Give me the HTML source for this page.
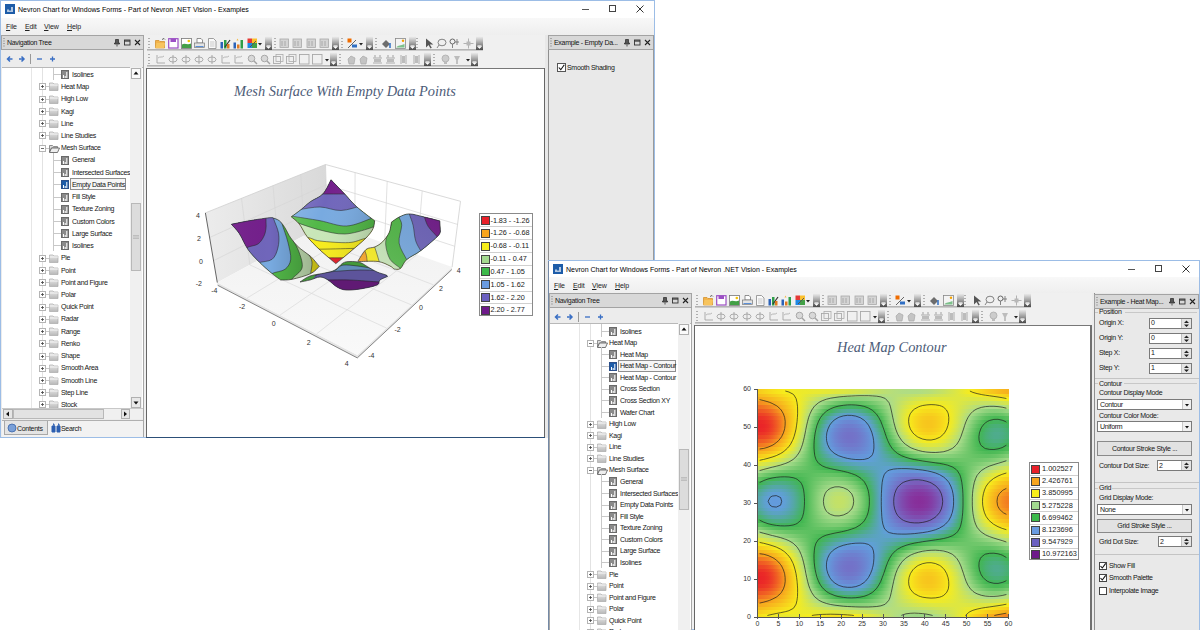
<!DOCTYPE html><html><head><meta charset="utf-8"><style>
html,body{margin:0;padding:0;background:#fff}
#r{position:relative;width:1200px;height:630px;overflow:hidden;background:#ffffff;font-family:"Liberation Sans",sans-serif}
#r div,#r span,#r svg{position:absolute}
#r span{white-space:nowrap;line-height:0;}
</style></head><body><div id="r">
<div style="left:0px;top:0px;width:655px;height:438px;background:#f0f0f0;border:1px solid #9cbde6;box-sizing:border-box"></div>
<div style="left:1px;top:1px;width:653px;height:17px;background:#fff"></div>
<div style="left:5px;top:4px;width:10px;height:10px;background:#1d5ca8"></div>
<svg style="left:5px;top:4px" width="10" height="10"><path d="M3 5.5v2.5M5 6.5v1.5M7 3v5" stroke="#fff" stroke-width="1.3"/></svg>
<span style="left:18px;top:9.8px;font-size:7px;color:#000">Nevron Chart for Windows Forms - Part of Nevron .NET Vision - Examples</span>
<div style="left:582px;top:9px;width:7px;height:1px;background:#555"></div>
<div style="left:609px;top:5px;width:7px;height:7px;border:1px solid #444;box-sizing:border-box"></div>
<svg style="left:636px;top:5px" width="8" height="8"><path d="M0.5 0.5L7.5 7.5M7.5 0.5L0.5 7.5" stroke="#333" stroke-width="1"/></svg>
<div style="left:1px;top:18px;width:653px;height:17px;background:linear-gradient(#f8f8f8,#eeeeee)"></div>
<span style="left:6px;top:27px;font-size:7px;color:#222;letter-spacing:-0.1px"><u>F</u>ile</span>
<span style="left:25px;top:27px;font-size:7px;color:#222;letter-spacing:-0.1px"><u>E</u>dit</span>
<span style="left:44px;top:27px;font-size:7px;color:#222;letter-spacing:-0.1px"><u>V</u>iew</span>
<span style="left:67px;top:27px;font-size:7px;color:#222;letter-spacing:-0.1px"><u>H</u>elp</span>
<div style="left:1px;top:35px;width:143px;height:402px;background:#ececec;border-right:1px solid #a8a8a8;box-sizing:border-box"></div>
<div style="left:1px;top:35px;width:143px;height:15px;background:#d8d8d8;border:1px solid #a3a3a3;box-sizing:border-box"></div>
<svg style="left:3px;top:38px" width="2" height="10"><path d="M1 0v10" stroke="#777" stroke-dasharray="1 1.5"/></svg>
<span style="left:7px;top:42.5px;font-size:7px;color:#151515;letter-spacing:-0.3px">Navigation Tree</span>
<svg style="left:113px;top:38px" width="30" height="9"><path d="M2.5 1.5h3v3.5h1v1h-5v-1h1zM4 6.5v2" stroke="#333" fill="#555" stroke-width="0.8"/><rect x="11.5" y="2" width="5.5" height="5" stroke="#333" fill="none" stroke-width="0.9"/><path d="M11.5 3h5.5" stroke="#333" stroke-width="1.2"/><path d="M22 2l5 5M27 2l-5 5" stroke="#222" stroke-width="1.1"/></svg>
<div style="left:2px;top:50px;width:141px;height:18px;background:#ececec"></div>
<svg style="left:6px;top:54px" width="60" height="10"><path d="M1.5 5h5M4 2.5L1.5 5 4 7.5" stroke="#3a6fc4" stroke-width="1.5" fill="none"/><path d="M13 5h5M15.5 2.5L18 5l-2.5 2.5" stroke="#3a6fc4" stroke-width="1.5" fill="none"/><path d="M24.5 0v10" stroke="#999"/><path d="M31 5h5" stroke="#3a6fc4" stroke-width="1.3"/><path d="M44 5h5M46.5 2.5v5" stroke="#3a6fc4" stroke-width="1.3"/></svg>
<div style="left:2px;top:67px;width:141px;height:342px;background:#fff;border-top:1px solid #b8b8b8;box-sizing:border-box"></div>
<div style="left:2px;top:68px;width:128px;height:340px;overflow:hidden;background:#fff">
<div style="left:29px;top:0px;width:1px;height:340px;background:#e6e6e6"></div>
<div style="left:40px;top:0px;width:1px;height:340px;background:#e2e2e2"></div>
<div style="left:51px;top:-0.7999999999999998px;width:1px;height:13px;background:#c8c8c8"></div>
<div style="left:52px;top:6.2px;width:7px;height:1px;background:#c8c8c8"></div>
<svg style="left:59px;top:2.2px" width="8" height="9"><rect width="8" height="9" fill="#8a8a8a"/><rect x="0.5" y="0.5" width="7" height="8" fill="none" stroke="#6a6a6a"/><path d="M2.5 5v3M4.2 6v2M5.8 2v6" stroke="#fff" stroke-width="1"/></svg>
<span style="left:70px;top:6.8px;font-size:7px;color:#151515;letter-spacing:-0.3px">Isolines</span>
<div style="left:44px;top:18.4px;width:3px;height:1px;background:#c8c8c8"></div>
<svg style="left:37px;top:15.399999999999999px" width="7" height="7"><rect x="0.5" y="0.5" width="6" height="6" fill="#fff" stroke="#b4b4b4"/><path d="M2 3.5h3M3.5 2v3" stroke="#444" stroke-width="0.8"/></svg>
<svg style="left:47px;top:14.399999999999999px" width="10" height="9"><defs><linearGradient id="fg" x1="0" y1="0" x2="0" y2="1"><stop offset="0" stop-color="#e8e8e8"/><stop offset="1" stop-color="#b8b8b8"/></linearGradient></defs><path d="M0.5 1h3.5l1 1h4v6.5h-8.5z" fill="url(#fg)" stroke="#aaa" stroke-width="0.7"/><path d="M0.7 3h8.6" stroke="#f4f4f4"/></svg>
<span style="left:59px;top:19.0px;font-size:7px;color:#151515;letter-spacing:-0.3px">Heat Map</span>
<div style="left:44px;top:30.7px;width:3px;height:1px;background:#c8c8c8"></div>
<svg style="left:37px;top:27.7px" width="7" height="7"><rect x="0.5" y="0.5" width="6" height="6" fill="#fff" stroke="#b4b4b4"/><path d="M2 3.5h3M3.5 2v3" stroke="#444" stroke-width="0.8"/></svg>
<svg style="left:47px;top:26.7px" width="10" height="9"><defs><linearGradient id="fg" x1="0" y1="0" x2="0" y2="1"><stop offset="0" stop-color="#e8e8e8"/><stop offset="1" stop-color="#b8b8b8"/></linearGradient></defs><path d="M0.5 1h3.5l1 1h4v6.5h-8.5z" fill="url(#fg)" stroke="#aaa" stroke-width="0.7"/><path d="M0.7 3h8.6" stroke="#f4f4f4"/></svg>
<span style="left:59px;top:31.3px;font-size:7px;color:#151515;letter-spacing:-0.3px">High Low</span>
<div style="left:44px;top:42.9px;width:3px;height:1px;background:#c8c8c8"></div>
<svg style="left:37px;top:39.9px" width="7" height="7"><rect x="0.5" y="0.5" width="6" height="6" fill="#fff" stroke="#b4b4b4"/><path d="M2 3.5h3M3.5 2v3" stroke="#444" stroke-width="0.8"/></svg>
<svg style="left:47px;top:38.9px" width="10" height="9"><defs><linearGradient id="fg" x1="0" y1="0" x2="0" y2="1"><stop offset="0" stop-color="#e8e8e8"/><stop offset="1" stop-color="#b8b8b8"/></linearGradient></defs><path d="M0.5 1h3.5l1 1h4v6.5h-8.5z" fill="url(#fg)" stroke="#aaa" stroke-width="0.7"/><path d="M0.7 3h8.6" stroke="#f4f4f4"/></svg>
<span style="left:59px;top:43.5px;font-size:7px;color:#151515;letter-spacing:-0.3px">Kagi</span>
<div style="left:44px;top:55.1px;width:3px;height:1px;background:#c8c8c8"></div>
<svg style="left:37px;top:52.1px" width="7" height="7"><rect x="0.5" y="0.5" width="6" height="6" fill="#fff" stroke="#b4b4b4"/><path d="M2 3.5h3M3.5 2v3" stroke="#444" stroke-width="0.8"/></svg>
<svg style="left:47px;top:51.1px" width="10" height="9"><defs><linearGradient id="fg" x1="0" y1="0" x2="0" y2="1"><stop offset="0" stop-color="#e8e8e8"/><stop offset="1" stop-color="#b8b8b8"/></linearGradient></defs><path d="M0.5 1h3.5l1 1h4v6.5h-8.5z" fill="url(#fg)" stroke="#aaa" stroke-width="0.7"/><path d="M0.7 3h8.6" stroke="#f4f4f4"/></svg>
<span style="left:59px;top:55.7px;font-size:7px;color:#151515;letter-spacing:-0.3px">Line</span>
<div style="left:44px;top:67.4px;width:3px;height:1px;background:#c8c8c8"></div>
<svg style="left:37px;top:64.4px" width="7" height="7"><rect x="0.5" y="0.5" width="6" height="6" fill="#fff" stroke="#b4b4b4"/><path d="M2 3.5h3M3.5 2v3" stroke="#444" stroke-width="0.8"/></svg>
<svg style="left:47px;top:63.400000000000006px" width="10" height="9"><defs><linearGradient id="fg" x1="0" y1="0" x2="0" y2="1"><stop offset="0" stop-color="#e8e8e8"/><stop offset="1" stop-color="#b8b8b8"/></linearGradient></defs><path d="M0.5 1h3.5l1 1h4v6.5h-8.5z" fill="url(#fg)" stroke="#aaa" stroke-width="0.7"/><path d="M0.7 3h8.6" stroke="#f4f4f4"/></svg>
<span style="left:59px;top:68.0px;font-size:7px;color:#151515;letter-spacing:-0.3px">Line Studies</span>
<div style="left:44px;top:79.6px;width:3px;height:1px;background:#c8c8c8"></div>
<svg style="left:37px;top:76.6px" width="7" height="7"><rect x="0.5" y="0.5" width="6" height="6" fill="#fff" stroke="#b4b4b4"/><path d="M2 3.5h3" stroke="#444" stroke-width="0.8"/></svg>
<svg style="left:47px;top:75.6px" width="11" height="9"><path d="M0.5 1.5h3l1 1h4v1.5H2.5L0.5 8z" fill="#ddd" stroke="#777" stroke-width="0.8"/><path d="M2.5 4h8l-2 4.5h-8z" fill="#eee" stroke="#555" stroke-width="0.8"/></svg>
<span style="left:59px;top:80.19999999999999px;font-size:7px;color:#151515;letter-spacing:-0.3px">Mesh Surface</span>
<div style="left:51px;top:84.8px;width:1px;height:13px;background:#c8c8c8"></div>
<div style="left:52px;top:91.8px;width:7px;height:1px;background:#c8c8c8"></div>
<svg style="left:59px;top:87.8px" width="8" height="9"><rect width="8" height="9" fill="#8a8a8a"/><rect x="0.5" y="0.5" width="7" height="8" fill="none" stroke="#6a6a6a"/><path d="M2.5 5v3M4.2 6v2M5.8 2v6" stroke="#fff" stroke-width="1"/></svg>
<span style="left:70px;top:92.39999999999999px;font-size:7px;color:#151515;letter-spacing:-0.3px">General</span>
<div style="left:51px;top:97.0px;width:1px;height:13px;background:#c8c8c8"></div>
<div style="left:52px;top:104.0px;width:7px;height:1px;background:#c8c8c8"></div>
<svg style="left:59px;top:100.0px" width="8" height="9"><rect width="8" height="9" fill="#8a8a8a"/><rect x="0.5" y="0.5" width="7" height="8" fill="none" stroke="#6a6a6a"/><path d="M2.5 5v3M4.2 6v2M5.8 2v6" stroke="#fff" stroke-width="1"/></svg>
<span style="left:70px;top:104.6px;font-size:7px;color:#151515;letter-spacing:-0.3px">Intersected Surfaces</span>
<div style="left:51px;top:109.3px;width:1px;height:13px;background:#c8c8c8"></div>
<div style="left:52px;top:116.3px;width:7px;height:1px;background:#c8c8c8"></div>
<svg style="left:59px;top:112.3px" width="8" height="9"><rect width="8" height="9" fill="#1d5ca8"/><rect x="0.5" y="0.5" width="7" height="8" fill="none" stroke="#2b4f8a"/><path d="M2.5 5v3M4.2 6v2M5.8 2v6" stroke="#fff" stroke-width="1"/></svg>
<div style="left:68px;top:110.3px;width:56px;height:12px;border:1px solid #8f8f8f;box-sizing:border-box;background:#f6f6f6"></div>
<span style="left:70px;top:116.89999999999999px;font-size:7px;color:#151515;letter-spacing:-0.3px">Empty Data Points</span>
<div style="left:51px;top:121.5px;width:1px;height:13px;background:#c8c8c8"></div>
<div style="left:52px;top:128.5px;width:7px;height:1px;background:#c8c8c8"></div>
<svg style="left:59px;top:124.5px" width="8" height="9"><rect width="8" height="9" fill="#8a8a8a"/><rect x="0.5" y="0.5" width="7" height="8" fill="none" stroke="#6a6a6a"/><path d="M2.5 5v3M4.2 6v2M5.8 2v6" stroke="#fff" stroke-width="1"/></svg>
<span style="left:70px;top:129.1px;font-size:7px;color:#151515;letter-spacing:-0.3px">Fill Style</span>
<div style="left:51px;top:133.7px;width:1px;height:13px;background:#c8c8c8"></div>
<div style="left:52px;top:140.7px;width:7px;height:1px;background:#c8c8c8"></div>
<svg style="left:59px;top:136.7px" width="8" height="9"><rect width="8" height="9" fill="#8a8a8a"/><rect x="0.5" y="0.5" width="7" height="8" fill="none" stroke="#6a6a6a"/><path d="M2.5 5v3M4.2 6v2M5.8 2v6" stroke="#fff" stroke-width="1"/></svg>
<span style="left:70px;top:141.29999999999998px;font-size:7px;color:#151515;letter-spacing:-0.3px">Texture Zoning</span>
<div style="left:51px;top:146.0px;width:1px;height:13px;background:#c8c8c8"></div>
<div style="left:52px;top:153.0px;width:7px;height:1px;background:#c8c8c8"></div>
<svg style="left:59px;top:149.0px" width="8" height="9"><rect width="8" height="9" fill="#8a8a8a"/><rect x="0.5" y="0.5" width="7" height="8" fill="none" stroke="#6a6a6a"/><path d="M2.5 5v3M4.2 6v2M5.8 2v6" stroke="#fff" stroke-width="1"/></svg>
<span style="left:70px;top:153.6px;font-size:7px;color:#151515;letter-spacing:-0.3px">Custom Colors</span>
<div style="left:51px;top:158.2px;width:1px;height:13px;background:#c8c8c8"></div>
<div style="left:52px;top:165.2px;width:7px;height:1px;background:#c8c8c8"></div>
<svg style="left:59px;top:161.2px" width="8" height="9"><rect width="8" height="9" fill="#8a8a8a"/><rect x="0.5" y="0.5" width="7" height="8" fill="none" stroke="#6a6a6a"/><path d="M2.5 5v3M4.2 6v2M5.8 2v6" stroke="#fff" stroke-width="1"/></svg>
<span style="left:70px;top:165.79999999999998px;font-size:7px;color:#151515;letter-spacing:-0.3px">Large Surface</span>
<div style="left:51px;top:170.4px;width:1px;height:13px;background:#c8c8c8"></div>
<div style="left:52px;top:177.4px;width:7px;height:1px;background:#c8c8c8"></div>
<svg style="left:59px;top:173.4px" width="8" height="9"><rect width="8" height="9" fill="#8a8a8a"/><rect x="0.5" y="0.5" width="7" height="8" fill="none" stroke="#6a6a6a"/><path d="M2.5 5v3M4.2 6v2M5.8 2v6" stroke="#fff" stroke-width="1"/></svg>
<span style="left:70px;top:178.0px;font-size:7px;color:#151515;letter-spacing:-0.3px">Isolines</span>
<div style="left:44px;top:189.7px;width:3px;height:1px;background:#c8c8c8"></div>
<svg style="left:37px;top:186.7px" width="7" height="7"><rect x="0.5" y="0.5" width="6" height="6" fill="#fff" stroke="#b4b4b4"/><path d="M2 3.5h3M3.5 2v3" stroke="#444" stroke-width="0.8"/></svg>
<svg style="left:47px;top:185.7px" width="10" height="9"><defs><linearGradient id="fg" x1="0" y1="0" x2="0" y2="1"><stop offset="0" stop-color="#e8e8e8"/><stop offset="1" stop-color="#b8b8b8"/></linearGradient></defs><path d="M0.5 1h3.5l1 1h4v6.5h-8.5z" fill="url(#fg)" stroke="#aaa" stroke-width="0.7"/><path d="M0.7 3h8.6" stroke="#f4f4f4"/></svg>
<span style="left:59px;top:190.29999999999998px;font-size:7px;color:#151515;letter-spacing:-0.3px">Pie</span>
<div style="left:44px;top:201.9px;width:3px;height:1px;background:#c8c8c8"></div>
<svg style="left:37px;top:198.9px" width="7" height="7"><rect x="0.5" y="0.5" width="6" height="6" fill="#fff" stroke="#b4b4b4"/><path d="M2 3.5h3M3.5 2v3" stroke="#444" stroke-width="0.8"/></svg>
<svg style="left:47px;top:197.9px" width="10" height="9"><defs><linearGradient id="fg" x1="0" y1="0" x2="0" y2="1"><stop offset="0" stop-color="#e8e8e8"/><stop offset="1" stop-color="#b8b8b8"/></linearGradient></defs><path d="M0.5 1h3.5l1 1h4v6.5h-8.5z" fill="url(#fg)" stroke="#aaa" stroke-width="0.7"/><path d="M0.7 3h8.6" stroke="#f4f4f4"/></svg>
<span style="left:59px;top:202.5px;font-size:7px;color:#151515;letter-spacing:-0.3px">Point</span>
<div style="left:44px;top:214.1px;width:3px;height:1px;background:#c8c8c8"></div>
<svg style="left:37px;top:211.1px" width="7" height="7"><rect x="0.5" y="0.5" width="6" height="6" fill="#fff" stroke="#b4b4b4"/><path d="M2 3.5h3M3.5 2v3" stroke="#444" stroke-width="0.8"/></svg>
<svg style="left:47px;top:210.1px" width="10" height="9"><defs><linearGradient id="fg" x1="0" y1="0" x2="0" y2="1"><stop offset="0" stop-color="#e8e8e8"/><stop offset="1" stop-color="#b8b8b8"/></linearGradient></defs><path d="M0.5 1h3.5l1 1h4v6.5h-8.5z" fill="url(#fg)" stroke="#aaa" stroke-width="0.7"/><path d="M0.7 3h8.6" stroke="#f4f4f4"/></svg>
<span style="left:59px;top:214.7px;font-size:7px;color:#151515;letter-spacing:-0.3px">Point and Figure</span>
<div style="left:44px;top:226.3px;width:3px;height:1px;background:#c8c8c8"></div>
<svg style="left:37px;top:223.3px" width="7" height="7"><rect x="0.5" y="0.5" width="6" height="6" fill="#fff" stroke="#b4b4b4"/><path d="M2 3.5h3M3.5 2v3" stroke="#444" stroke-width="0.8"/></svg>
<svg style="left:47px;top:222.3px" width="10" height="9"><defs><linearGradient id="fg" x1="0" y1="0" x2="0" y2="1"><stop offset="0" stop-color="#e8e8e8"/><stop offset="1" stop-color="#b8b8b8"/></linearGradient></defs><path d="M0.5 1h3.5l1 1h4v6.5h-8.5z" fill="url(#fg)" stroke="#aaa" stroke-width="0.7"/><path d="M0.7 3h8.6" stroke="#f4f4f4"/></svg>
<span style="left:59px;top:226.9px;font-size:7px;color:#151515;letter-spacing:-0.3px">Polar</span>
<div style="left:44px;top:238.6px;width:3px;height:1px;background:#c8c8c8"></div>
<svg style="left:37px;top:235.6px" width="7" height="7"><rect x="0.5" y="0.5" width="6" height="6" fill="#fff" stroke="#b4b4b4"/><path d="M2 3.5h3M3.5 2v3" stroke="#444" stroke-width="0.8"/></svg>
<svg style="left:47px;top:234.6px" width="10" height="9"><defs><linearGradient id="fg" x1="0" y1="0" x2="0" y2="1"><stop offset="0" stop-color="#e8e8e8"/><stop offset="1" stop-color="#b8b8b8"/></linearGradient></defs><path d="M0.5 1h3.5l1 1h4v6.5h-8.5z" fill="url(#fg)" stroke="#aaa" stroke-width="0.7"/><path d="M0.7 3h8.6" stroke="#f4f4f4"/></svg>
<span style="left:59px;top:239.2px;font-size:7px;color:#151515;letter-spacing:-0.3px">Quick Point</span>
<div style="left:44px;top:250.8px;width:3px;height:1px;background:#c8c8c8"></div>
<svg style="left:37px;top:247.8px" width="7" height="7"><rect x="0.5" y="0.5" width="6" height="6" fill="#fff" stroke="#b4b4b4"/><path d="M2 3.5h3M3.5 2v3" stroke="#444" stroke-width="0.8"/></svg>
<svg style="left:47px;top:246.8px" width="10" height="9"><defs><linearGradient id="fg" x1="0" y1="0" x2="0" y2="1"><stop offset="0" stop-color="#e8e8e8"/><stop offset="1" stop-color="#b8b8b8"/></linearGradient></defs><path d="M0.5 1h3.5l1 1h4v6.5h-8.5z" fill="url(#fg)" stroke="#aaa" stroke-width="0.7"/><path d="M0.7 3h8.6" stroke="#f4f4f4"/></svg>
<span style="left:59px;top:251.4px;font-size:7px;color:#151515;letter-spacing:-0.3px">Radar</span>
<div style="left:44px;top:263.0px;width:3px;height:1px;background:#c8c8c8"></div>
<svg style="left:37px;top:260.0px" width="7" height="7"><rect x="0.5" y="0.5" width="6" height="6" fill="#fff" stroke="#b4b4b4"/><path d="M2 3.5h3M3.5 2v3" stroke="#444" stroke-width="0.8"/></svg>
<svg style="left:47px;top:259.0px" width="10" height="9"><defs><linearGradient id="fg" x1="0" y1="0" x2="0" y2="1"><stop offset="0" stop-color="#e8e8e8"/><stop offset="1" stop-color="#b8b8b8"/></linearGradient></defs><path d="M0.5 1h3.5l1 1h4v6.5h-8.5z" fill="url(#fg)" stroke="#aaa" stroke-width="0.7"/><path d="M0.7 3h8.6" stroke="#f4f4f4"/></svg>
<span style="left:59px;top:263.6px;font-size:7px;color:#151515;letter-spacing:-0.3px">Range</span>
<div style="left:44px;top:275.3px;width:3px;height:1px;background:#c8c8c8"></div>
<svg style="left:37px;top:272.3px" width="7" height="7"><rect x="0.5" y="0.5" width="6" height="6" fill="#fff" stroke="#b4b4b4"/><path d="M2 3.5h3M3.5 2v3" stroke="#444" stroke-width="0.8"/></svg>
<svg style="left:47px;top:271.3px" width="10" height="9"><defs><linearGradient id="fg" x1="0" y1="0" x2="0" y2="1"><stop offset="0" stop-color="#e8e8e8"/><stop offset="1" stop-color="#b8b8b8"/></linearGradient></defs><path d="M0.5 1h3.5l1 1h4v6.5h-8.5z" fill="url(#fg)" stroke="#aaa" stroke-width="0.7"/><path d="M0.7 3h8.6" stroke="#f4f4f4"/></svg>
<span style="left:59px;top:275.90000000000003px;font-size:7px;color:#151515;letter-spacing:-0.3px">Renko</span>
<div style="left:44px;top:287.5px;width:3px;height:1px;background:#c8c8c8"></div>
<svg style="left:37px;top:284.5px" width="7" height="7"><rect x="0.5" y="0.5" width="6" height="6" fill="#fff" stroke="#b4b4b4"/><path d="M2 3.5h3M3.5 2v3" stroke="#444" stroke-width="0.8"/></svg>
<svg style="left:47px;top:283.5px" width="10" height="9"><defs><linearGradient id="fg" x1="0" y1="0" x2="0" y2="1"><stop offset="0" stop-color="#e8e8e8"/><stop offset="1" stop-color="#b8b8b8"/></linearGradient></defs><path d="M0.5 1h3.5l1 1h4v6.5h-8.5z" fill="url(#fg)" stroke="#aaa" stroke-width="0.7"/><path d="M0.7 3h8.6" stroke="#f4f4f4"/></svg>
<span style="left:59px;top:288.1px;font-size:7px;color:#151515;letter-spacing:-0.3px">Shape</span>
<div style="left:44px;top:299.7px;width:3px;height:1px;background:#c8c8c8"></div>
<svg style="left:37px;top:296.7px" width="7" height="7"><rect x="0.5" y="0.5" width="6" height="6" fill="#fff" stroke="#b4b4b4"/><path d="M2 3.5h3M3.5 2v3" stroke="#444" stroke-width="0.8"/></svg>
<svg style="left:47px;top:295.7px" width="10" height="9"><defs><linearGradient id="fg" x1="0" y1="0" x2="0" y2="1"><stop offset="0" stop-color="#e8e8e8"/><stop offset="1" stop-color="#b8b8b8"/></linearGradient></defs><path d="M0.5 1h3.5l1 1h4v6.5h-8.5z" fill="url(#fg)" stroke="#aaa" stroke-width="0.7"/><path d="M0.7 3h8.6" stroke="#f4f4f4"/></svg>
<span style="left:59px;top:300.3px;font-size:7px;color:#151515;letter-spacing:-0.3px">Smooth Area</span>
<div style="left:44px;top:311.9px;width:3px;height:1px;background:#c8c8c8"></div>
<svg style="left:37px;top:308.9px" width="7" height="7"><rect x="0.5" y="0.5" width="6" height="6" fill="#fff" stroke="#b4b4b4"/><path d="M2 3.5h3M3.5 2v3" stroke="#444" stroke-width="0.8"/></svg>
<svg style="left:47px;top:307.9px" width="10" height="9"><defs><linearGradient id="fg" x1="0" y1="0" x2="0" y2="1"><stop offset="0" stop-color="#e8e8e8"/><stop offset="1" stop-color="#b8b8b8"/></linearGradient></defs><path d="M0.5 1h3.5l1 1h4v6.5h-8.5z" fill="url(#fg)" stroke="#aaa" stroke-width="0.7"/><path d="M0.7 3h8.6" stroke="#f4f4f4"/></svg>
<span style="left:59px;top:312.5px;font-size:7px;color:#151515;letter-spacing:-0.3px">Smooth Line</span>
<div style="left:44px;top:324.2px;width:3px;height:1px;background:#c8c8c8"></div>
<svg style="left:37px;top:321.2px" width="7" height="7"><rect x="0.5" y="0.5" width="6" height="6" fill="#fff" stroke="#b4b4b4"/><path d="M2 3.5h3M3.5 2v3" stroke="#444" stroke-width="0.8"/></svg>
<svg style="left:47px;top:320.2px" width="10" height="9"><defs><linearGradient id="fg" x1="0" y1="0" x2="0" y2="1"><stop offset="0" stop-color="#e8e8e8"/><stop offset="1" stop-color="#b8b8b8"/></linearGradient></defs><path d="M0.5 1h3.5l1 1h4v6.5h-8.5z" fill="url(#fg)" stroke="#aaa" stroke-width="0.7"/><path d="M0.7 3h8.6" stroke="#f4f4f4"/></svg>
<span style="left:59px;top:324.8px;font-size:7px;color:#151515;letter-spacing:-0.3px">Step Line</span>
<div style="left:44px;top:336.4px;width:3px;height:1px;background:#c8c8c8"></div>
<svg style="left:37px;top:333.4px" width="7" height="7"><rect x="0.5" y="0.5" width="6" height="6" fill="#fff" stroke="#b4b4b4"/><path d="M2 3.5h3M3.5 2v3" stroke="#444" stroke-width="0.8"/></svg>
<svg style="left:47px;top:332.4px" width="10" height="9"><defs><linearGradient id="fg" x1="0" y1="0" x2="0" y2="1"><stop offset="0" stop-color="#e8e8e8"/><stop offset="1" stop-color="#b8b8b8"/></linearGradient></defs><path d="M0.5 1h3.5l1 1h4v6.5h-8.5z" fill="url(#fg)" stroke="#aaa" stroke-width="0.7"/><path d="M0.7 3h8.6" stroke="#f4f4f4"/></svg>
<span style="left:59px;top:337.0px;font-size:7px;color:#151515;letter-spacing:-0.3px">Stock</span>
</div>
<div style="left:130px;top:67px;width:12px;height:341px;background:#f0f0f0"></div>
<div style="left:131px;top:68px;width:10px;height:11px;background:#fafafa;border:1px solid #b0b0b0;box-sizing:border-box"></div>
<svg style="left:131px;top:68px" width="10" height="11"><path d="M2.5 6.5h5l-2.5-3z" fill="#111"/></svg>
<div style="left:131px;top:397px;width:10px;height:11px;background:#e8e8e8;border:1px solid #b0b0b0;box-sizing:border-box"></div>
<svg style="left:131px;top:397px" width="10" height="11"><path d="M2.5 4.5h5l-2.5 3z" fill="#111"/></svg>
<div style="left:131px;top:203px;width:10px;height:68px;background:#dcdcdc;border:1px solid #b8b8b8;box-sizing:border-box"></div>
<svg style="left:133px;top:235px" width="6" height="4"><path d="M0 0.5h6M0 2h6M0 3.5h6" stroke="#aaa" stroke-width="0.6"/></svg>
<div style="left:2px;top:408px;width:141px;height:11px;background:#f0f0f0;border-top:1px solid #c8c8c8;box-sizing:border-box"></div>
<div style="left:3px;top:409px;width:10px;height:10px;background:#e6e6e6;border:1px solid #b0b0b0;box-sizing:border-box"></div>
<svg style="left:3px;top:409px" width="10" height="10"><path d="M6 2.5v5l-3-2.5z" fill="#111"/></svg>
<div style="left:13px;top:409px;width:91px;height:10px;background:#e2e2e2;border:1px solid #b8b8b8;box-sizing:border-box"></div>
<div style="left:121px;top:409px;width:9px;height:10px;background:#e6e6e6;border:1px solid #b0b0b0;box-sizing:border-box"></div>
<svg style="left:121px;top:409px" width="9" height="10"><path d="M3 2.5v5l3-2.5z" fill="#111"/></svg>
<div style="left:2px;top:420px;width:141px;height:17px;background:#f2f2f2;border-top:1px solid #b0b0b0;box-sizing:border-box"></div>
<div style="left:4px;top:421px;width:44px;height:14px;background:#e4e4e4;border:1px solid #a8a8a8;border-top:none;box-sizing:border-box"></div>
<svg style="left:7px;top:423px" width="10" height="10"><circle cx="5" cy="5" r="4" fill="#7aa0d8" stroke="#3a64a8" stroke-width="0.8"/></svg>
<span style="left:17px;top:428.5px;font-size:7px;color:#151515;letter-spacing:-0.3px">Contents</span>
<svg style="left:51px;top:423px" width="10" height="10"><path d="M1 3h3v6H1zM6 3h3v6H6zM2 1h1v2M7 1h1v2" fill="#2d5fb0" stroke="#2d5fb0"/></svg>
<span style="left:61px;top:428.5px;font-size:7px;color:#151515;letter-spacing:-0.3px">Search</span>
<div style="left:145px;top:35px;width:402px;height:33px;background:#f0f0f0"></div>
<div style="left:147px;top:49px;width:126px;height:2px;background:linear-gradient(#a8a8a8,#d8d8d8)"></div>
<div style="left:273px;top:49px;width:67px;height:2px;background:linear-gradient(#a8a8a8,#d8d8d8)"></div>
<div style="left:340px;top:49px;width:34px;height:2px;background:linear-gradient(#a8a8a8,#d8d8d8)"></div>
<div style="left:374px;top:49px;width:42px;height:2px;background:linear-gradient(#a8a8a8,#d8d8d8)"></div>
<div style="left:415px;top:49px;width:68px;height:2px;background:linear-gradient(#a8a8a8,#d8d8d8)"></div>
<div style="left:147px;top:65px;width:190px;height:2px;background:linear-gradient(#a8a8a8,#d8d8d8)"></div>
<div style="left:337px;top:65px;width:94px;height:2px;background:linear-gradient(#a8a8a8,#d8d8d8)"></div>
<div style="left:431px;top:65px;width:47px;height:2px;background:linear-gradient(#a8a8a8,#d8d8d8)"></div>
<svg style="left:148px;top:38px" width="2" height="11"><path d="M1 0V11" stroke="#6f6f6f" stroke-width="1" stroke-dasharray="1 2"/></svg>
<svg style="left:274px;top:38px" width="2" height="11"><path d="M1 0V11" stroke="#6f6f6f" stroke-width="1" stroke-dasharray="1 2"/></svg>
<svg style="left:341px;top:38px" width="2" height="11"><path d="M1 0V11" stroke="#6f6f6f" stroke-width="1" stroke-dasharray="1 2"/></svg>
<svg style="left:375px;top:38px" width="2" height="11"><path d="M1 0V11" stroke="#6f6f6f" stroke-width="1" stroke-dasharray="1 2"/></svg>
<svg style="left:416px;top:38px" width="2" height="11"><path d="M1 0V11" stroke="#6f6f6f" stroke-width="1" stroke-dasharray="1 2"/></svg>
<svg style="left:148px;top:54px" width="2" height="11"><path d="M1 0V11" stroke="#6f6f6f" stroke-width="1" stroke-dasharray="1 2"/></svg>
<svg style="left:339px;top:54px" width="2" height="11"><path d="M1 0V11" stroke="#6f6f6f" stroke-width="1" stroke-dasharray="1 2"/></svg>
<svg style="left:433px;top:54px" width="2" height="11"><path d="M1 0V11" stroke="#6f6f6f" stroke-width="1" stroke-dasharray="1 2"/></svg>
<svg style="left:155px;top:38px" width="11" height="11"><path d="M0.5 2.5h3.5l1 1h4.5v6.5H0.5z" fill="#f2b34a" stroke="#d08a20" stroke-width="0.7"/><path d="M1.5 5h8.5l-1 5H0.5z" fill="#f7c45e"/><path d="M7 1.5l2-1 1 1" stroke="#444" stroke-width="0.8" fill="none"/></svg>
<svg style="left:168px;top:38px" width="11" height="11"><rect x="0.7" y="0.7" width="9.3" height="9.3" fill="#fff" stroke="#9b4fc4" stroke-width="1.2"/><rect x="2.5" y="0.7" width="5.5" height="3.3" fill="#9b4fc4"/></svg>
<svg style="left:181px;top:38px" width="11" height="11"><rect x="0.5" y="0.5" width="10" height="10" fill="#fff" stroke="#777" stroke-width="0.8"/><path d="M1 10V6.5c3-2 5 1 9-1V10z" fill="#43a047"/><circle cx="7.8" cy="3" r="1.3" fill="#f5c400"/></svg>
<svg style="left:194px;top:38px" width="11" height="11"><path d="M3 0.5h4l1.5 1.5v3H3z" fill="#fff" stroke="#666" stroke-width="0.7"/><rect x="0.5" y="5" width="10" height="4.5" fill="#e4e4e4" stroke="#777" stroke-width="0.7"/><rect x="1.5" y="8" width="8" height="1" fill="#5b8fd6"/></svg>
<svg style="left:207px;top:38px" width="11" height="11"><path d="M1.5 0.5h5l2.5 2.5v7.5H1.5z" fill="#fafafa" stroke="#888" stroke-width="0.8"/><path d="M3 4h4.5M3 6h4.5M3 8h4.5" stroke="#aaa" stroke-width="0.6"/></svg>
<svg style="left:220px;top:38px" width="11" height="11"><rect x="0.5" y="4" width="2.5" height="6.5" fill="#2b62b8"/><rect x="4" y="2" width="2.5" height="8.5" fill="#2e9e48"/><path d="M5 9l5-7" stroke="#333" stroke-width="1.2"/><rect x="7" y="6" width="2.5" height="4.5" fill="#e07a20"/></svg>
<svg style="left:233px;top:38px" width="11" height="11"><rect x="0.5" y="4.5" width="2.5" height="6" fill="#2b62b8"/><rect x="4" y="6.5" width="2.5" height="4" fill="#e07a20"/><rect x="7.5" y="2" width="2.5" height="8.5" fill="#2e9e48"/><path d="M4.5 0.5l1 2h-2z" fill="#f2b840"/></svg>
<svg style="left:247px;top:38px" width="11" height="11"><rect x="0.5" y="0.5" width="4.5" height="4.5" fill="#e53935"/><rect x="5" y="0.5" width="5" height="4.5" fill="#fbc02d"/><rect x="0.5" y="5" width="4.5" height="5" fill="#1e88e5"/><rect x="5" y="5" width="5" height="5" fill="#43a047"/><path d="M3 9l6-6" stroke="#555" stroke-width="1"/></svg>
<svg style="left:279px;top:38px" width="11" height="11"><rect x="1" y="1" width="8.5" height="8.5" fill="#d4d4d4" stroke="#a8a8a8" stroke-width="0.8"/><path d="M3 3v5M6 3v5" stroke="#a0a0a0" stroke-width="0.8"/></svg>
<svg style="left:292px;top:38px" width="11" height="11"><rect x="1" y="1" width="8.5" height="8.5" fill="#d4d4d4" stroke="#a8a8a8" stroke-width="0.8"/><path d="M3 3v5M6 3v5" stroke="#a0a0a0" stroke-width="0.8"/></svg>
<svg style="left:306px;top:38px" width="11" height="11"><rect x="1" y="1" width="8.5" height="8.5" fill="#d4d4d4" stroke="#a8a8a8" stroke-width="0.8"/><path d="M3 3v5M6 3v5" stroke="#a0a0a0" stroke-width="0.8"/></svg>
<svg style="left:319px;top:38px" width="11" height="11"><rect x="1" y="1" width="8.5" height="8.5" fill="#d4d4d4" stroke="#a8a8a8" stroke-width="0.8"/><path d="M3 3v5M6 3v5" stroke="#a0a0a0" stroke-width="0.8"/></svg>
<svg style="left:347px;top:38px" width="11" height="11"><rect x="0.5" y="0.5" width="4" height="4" fill="#ef6c00"/><path d="M1 10L9 2" stroke="#555" stroke-width="0.9"/><rect x="5" y="6.5" width="5" height="3" fill="#2f6fc4"/></svg>
<svg style="left:381px;top:38px" width="11" height="11"><path d="M1 6l4-4 4 4-4 4z" fill="#6d6d6d"/><path d="M9 5v5" stroke="#2f6fc4" stroke-width="1.5"/></svg>
<svg style="left:395px;top:38px" width="11" height="11"><rect x="0.5" y="0.5" width="10" height="10" fill="#f4f4f4" stroke="#888" stroke-width="0.8"/><path d="M1.5 9c2-2 4-1 8-3v3.5h-8z" fill="#7cc08a"/><circle cx="8" cy="2.8" r="1.2" fill="#f5a300"/></svg>
<svg style="left:424px;top:38px" width="11" height="11"><path d="M2 0.5v9l2.5-2.5 2 3.5 1.3-.7-2-3.3h3.5z" fill="#555"/></svg>
<svg style="left:436px;top:38px" width="11" height="11"><ellipse cx="6" cy="4.5" rx="4" ry="3.3" fill="none" stroke="#777" stroke-width="0.9"/><path d="M3 7l-2 3" stroke="#777" stroke-width="0.9"/></svg>
<svg style="left:449px;top:38px" width="11" height="11"><circle cx="3.5" cy="3.5" r="2.5" fill="none" stroke="#666" stroke-width="1"/><path d="M3.5 6v4M8 1v6M6 4h4" stroke="#777" stroke-width="0.9"/></svg>
<svg style="left:463px;top:38px" width="11" height="11"><path d="M5.5 0.5v10M0.5 5.5h10" stroke="#aaa" stroke-width="0.9"/><rect x="3.5" y="3.5" width="4" height="4" fill="#b8b8b8"/></svg>
<svg style="left:258px;top:43px" width="5" height="4"><path d="M0 0h4l-2 2.5z" fill="#222"/></svg>
<svg style="left:359px;top:43px" width="5" height="4"><path d="M0 0h4l-2 2.5z" fill="#222"/></svg>
<div style="left:265px;top:36px;width:7px;height:14px;background:linear-gradient(#f4f4f4,#9a9a9a 55%,#4a4a4a)"></div><svg style="left:266px;top:45px" width="5" height="4"><path d="M0.5 0.5h4M0.5 1.5h4l-2 2z" stroke="#fff" stroke-width="0.6" fill="#fff"/></svg>
<div style="left:332px;top:36px;width:7px;height:14px;background:linear-gradient(#f4f4f4,#9a9a9a 55%,#4a4a4a)"></div><svg style="left:333px;top:45px" width="5" height="4"><path d="M0.5 0.5h4M0.5 1.5h4l-2 2z" stroke="#fff" stroke-width="0.6" fill="#fff"/></svg>
<div style="left:366px;top:36px;width:7px;height:14px;background:linear-gradient(#f4f4f4,#9a9a9a 55%,#4a4a4a)"></div><svg style="left:367px;top:45px" width="5" height="4"><path d="M0.5 0.5h4M0.5 1.5h4l-2 2z" stroke="#fff" stroke-width="0.6" fill="#fff"/></svg>
<div style="left:409px;top:36px;width:7px;height:14px;background:linear-gradient(#f4f4f4,#9a9a9a 55%,#4a4a4a)"></div><svg style="left:410px;top:45px" width="5" height="4"><path d="M0.5 0.5h4M0.5 1.5h4l-2 2z" stroke="#fff" stroke-width="0.6" fill="#fff"/></svg>
<div style="left:476px;top:36px;width:7px;height:14px;background:linear-gradient(#f4f4f4,#9a9a9a 55%,#4a4a4a)"></div><svg style="left:477px;top:45px" width="5" height="4"><path d="M0.5 0.5h4M0.5 1.5h4l-2 2z" stroke="#fff" stroke-width="0.6" fill="#fff"/></svg>
<svg style="left:155px;top:54px" width="11" height="11"><path d="M2 1v8h8" stroke="#a4a4a4" stroke-width="0.9" fill="none"/><path d="M3 4c2-2 4 0 6-2" stroke="#a8a8a8" stroke-width="0.8" fill="none"/></svg>
<svg style="left:168px;top:54px" width="11" height="11"><ellipse cx="5" cy="5.5" rx="4" ry="2.5" fill="none" stroke="#a4a4a4" stroke-width="0.9"/><path d="M5 1v9" stroke="#a2a2a2" stroke-width="0.9"/></svg>
<svg style="left:181px;top:54px" width="11" height="11"><ellipse cx="5" cy="5.5" rx="4" ry="2.5" fill="none" stroke="#a4a4a4" stroke-width="0.9"/><path d="M5 1v9" stroke="#a2a2a2" stroke-width="0.9"/></svg>
<svg style="left:194px;top:54px" width="11" height="11"><ellipse cx="5" cy="5.5" rx="4" ry="2.5" fill="none" stroke="#a4a4a4" stroke-width="0.9"/><path d="M5 1v9" stroke="#a2a2a2" stroke-width="0.9"/></svg>
<svg style="left:207px;top:54px" width="11" height="11"><ellipse cx="5" cy="5.5" rx="4" ry="2.5" fill="none" stroke="#a4a4a4" stroke-width="0.9"/><path d="M5 1v9" stroke="#a2a2a2" stroke-width="0.9"/></svg>
<svg style="left:220px;top:54px" width="11" height="11"><path d="M2 1v8h8" stroke="#a4a4a4" stroke-width="0.9" fill="none"/><path d="M3 4c2-2 4 0 6-2" stroke="#a8a8a8" stroke-width="0.8" fill="none"/></svg>
<svg style="left:233px;top:54px" width="11" height="11"><path d="M2 1v8h8" stroke="#a4a4a4" stroke-width="0.9" fill="none"/><path d="M3 4c2-2 4 0 6-2" stroke="#a8a8a8" stroke-width="0.8" fill="none"/></svg>
<svg style="left:247px;top:54px" width="11" height="11"><circle cx="4.5" cy="4.5" r="3.3" fill="#d8d8d8" stroke="#a2a2a2" stroke-width="0.9"/><path d="M7 7l3 3" stroke="#a2a2a2" stroke-width="1.4"/></svg>
<svg style="left:260px;top:54px" width="11" height="11"><circle cx="4.5" cy="4.5" r="3.3" fill="#d8d8d8" stroke="#a2a2a2" stroke-width="0.9"/><path d="M7 7l3 3" stroke="#a2a2a2" stroke-width="1.4"/></svg>
<svg style="left:273px;top:54px" width="11" height="11"><rect x="0.5" y="2.5" width="7" height="7" fill="none" stroke="#a4a4a4" stroke-width="0.8"/><rect x="3" y="0.5" width="7" height="7" fill="none" stroke="#acacac" stroke-width="0.8"/></svg>
<svg style="left:286px;top:54px" width="11" height="11"><rect x="0.5" y="2.5" width="7" height="7" fill="none" stroke="#a4a4a4" stroke-width="0.8"/><rect x="3" y="0.5" width="7" height="7" fill="none" stroke="#acacac" stroke-width="0.8"/></svg>
<svg style="left:299px;top:54px" width="11" height="11"><rect x="0.5" y="0.5" width="9.5" height="9.5" fill="none" stroke="#a8a8a8" stroke-width="0.9"/></svg>
<svg style="left:312px;top:54px" width="11" height="11"><rect x="0.5" y="0.5" width="9.5" height="9.5" fill="none" stroke="#a8a8a8" stroke-width="0.9"/></svg>
<svg style="left:346px;top:54px" width="11" height="11"><path d="M2 5l3-3 4 2-1 6H3z" fill="#c4c4c4" stroke="#a8a8a8" stroke-width="0.7"/></svg>
<svg style="left:358px;top:54px" width="11" height="11"><path d="M2 5l3-3 4 2-1 6H3z" fill="#c4c4c4" stroke="#a8a8a8" stroke-width="0.7"/></svg>
<svg style="left:372px;top:54px" width="11" height="11"><path d="M1 4h9M1 9h9" stroke="#a4a4a4" stroke-width="0.9"/><rect x="2" y="5" width="7" height="3" fill="#bcbcbc"/><path d="M3 1v2.5M8 1v2.5" stroke="#a0a0a0"/></svg>
<svg style="left:385px;top:54px" width="11" height="11"><path d="M1 4h9M1 9h9" stroke="#a4a4a4" stroke-width="0.9"/><rect x="2" y="5" width="7" height="3" fill="#bcbcbc"/><path d="M3 1v2.5M8 1v2.5" stroke="#a0a0a0"/></svg>
<svg style="left:398px;top:54px" width="11" height="11"><path d="M3 1v9M8 1v9" stroke="#a4a4a4" stroke-width="0.9"/><rect x="4" y="2" width="3" height="7" fill="#bcbcbc"/></svg>
<svg style="left:411px;top:54px" width="11" height="11"><path d="M3 1v9M8 1v9" stroke="#a4a4a4" stroke-width="0.9"/><rect x="4" y="2" width="3" height="7" fill="#bcbcbc"/></svg>
<svg style="left:440px;top:54px" width="11" height="11"><circle cx="5.5" cy="4.5" r="3.5" fill="#cccccc" stroke="#acacac" stroke-width="0.8"/><rect x="4" y="8" width="3" height="2" fill="#bcbcbc"/></svg>
<svg style="left:453px;top:54px" width="11" height="11"><path d="M1 2h6l-2 4H3z" fill="#bcbcbc"/><path d="M4 6v4" stroke="#a2a2a2" stroke-width="1.2"/></svg>
<svg style="left:325px;top:59px" width="5" height="4"><path d="M0 0h4l-2 2.5z" fill="#222"/></svg>
<svg style="left:466px;top:59px" width="5" height="4"><path d="M0 0h4l-2 2.5z" fill="#222"/></svg>
<div style="left:330px;top:52px;width:7px;height:14px;background:linear-gradient(#f4f4f4,#9a9a9a 55%,#4a4a4a)"></div><svg style="left:331px;top:61px" width="5" height="4"><path d="M0.5 0.5h4M0.5 1.5h4l-2 2z" stroke="#fff" stroke-width="0.6" fill="#fff"/></svg>
<div style="left:424px;top:52px;width:7px;height:14px;background:linear-gradient(#f4f4f4,#9a9a9a 55%,#4a4a4a)"></div><svg style="left:425px;top:61px" width="5" height="4"><path d="M0.5 0.5h4M0.5 1.5h4l-2 2z" stroke="#fff" stroke-width="0.6" fill="#fff"/></svg>
<div style="left:471px;top:52px;width:7px;height:14px;background:linear-gradient(#f4f4f4,#9a9a9a 55%,#4a4a4a)"></div><svg style="left:472px;top:61px" width="5" height="4"><path d="M0.5 0.5h4M0.5 1.5h4l-2 2z" stroke="#fff" stroke-width="0.6" fill="#fff"/></svg>
<div style="left:146px;top:68px;width:399px;height:370px;background:#fff;border-left:1px solid #666;border-top:1px solid #777;box-sizing:border-box"></div>
<div style="left:544px;top:68px;width:1px;height:370px;background:#666"></div>
<div style="left:146px;top:437px;width:400px;height:1px;background:#2c4f78"></div>
<svg style="left:0;top:0" width="1200" height="630" viewBox="0 0 1200 630">
<defs><linearGradient id="wl" x1="0" y1="0" x2="1" y2="0"><stop offset="0" stop-color="#ececec"/><stop offset="1" stop-color="#d9d9d9"/></linearGradient><linearGradient id="fl" x1="0" y1="0" x2="0" y2="1"><stop offset="0" stop-color="#f1f1f1"/><stop offset="1" stop-color="#f9f9f9"/></linearGradient></defs>
<path d="M217.3 282.6L205.4 212.9L325.5 164.5L327.2 222.9z" fill="url(#wl)" stroke="none" stroke-width="0.8" />
<path d="M327.2 222.9L325.5 164.5L460.5 201.3L452.1 267.1z" fill="#ffffff" stroke="none" stroke-width="0.8" />
<path d="M217.3 282.6L217.7 285.3L357.3 357.9L451.8 269.6L452.1 267.1L357.4 354.9z" fill="#e4e4e4" stroke="none" stroke-width="0.8" />
<path d="M217.3 282.6L357.4 354.9L452.1 267.1L327.2 222.9z" fill="url(#fl)" stroke="none" stroke-width="0.8" />
<path d="M247.1 298.0L354.8 232.6" stroke="#dadada" stroke-width="0.7"/>
<path d="M249.9 264.9L386.4 328.0" stroke="#dadada" stroke-width="0.7"/>
<path d="M280.1 315.0L384.6 243.2" stroke="#dadada" stroke-width="0.7"/>
<path d="M278.6 249.3L411.4 304.9" stroke="#dadada" stroke-width="0.7"/>
<path d="M316.6 333.9L417.0 254.6" stroke="#dadada" stroke-width="0.7"/>
<path d="M304.2 235.3L433.1 284.7" stroke="#dadada" stroke-width="0.7"/>
<path d="M213.5 260.7L326.7 204.3" stroke="#d6d6d6" stroke-width="0.7"/>
<path d="M326.7 204.3L454.8 246.3" stroke="#d4d4d4" stroke-width="0.7"/>
<path d="M209.6 237.5L326.1 184.8" stroke="#d6d6d6" stroke-width="0.7"/>
<path d="M326.1 184.8L457.5 224.4" stroke="#d4d4d4" stroke-width="0.7"/>
<path d="M249.9 264.9L241.5 198.4" stroke="#d6d6d6" stroke-width="0.7"/>
<path d="M354.8 232.6L355.1 172.6" stroke="#d4d4d4" stroke-width="0.7"/>
<path d="M278.6 249.3L273.0 185.7" stroke="#d6d6d6" stroke-width="0.7"/>
<path d="M384.6 243.2L387.2 181.3" stroke="#d4d4d4" stroke-width="0.7"/>
<path d="M304.2 235.3L300.8 174.5" stroke="#d6d6d6" stroke-width="0.7"/>
<path d="M417.0 254.6L422.2 190.9" stroke="#d4d4d4" stroke-width="0.7"/>
<path d="M205.4 212.9L325.5 164.5" stroke="#cfcfcf" stroke-width="0.8"/>
<path d="M325.5 164.5L460.5 201.3" stroke="#cfcfcf" stroke-width="0.8"/>
<path d="M460.5 201.3L452.1 267.1" stroke="#cfcfcf" stroke-width="0.8"/>
<path d="M325.5 164.5L327.2 222.9" stroke="#cfcfcf" stroke-width="0.8"/>
<path d="M217.3 282.6L205.4 212.9" stroke="#555" stroke-width="0.9"/>
<path d="M217.7 285.3L357.3 357.9" stroke="#6a6a6a" stroke-width="0.8"/>
<path d="M357.3 357.9L451.8 269.6" stroke="#6a6a6a" stroke-width="0.8"/>
<g font-family="Liberation Sans" font-size="7" fill="#333"><text x="200.0" y="218.4" text-anchor="end">4</text><text x="201.0" y="241.4" text-anchor="end">2</text><text x="203.0" y="264.4" text-anchor="end">0</text><text x="202.0" y="285.8" text-anchor="end">-2</text><text x="214.3" y="293.1" text-anchor="middle">-4</text><text x="242.0" y="309.0" text-anchor="middle">-2</text><text x="273.8" y="325.7" text-anchor="middle">0</text><text x="308.7" y="344.7" text-anchor="middle">2</text><text x="346.8" y="366.2" text-anchor="middle">4</text><text x="371.3" y="357.7" text-anchor="middle">-4</text><text x="397.5" y="331.5" text-anchor="middle">-2</text><text x="421.0" y="309.5" text-anchor="middle">0</text><text x="441.0" y="290.5" text-anchor="middle">2</text><text x="458.7" y="273.0" text-anchor="middle">4</text></g>
</svg>
<svg style="left:0;top:0" width="1200" height="630" viewBox="0 0 1200 630"><defs><linearGradient id="sh0" x1="0" y1="0" x2="1" y2="0.3"><stop offset="0" stop-color="#fff" stop-opacity="0.22"/><stop offset="0.5" stop-color="#fff" stop-opacity="0"/><stop offset="1" stop-color="#000" stop-opacity="0.12"/></linearGradient><linearGradient id="sh1" x1="0" y1="0" x2="1" y2="0"><stop offset="0" stop-color="#fff" stop-opacity="0.05"/><stop offset="0.45" stop-color="#000" stop-opacity="0"/><stop offset="1" stop-color="#000" stop-opacity="0.28"/></linearGradient><linearGradient id="sh2" x1="0" y1="1" x2="1" y2="0"><stop offset="0" stop-color="#fff" stop-opacity="0.15"/><stop offset="1" stop-color="#000" stop-opacity="0.05"/></linearGradient>
<clipPath id="pc0"><path d="M331.0 179.8C333.2 182.1 340.3 189.4 344.5 193.8C348.7 198.2 351.4 202.0 356.4 206.5C361.4 211.0 371.6 218.4 374.7 220.8C374.4 222.1 374.4 225.8 373.0 228.7C371.6 231.6 369.8 234.1 366.0 238.0C362.2 241.9 355.0 247.7 350.0 252.0C345.0 256.3 338.2 261.8 335.8 263.7C333.2 261.4 324.8 254.5 320.0 250.0C315.2 245.5 310.6 241.0 307.2 236.7C303.8 232.4 301.9 227.3 299.3 224.0C296.7 220.7 292.6 218.0 291.3 216.8C292.9 215.6 297.7 212.2 300.9 209.7C304.1 207.2 306.7 204.3 310.4 201.7C314.1 199.0 319.6 197.5 323.0 193.8C326.4 190.2 329.7 182.1 331.0 179.8z"/></clipPath>
<clipPath id="pc1"><path d="M231.4 224.3C233.2 223.9 238.4 222.8 242.1 222.1C245.8 221.4 249.3 220.7 253.6 220.0C257.9 219.3 264.8 218.3 267.9 217.9C271.0 217.5 271.3 217.7 272.0 217.6C273.2 218.1 277.1 219.0 279.3 220.7C281.5 222.4 283.1 225.0 285.0 227.9C286.9 230.8 288.3 234.6 290.7 237.9C293.1 241.2 296.0 244.8 299.3 247.9C302.6 251.0 307.4 253.3 310.7 256.4C314.0 259.5 317.9 264.7 319.3 266.4C317.9 267.6 315.2 271.5 310.7 273.6C306.2 275.8 297.1 278.2 292.1 279.3C287.1 280.4 282.6 279.9 280.7 280.0C279.3 278.9 275.7 276.6 272.1 273.6C268.5 270.6 263.3 266.2 259.3 262.1C255.3 258.1 251.2 254.1 247.9 249.3C244.6 244.6 242.1 237.8 239.3 233.6C236.6 229.4 232.7 225.9 231.4 224.3z"/></clipPath>
<clipPath id="pc2"><path d="M358.0 261.0C359.3 259.1 363.2 251.8 366.0 249.5C368.8 247.2 372.2 248.2 375.0 246.9C377.8 245.6 380.3 244.1 382.6 241.8C384.9 239.5 387.6 235.8 389.0 233.0C390.4 230.2 390.5 227.1 390.9 225.3C391.3 223.5 391.4 222.6 391.5 222.1C392.8 221.3 396.1 218.5 399.1 217.1C402.1 215.7 405.1 213.9 409.3 213.9C413.5 213.9 419.4 215.9 424.5 217.1C429.6 218.3 437.2 220.3 439.8 220.9C439.9 222.7 440.3 229.9 440.4 231.7C439.9 232.5 440.5 233.5 437.2 236.7C433.9 239.9 425.8 246.9 420.7 250.7C415.6 254.5 410.1 256.6 406.7 259.6C403.3 262.6 402.5 266.9 400.4 268.5C398.3 270.1 395.1 269.0 394.0 269.1C393.3 268.6 392.7 267.3 390.0 266.0C387.3 264.7 383.0 262.2 378.0 261.5C373.0 260.8 363.3 261.6 360.0 261.5C356.7 261.4 358.3 261.1 358.0 261.0z"/></clipPath>
<clipPath id="pc3"><path d="M300.0 282.0C301.7 281.0 305.8 277.5 310.0 276.0C314.2 274.5 320.8 274.0 325.0 273.0C329.2 272.0 332.0 271.7 335.0 270.0C338.0 268.3 340.5 264.4 343.0 263.0C345.5 261.6 347.2 261.6 350.0 261.5C352.8 261.4 357.0 261.6 360.0 262.5C363.0 263.4 365.2 265.4 368.0 267.0C370.8 268.6 374.0 270.7 377.0 272.0C380.0 273.3 384.2 274.2 386.0 275.0C387.8 275.8 387.2 276.2 387.5 276.5C386.2 277.1 381.8 278.6 380.0 280.0C378.2 281.4 380.3 283.5 377.0 285.0C373.7 286.5 365.2 288.2 360.0 289.0C354.8 289.8 349.8 290.3 346.0 290.0C342.2 289.7 340.0 288.7 337.0 287.0C334.0 285.3 330.8 281.7 328.0 280.0C325.2 278.3 323.0 277.0 320.0 277.0C317.0 277.0 313.3 279.2 310.0 280.0C306.7 280.8 301.7 281.7 300.0 282.0z"/></clipPath>
</defs>
<g clip-path="url(#pc0)">
<path d="M331.0 179.8C333.2 182.1 340.3 189.4 344.5 193.8C348.7 198.2 351.4 202.0 356.4 206.5C361.4 211.0 371.6 218.4 374.7 220.8C374.4 222.1 374.4 225.8 373.0 228.7C371.6 231.6 369.8 234.1 366.0 238.0C362.2 241.9 355.0 247.7 350.0 252.0C345.0 256.3 338.2 261.8 335.8 263.7C333.2 261.4 324.8 254.5 320.0 250.0C315.2 245.5 310.6 241.0 307.2 236.7C303.8 232.4 301.9 227.3 299.3 224.0C296.7 220.7 292.6 218.0 291.3 216.8C292.9 215.6 297.7 212.2 300.9 209.7C304.1 207.2 306.7 204.3 310.4 201.7C314.1 199.0 319.6 197.5 323.0 193.8C326.4 190.2 329.7 182.1 331.0 179.8z" fill="#e3202a"/>
<path d="M280.0 257.8C287.9 257.8 317.4 257.8 327.6 257.8C337.8 257.8 333.9 257.8 341.0 257.8C348.1 257.8 365.2 257.8 370.0 257.8L380.0 150.0L280.0 150.0z" fill="#f7ec1c"/>
<path d="M280.0 249.5C286.7 249.4 307.0 249.4 320.0 249.2C333.0 249.0 349.3 248.5 358.0 248.3C366.7 248.1 369.7 248.1 372.0 248.0L380.0 150.0L280.0 150.0z" fill="#f7ec1c"/>
<path d="M288.0 238.0C291.2 237.9 301.9 237.0 307.2 237.5C312.5 238.0 313.1 240.2 320.0 241.0C326.9 241.8 341.2 243.0 348.5 242.6C355.8 242.2 358.6 240.1 363.8 238.8C369.1 237.5 377.3 235.6 380.0 235.0L380.0 150.0L280.0 150.0z" fill="#c8e6b8"/>
<path d="M286.0 220.0C287.7 220.4 290.3 220.7 296.0 222.4C301.7 224.1 311.9 228.1 320.0 230.0C328.1 231.9 336.6 234.3 344.8 234.0C353.1 233.7 363.6 230.1 369.5 228.3C375.4 226.5 378.2 223.9 380.0 223.0L380.0 150.0L280.0 150.0z" fill="#52b848"/>
<path d="M283.0 214.0C284.4 214.3 285.1 214.9 291.3 216.0C297.5 217.1 310.8 219.0 320.0 220.7C329.2 222.4 337.9 226.4 346.6 226.0C355.3 225.6 366.5 220.0 372.4 218.0C378.3 216.0 380.4 214.7 382.0 214.0L380.0 150.0L280.0 150.0z" fill="#78aae0"/>
<path d="M286.0 211.0C288.1 210.8 292.8 210.4 298.5 209.7C304.2 209.0 312.9 206.9 320.0 207.0C327.1 207.1 333.9 210.8 341.0 210.5C348.1 210.2 356.3 206.9 362.8 205.5C369.3 204.1 377.1 202.6 380.0 202.0L380.0 150.0L280.0 150.0z" fill="#7066bb"/>
<path d="M300.0 194.0C303.9 194.0 316.2 194.0 323.5 194.0C330.8 194.0 336.2 194.0 344.0 194.0C351.8 194.0 365.7 194.0 370.0 194.0L380.0 150.0L280.0 150.0z" fill="#74208c"/>
<path d="M280.0 257.8C287.9 257.8 317.4 257.8 327.6 257.8C337.8 257.8 333.9 257.8 341.0 257.8C348.1 257.8 365.2 257.8 370.0 257.8" fill="none" stroke="#2a2a2a" stroke-width="0.7" stroke-opacity="0.8"/>
<path d="M280.0 249.5C286.7 249.4 307.0 249.4 320.0 249.2C333.0 249.0 349.3 248.5 358.0 248.3C366.7 248.1 369.7 248.1 372.0 248.0" fill="none" stroke="#2a2a2a" stroke-width="0.7" stroke-opacity="0.8"/>
<path d="M288.0 238.0C291.2 237.9 301.9 237.0 307.2 237.5C312.5 238.0 313.1 240.2 320.0 241.0C326.9 241.8 341.2 243.0 348.5 242.6C355.8 242.2 358.6 240.1 363.8 238.8C369.1 237.5 377.3 235.6 380.0 235.0" fill="none" stroke="#2a2a2a" stroke-width="0.7" stroke-opacity="0.8"/>
<path d="M286.0 220.0C287.7 220.4 290.3 220.7 296.0 222.4C301.7 224.1 311.9 228.1 320.0 230.0C328.1 231.9 336.6 234.3 344.8 234.0C353.1 233.7 363.6 230.1 369.5 228.3C375.4 226.5 378.2 223.9 380.0 223.0" fill="none" stroke="#2a2a2a" stroke-width="0.7" stroke-opacity="0.8"/>
<path d="M283.0 214.0C284.4 214.3 285.1 214.9 291.3 216.0C297.5 217.1 310.8 219.0 320.0 220.7C329.2 222.4 337.9 226.4 346.6 226.0C355.3 225.6 366.5 220.0 372.4 218.0C378.3 216.0 380.4 214.7 382.0 214.0" fill="none" stroke="#2a2a2a" stroke-width="0.7" stroke-opacity="0.8"/>
<path d="M286.0 211.0C288.1 210.8 292.8 210.4 298.5 209.7C304.2 209.0 312.9 206.9 320.0 207.0C327.1 207.1 333.9 210.8 341.0 210.5C348.1 210.2 356.3 206.9 362.8 205.5C369.3 204.1 377.1 202.6 380.0 202.0" fill="none" stroke="#2a2a2a" stroke-width="0.7" stroke-opacity="0.8"/>
<path d="M300.0 194.0C303.9 194.0 316.2 194.0 323.5 194.0C330.8 194.0 336.2 194.0 344.0 194.0C351.8 194.0 365.7 194.0 370.0 194.0" fill="none" stroke="#2a2a2a" stroke-width="0.7" stroke-opacity="0.8"/>
<rect x="280" y="170" width="100" height="100" fill="url(#sh0)"/>
</g>
<path d="M331.0 179.8C333.2 182.1 340.3 189.4 344.5 193.8C348.7 198.2 351.4 202.0 356.4 206.5C361.4 211.0 371.6 218.4 374.7 220.8C374.4 222.1 374.4 225.8 373.0 228.7C371.6 231.6 369.8 234.1 366.0 238.0C362.2 241.9 355.0 247.7 350.0 252.0C345.0 256.3 338.2 261.8 335.8 263.7C333.2 261.4 324.8 254.5 320.0 250.0C315.2 245.5 310.6 241.0 307.2 236.7C303.8 232.4 301.9 227.3 299.3 224.0C296.7 220.7 292.6 218.0 291.3 216.8C292.9 215.6 297.7 212.2 300.9 209.7C304.1 207.2 306.7 204.3 310.4 201.7C314.1 199.0 319.6 197.5 323.0 193.8C326.4 190.2 329.7 182.1 331.0 179.8z" fill="none" stroke="#2a2a2a" stroke-width="0.8" stroke-opacity="0.85"/>
<g clip-path="url(#pc1)">
<path d="M231.4 224.3C233.2 223.9 238.4 222.8 242.1 222.1C245.8 221.4 249.3 220.7 253.6 220.0C257.9 219.3 264.8 218.3 267.9 217.9C271.0 217.5 271.3 217.7 272.0 217.6C273.2 218.1 277.1 219.0 279.3 220.7C281.5 222.4 283.1 225.0 285.0 227.9C286.9 230.8 288.3 234.6 290.7 237.9C293.1 241.2 296.0 244.8 299.3 247.9C302.6 251.0 307.4 253.3 310.7 256.4C314.0 259.5 317.9 264.7 319.3 266.4C317.9 267.6 315.2 271.5 310.7 273.6C306.2 275.8 297.1 278.2 292.1 279.3C287.1 280.4 282.6 279.9 280.7 280.0C279.3 278.9 275.7 276.6 272.1 273.6C268.5 270.6 263.3 266.2 259.3 262.1C255.3 258.1 251.2 254.1 247.9 249.3C244.6 244.6 242.1 237.8 239.3 233.6C236.6 229.4 232.7 225.9 231.4 224.3z" fill="#f7ec1c"/>
<path d="M310.7 280.0C310.7 278.9 310.5 276.6 310.7 273.6C310.9 270.6 312.4 265.4 312.0 262.0C311.6 258.6 310.0 256.7 308.0 253.0C306.0 249.3 301.3 242.2 300.0 240.0L200.0 200.0L200.0 290.0z" fill="#c8e6b8"/>
<path d="M292.0 285.0C292.0 284.0 290.3 281.8 292.0 279.0C293.7 276.2 300.8 272.5 302.0 268.0C303.2 263.5 300.7 257.0 299.0 252.0C297.3 247.0 294.3 242.5 292.0 238.0C289.7 233.5 286.2 227.2 285.0 225.0L200.0 200.0L200.0 290.0z" fill="#52b848"/>
<path d="M270.0 280.0C270.4 278.9 269.6 275.4 272.1 273.6C274.6 271.8 281.9 271.7 285.0 269.3C288.1 266.9 290.2 263.8 290.7 259.3C291.2 254.8 289.3 248.1 287.9 242.1C286.4 236.1 283.5 228.6 282.0 223.6C280.5 218.6 279.5 213.9 279.0 212.0L200.0 200.0L200.0 290.0z" fill="#78aae0"/>
<path d="M255.0 268.0C255.6 267.1 255.8 264.3 258.6 262.9C261.5 261.4 268.9 261.8 272.1 259.3C275.3 256.8 276.8 252.2 277.9 247.9C279.0 243.6 279.3 238.5 278.6 233.6C277.9 228.7 274.7 222.5 273.6 218.6C272.5 214.7 272.3 211.4 272.0 210.0L200.0 200.0L200.0 290.0z" fill="#7066bb"/>
<path d="M240.0 256.0C241.1 254.7 243.4 249.9 246.4 247.9C249.4 245.9 255.1 246.0 258.0 244.0C260.9 242.0 262.7 238.7 264.0 236.0C265.3 233.3 265.7 230.5 266.0 228.0C266.3 225.5 266.0 224.0 266.0 221.0C266.0 218.0 266.0 211.8 266.0 210.0L200.0 200.0L200.0 290.0z" fill="#74208c"/>
<path d="M310.7 280.0C310.7 278.9 310.5 276.6 310.7 273.6C310.9 270.6 312.4 265.4 312.0 262.0C311.6 258.6 310.0 256.7 308.0 253.0C306.0 249.3 301.3 242.2 300.0 240.0" fill="none" stroke="#2a2a2a" stroke-width="0.7" stroke-opacity="0.8"/>
<path d="M292.0 285.0C292.0 284.0 290.3 281.8 292.0 279.0C293.7 276.2 300.8 272.5 302.0 268.0C303.2 263.5 300.7 257.0 299.0 252.0C297.3 247.0 294.3 242.5 292.0 238.0C289.7 233.5 286.2 227.2 285.0 225.0" fill="none" stroke="#2a2a2a" stroke-width="0.7" stroke-opacity="0.8"/>
<path d="M270.0 280.0C270.4 278.9 269.6 275.4 272.1 273.6C274.6 271.8 281.9 271.7 285.0 269.3C288.1 266.9 290.2 263.8 290.7 259.3C291.2 254.8 289.3 248.1 287.9 242.1C286.4 236.1 283.5 228.6 282.0 223.6C280.5 218.6 279.5 213.9 279.0 212.0" fill="none" stroke="#2a2a2a" stroke-width="0.7" stroke-opacity="0.8"/>
<path d="M255.0 268.0C255.6 267.1 255.8 264.3 258.6 262.9C261.5 261.4 268.9 261.8 272.1 259.3C275.3 256.8 276.8 252.2 277.9 247.9C279.0 243.6 279.3 238.5 278.6 233.6C277.9 228.7 274.7 222.5 273.6 218.6C272.5 214.7 272.3 211.4 272.0 210.0" fill="none" stroke="#2a2a2a" stroke-width="0.7" stroke-opacity="0.8"/>
<path d="M240.0 256.0C241.1 254.7 243.4 249.9 246.4 247.9C249.4 245.9 255.1 246.0 258.0 244.0C260.9 242.0 262.7 238.7 264.0 236.0C265.3 233.3 265.7 230.5 266.0 228.0C266.3 225.5 266.0 224.0 266.0 221.0C266.0 218.0 266.0 211.8 266.0 210.0" fill="none" stroke="#2a2a2a" stroke-width="0.7" stroke-opacity="0.8"/>
<rect x="225" y="210" width="100" height="80" fill="url(#sh1)"/>
</g>
<path d="M231.4 224.3C233.2 223.9 238.4 222.8 242.1 222.1C245.8 221.4 249.3 220.7 253.6 220.0C257.9 219.3 264.8 218.3 267.9 217.9C271.0 217.5 271.3 217.7 272.0 217.6C273.2 218.1 277.1 219.0 279.3 220.7C281.5 222.4 283.1 225.0 285.0 227.9C286.9 230.8 288.3 234.6 290.7 237.9C293.1 241.2 296.0 244.8 299.3 247.9C302.6 251.0 307.4 253.3 310.7 256.4C314.0 259.5 317.9 264.7 319.3 266.4C317.9 267.6 315.2 271.5 310.7 273.6C306.2 275.8 297.1 278.2 292.1 279.3C287.1 280.4 282.6 279.9 280.7 280.0C279.3 278.9 275.7 276.6 272.1 273.6C268.5 270.6 263.3 266.2 259.3 262.1C255.3 258.1 251.2 254.1 247.9 249.3C244.6 244.6 242.1 237.8 239.3 233.6C236.6 229.4 232.7 225.9 231.4 224.3z" fill="none" stroke="#2a2a2a" stroke-width="0.8" stroke-opacity="0.85"/>
<g clip-path="url(#pc2)">
<path d="M358.0 261.0C359.3 259.1 363.2 251.8 366.0 249.5C368.8 247.2 372.2 248.2 375.0 246.9C377.8 245.6 380.3 244.1 382.6 241.8C384.9 239.5 387.6 235.8 389.0 233.0C390.4 230.2 390.5 227.1 390.9 225.3C391.3 223.5 391.4 222.6 391.5 222.1C392.8 221.3 396.1 218.5 399.1 217.1C402.1 215.7 405.1 213.9 409.3 213.9C413.5 213.9 419.4 215.9 424.5 217.1C429.6 218.3 437.2 220.3 439.8 220.9C439.9 222.7 440.3 229.9 440.4 231.7C439.9 232.5 440.5 233.5 437.2 236.7C433.9 239.9 425.8 246.9 420.7 250.7C415.6 254.5 410.1 256.6 406.7 259.6C403.3 262.6 402.5 266.9 400.4 268.5C398.3 270.1 395.1 269.0 394.0 269.1C393.3 268.6 392.7 267.3 390.0 266.0C387.3 264.7 383.0 262.2 378.0 261.5C373.0 260.8 363.3 261.6 360.0 261.5C356.7 261.4 358.3 261.1 358.0 261.0z" fill="#f5a01e"/>
<path d="M362.0 244.0C362.7 245.7 365.2 251.3 366.0 254.0C366.8 256.7 366.7 257.3 367.0 260.0C367.3 262.7 367.8 268.3 368.0 270.0L480.0 280.0L480.0 190.0z" fill="#f7ec1c"/>
<path d="M372.0 240.0C372.5 241.3 373.8 244.5 375.0 248.0C376.2 251.5 378.0 257.3 379.0 261.0C380.0 264.7 380.7 268.5 381.0 270.0L480.0 280.0L480.0 190.0z" fill="#c8e6b8"/>
<path d="M392.0 215.0C391.8 216.7 391.7 221.9 390.9 225.3C390.1 228.7 387.9 232.1 387.0 235.5C386.1 238.9 385.3 241.6 385.8 245.6C386.3 249.6 387.8 255.8 390.2 259.6C392.6 263.4 398.1 265.9 400.4 268.5C402.7 271.1 403.4 273.9 404.0 275.0L480.0 280.0L480.0 190.0z" fill="#52b848"/>
<path d="M398.0 208.0C398.2 209.5 398.5 214.2 399.1 217.1C399.7 220.0 401.7 221.0 401.7 225.3C401.7 229.6 398.3 237.4 399.1 243.1C399.9 248.8 404.9 255.8 406.7 259.6C408.5 263.4 409.4 264.9 410.0 266.0L480.0 280.0L480.0 190.0z" fill="#78aae0"/>
<path d="M408.0 206.0C408.2 207.3 408.4 210.7 409.3 213.9C410.2 217.1 412.1 220.9 413.1 225.3C414.2 229.8 414.3 236.4 415.6 240.6C416.9 244.8 419.3 248.1 420.7 250.7C422.1 253.3 423.4 255.1 424.0 256.0L480.0 280.0L480.0 190.0z" fill="#7066bb"/>
<path d="M423.0 210.0C423.2 211.2 423.6 214.3 424.5 217.1C425.4 219.9 426.2 223.3 428.3 226.6C430.4 229.9 434.9 234.1 437.2 236.7C439.5 239.3 441.2 241.1 442.0 242.0L480.0 280.0L480.0 190.0z" fill="#74208c"/>
<path d="M362.0 244.0C362.7 245.7 365.2 251.3 366.0 254.0C366.8 256.7 366.7 257.3 367.0 260.0C367.3 262.7 367.8 268.3 368.0 270.0" fill="none" stroke="#2a2a2a" stroke-width="0.7" stroke-opacity="0.8"/>
<path d="M372.0 240.0C372.5 241.3 373.8 244.5 375.0 248.0C376.2 251.5 378.0 257.3 379.0 261.0C380.0 264.7 380.7 268.5 381.0 270.0" fill="none" stroke="#2a2a2a" stroke-width="0.7" stroke-opacity="0.8"/>
<path d="M392.0 215.0C391.8 216.7 391.7 221.9 390.9 225.3C390.1 228.7 387.9 232.1 387.0 235.5C386.1 238.9 385.3 241.6 385.8 245.6C386.3 249.6 387.8 255.8 390.2 259.6C392.6 263.4 398.1 265.9 400.4 268.5C402.7 271.1 403.4 273.9 404.0 275.0" fill="none" stroke="#2a2a2a" stroke-width="0.7" stroke-opacity="0.8"/>
<path d="M398.0 208.0C398.2 209.5 398.5 214.2 399.1 217.1C399.7 220.0 401.7 221.0 401.7 225.3C401.7 229.6 398.3 237.4 399.1 243.1C399.9 248.8 404.9 255.8 406.7 259.6C408.5 263.4 409.4 264.9 410.0 266.0" fill="none" stroke="#2a2a2a" stroke-width="0.7" stroke-opacity="0.8"/>
<path d="M408.0 206.0C408.2 207.3 408.4 210.7 409.3 213.9C410.2 217.1 412.1 220.9 413.1 225.3C414.2 229.8 414.3 236.4 415.6 240.6C416.9 244.8 419.3 248.1 420.7 250.7C422.1 253.3 423.4 255.1 424.0 256.0" fill="none" stroke="#2a2a2a" stroke-width="0.7" stroke-opacity="0.8"/>
<path d="M423.0 210.0C423.2 211.2 423.6 214.3 424.5 217.1C425.4 219.9 426.2 223.3 428.3 226.6C430.4 229.9 434.9 234.1 437.2 236.7C439.5 239.3 441.2 241.1 442.0 242.0" fill="none" stroke="#2a2a2a" stroke-width="0.7" stroke-opacity="0.8"/>
<rect x="350" y="205" width="95" height="70" fill="url(#sh2)"/>
</g>
<path d="M358.0 261.0C359.3 259.1 363.2 251.8 366.0 249.5C368.8 247.2 372.2 248.2 375.0 246.9C377.8 245.6 380.3 244.1 382.6 241.8C384.9 239.5 387.6 235.8 389.0 233.0C390.4 230.2 390.5 227.1 390.9 225.3C391.3 223.5 391.4 222.6 391.5 222.1C392.8 221.3 396.1 218.5 399.1 217.1C402.1 215.7 405.1 213.9 409.3 213.9C413.5 213.9 419.4 215.9 424.5 217.1C429.6 218.3 437.2 220.3 439.8 220.9C439.9 222.7 440.3 229.9 440.4 231.7C439.9 232.5 440.5 233.5 437.2 236.7C433.9 239.9 425.8 246.9 420.7 250.7C415.6 254.5 410.1 256.6 406.7 259.6C403.3 262.6 402.5 266.9 400.4 268.5C398.3 270.1 395.1 269.0 394.0 269.1C393.3 268.6 392.7 267.3 390.0 266.0C387.3 264.7 383.0 262.2 378.0 261.5C373.0 260.8 363.3 261.6 360.0 261.5C356.7 261.4 358.3 261.1 358.0 261.0z" fill="none" stroke="#2a2a2a" stroke-width="0.8" stroke-opacity="0.85"/>
<g clip-path="url(#pc3)">
<path d="M300.0 282.0C301.7 281.0 305.8 277.5 310.0 276.0C314.2 274.5 320.8 274.0 325.0 273.0C329.2 272.0 332.0 271.7 335.0 270.0C338.0 268.3 340.5 264.4 343.0 263.0C345.5 261.6 347.2 261.6 350.0 261.5C352.8 261.4 357.0 261.6 360.0 262.5C363.0 263.4 365.2 265.4 368.0 267.0C370.8 268.6 374.0 270.7 377.0 272.0C380.0 273.3 384.2 274.2 386.0 275.0C387.8 275.8 387.2 276.2 387.5 276.5C386.2 277.1 381.8 278.6 380.0 280.0C378.2 281.4 380.3 283.5 377.0 285.0C373.7 286.5 365.2 288.2 360.0 289.0C354.8 289.8 349.8 290.3 346.0 290.0C342.2 289.7 340.0 288.7 337.0 287.0C334.0 285.3 330.8 281.7 328.0 280.0C325.2 278.3 323.0 277.0 320.0 277.0C317.0 277.0 313.3 279.2 310.0 280.0C306.7 280.8 301.7 281.7 300.0 282.0z" fill="#52b848"/>
<path d="M330.0 262.0C330.8 263.3 332.7 269.5 335.0 270.0C337.3 270.5 338.2 265.3 344.0 265.0C349.8 264.7 363.3 266.7 370.0 268.0C376.7 269.3 380.3 271.7 384.0 273.0C387.7 274.3 390.7 275.5 392.0 276.0L400.0 300.0L300.0 300.0z" fill="#78aae0"/>
<path d="M315.0 276.0C316.2 275.5 317.8 273.8 322.0 273.0C326.2 272.2 333.7 271.5 340.0 271.0C346.3 270.5 353.7 270.0 360.0 270.0C366.3 270.0 373.7 270.2 378.0 271.0C382.3 271.8 383.7 273.8 386.0 275.0C388.3 276.2 391.0 277.5 392.0 278.0L400.0 300.0L300.0 300.0z" fill="#7066bb"/>
<path d="M320.0 280.0C321.3 280.0 323.0 280.0 328.0 280.0C333.0 280.0 341.3 279.7 350.0 280.0C358.7 280.3 373.0 281.7 380.0 282.0C387.0 282.3 390.0 282.0 392.0 282.0L400.0 300.0L300.0 300.0z" fill="#74208c"/>
<path d="M330.0 262.0C330.8 263.3 332.7 269.5 335.0 270.0C337.3 270.5 338.2 265.3 344.0 265.0C349.8 264.7 363.3 266.7 370.0 268.0C376.7 269.3 380.3 271.7 384.0 273.0C387.7 274.3 390.7 275.5 392.0 276.0" fill="none" stroke="#2a2a2a" stroke-width="0.7" stroke-opacity="0.8"/>
<path d="M315.0 276.0C316.2 275.5 317.8 273.8 322.0 273.0C326.2 272.2 333.7 271.5 340.0 271.0C346.3 270.5 353.7 270.0 360.0 270.0C366.3 270.0 373.7 270.2 378.0 271.0C382.3 271.8 383.7 273.8 386.0 275.0C388.3 276.2 391.0 277.5 392.0 278.0" fill="none" stroke="#2a2a2a" stroke-width="0.7" stroke-opacity="0.8"/>
<path d="M320.0 280.0C321.3 280.0 323.0 280.0 328.0 280.0C333.0 280.0 341.3 279.7 350.0 280.0C358.7 280.3 373.0 281.7 380.0 282.0C387.0 282.3 390.0 282.0 392.0 282.0" fill="none" stroke="#2a2a2a" stroke-width="0.7" stroke-opacity="0.8"/>
<rect x="295" y="255" width="100" height="40" fill="#000" fill-opacity="0.17"/>
</g>
<path d="M300.0 282.0C301.7 281.0 305.8 277.5 310.0 276.0C314.2 274.5 320.8 274.0 325.0 273.0C329.2 272.0 332.0 271.7 335.0 270.0C338.0 268.3 340.5 264.4 343.0 263.0C345.5 261.6 347.2 261.6 350.0 261.5C352.8 261.4 357.0 261.6 360.0 262.5C363.0 263.4 365.2 265.4 368.0 267.0C370.8 268.6 374.0 270.7 377.0 272.0C380.0 273.3 384.2 274.2 386.0 275.0C387.8 275.8 387.2 276.2 387.5 276.5C386.2 277.1 381.8 278.6 380.0 280.0C378.2 281.4 380.3 283.5 377.0 285.0C373.7 286.5 365.2 288.2 360.0 289.0C354.8 289.8 349.8 290.3 346.0 290.0C342.2 289.7 340.0 288.7 337.0 287.0C334.0 285.3 330.8 281.7 328.0 280.0C325.2 278.3 323.0 277.0 320.0 277.0C317.0 277.0 313.3 279.2 310.0 280.0C306.7 280.8 301.7 281.7 300.0 282.0z" fill="none" stroke="#2a2a2a" stroke-width="0.8" stroke-opacity="0.85"/>
</svg>
<div style="left:478.5px;top:212.5px;width:54px;height:103px;background:#fff;border:1px solid #8a8a8a;box-sizing:border-box"></div>
<div style="left:480.5px;top:216.0px;width:9px;height:9px;background:#e8202a;border:1px solid #444;box-sizing:border-box"></div>
<span style="left:490.5px;top:220.5px;font-size:7.3px;color:#222;letter-spacing:-0.05px">-1.83 - -1.26</span>
<div style="left:479.5px;top:226.3px;width:52px;height:1px;background:#d0d0d0"></div>
<div style="left:480.5px;top:228.8px;width:9px;height:9px;background:#f7a51e;border:1px solid #444;box-sizing:border-box"></div>
<span style="left:490.5px;top:233.3px;font-size:7.3px;color:#222;letter-spacing:-0.05px">-1.26 - -0.68</span>
<div style="left:479.5px;top:239.2px;width:52px;height:1px;background:#d0d0d0"></div>
<div style="left:480.5px;top:241.7px;width:9px;height:9px;background:#f7ee1a;border:1px solid #444;box-sizing:border-box"></div>
<span style="left:490.5px;top:246.2px;font-size:7.3px;color:#222;letter-spacing:-0.05px">-0.68 - -0.11</span>
<div style="left:479.5px;top:252.1px;width:52px;height:1px;background:#d0d0d0"></div>
<div style="left:480.5px;top:254.6px;width:9px;height:9px;background:#a3d98f;border:1px solid #444;box-sizing:border-box"></div>
<span style="left:490.5px;top:259.1px;font-size:7.3px;color:#222;letter-spacing:-0.05px">-0.11 - 0.47</span>
<div style="left:479.5px;top:264.9px;width:52px;height:1px;background:#d0d0d0"></div>
<div style="left:480.5px;top:267.4px;width:9px;height:9px;background:#3cb94a;border:1px solid #444;box-sizing:border-box"></div>
<span style="left:490.5px;top:271.9px;font-size:7.3px;color:#222;letter-spacing:-0.05px">0.47 - 1.05</span>
<div style="left:479.5px;top:277.8px;width:52px;height:1px;background:#d0d0d0"></div>
<div style="left:480.5px;top:280.2px;width:9px;height:9px;background:#6a9be0;border:1px solid #444;box-sizing:border-box"></div>
<span style="left:490.5px;top:284.8px;font-size:7.3px;color:#222;letter-spacing:-0.05px">1.05 - 1.62</span>
<div style="left:479.5px;top:290.6px;width:52px;height:1px;background:#d0d0d0"></div>
<div style="left:480.5px;top:293.1px;width:9px;height:9px;background:#6a5fc0;border:1px solid #444;box-sizing:border-box"></div>
<span style="left:490.5px;top:297.6px;font-size:7.3px;color:#222;letter-spacing:-0.05px">1.62 - 2.20</span>
<div style="left:479.5px;top:303.4px;width:52px;height:1px;background:#d0d0d0"></div>
<div style="left:480.5px;top:305.9px;width:9px;height:9px;background:#6e1a8a;border:1px solid #444;box-sizing:border-box"></div>
<span style="left:490.5px;top:310.4px;font-size:7.3px;color:#222;letter-spacing:-0.05px">2.20 - 2.77</span>
<span style="left:234px;top:91px;font-family:'Liberation Serif',serif;font-style:italic;font-size:14.4px;color:#4d5c78">Mesh Surface With Empty Data Points</span>
<div style="left:545px;top:35px;width:3px;height:403px;background:#e8e8e8"></div>
<div style="left:548px;top:35px;width:106px;height:402px;background:#e9e9e9;border-left:1px solid #8f8f8f;box-sizing:border-box"></div>
<div style="left:548px;top:35px;width:106px;height:15px;background:#d8d8d8;border:1px solid #a3a3a3;box-sizing:border-box"></div>
<svg style="left:550px;top:38px" width="2" height="10"><path d="M1 0v10" stroke="#777" stroke-dasharray="1 1.5"/></svg>
<span style="left:554px;top:42.5px;font-size:7px;color:#151515;letter-spacing:-0.3px">Example - Empty Da...</span>
<svg style="left:623px;top:38px" width="30" height="9"><path d="M2.5 1.5h3v3.5h1v1h-5v-1h1zM4 6.5v2" stroke="#333" fill="#555" stroke-width="0.8"/><rect x="11.5" y="2" width="5.5" height="5" stroke="#333" fill="none" stroke-width="0.9"/><path d="M11.5 3h5.5" stroke="#333" stroke-width="1.2"/><path d="M22 2l5 5M27 2l-5 5" stroke="#222" stroke-width="1.1"/></svg>
<div style="left:653px;top:35px;width:1px;height:402px;background:#9a9a9a"></div>
<div style="left:557px;top:63px;width:9px;height:9px;background:#fff;border:1px solid #555;box-sizing:border-box"></div>
<svg style="left:557px;top:63px" width="9" height="9"><path d="M1.8 4.5l2 2.2 3.5-5" stroke="#111" stroke-width="1.1" fill="none"/></svg>
<span style="left:567px;top:67.5px;font-size:7px;color:#151515;letter-spacing:-0.3px">Smooth Shading</span>
<div style="left:548px;top:260px;width:652px;height:370px;background:#f0f0f0;border:1px solid #9cbde6;box-sizing:border-box"></div>
<div style="left:549px;top:261px;width:650px;height:16px;background:#fff"></div>
<div style="left:553px;top:264px;width:10px;height:10px;background:#1d5ca8"></div>
<svg style="left:553px;top:264px" width="10" height="10"><path d="M3 5.5v2.5M5 6.5v1.5M7 3v5" stroke="#fff" stroke-width="1.3"/></svg>
<span style="left:566px;top:269.8px;font-size:7px;color:#000">Nevron Chart for Windows Forms - Part of Nevron .NET Vision - Examples</span>
<div style="left:1128px;top:269px;width:7px;height:1px;background:#555"></div>
<div style="left:1155px;top:265px;width:7px;height:7px;border:1px solid #444;box-sizing:border-box"></div>
<svg style="left:1182px;top:265px" width="8" height="8"><path d="M0.5 0.5L7.5 7.5M7.5 0.5L0.5 7.5" stroke="#333" stroke-width="1"/></svg>
<div style="left:549px;top:277px;width:650px;height:17px;background:linear-gradient(#f8f8f8,#eeeeee)"></div>
<span style="left:554px;top:286px;font-size:7px;color:#222;letter-spacing:-0.1px"><u>F</u>ile</span>
<span style="left:573px;top:286px;font-size:7px;color:#222;letter-spacing:-0.1px"><u>E</u>dit</span>
<span style="left:592px;top:286px;font-size:7px;color:#222;letter-spacing:-0.1px"><u>V</u>iew</span>
<span style="left:615px;top:286px;font-size:7px;color:#222;letter-spacing:-0.1px"><u>H</u>elp</span>
<div style="left:549px;top:293px;width:143px;height:371px;background:#ececec;border-right:1px solid #a8a8a8;border-left:1px solid #a8a8a8;box-sizing:border-box"></div>
<div style="left:548px;top:261px;width:1px;height:369px;background:#7489a6"></div>
<div style="left:549px;top:293px;width:143px;height:15px;background:#d8d8d8;border:1px solid #a3a3a3;box-sizing:border-box"></div>
<svg style="left:551px;top:296px" width="2" height="10"><path d="M1 0v10" stroke="#777" stroke-dasharray="1 1.5"/></svg>
<span style="left:555px;top:300.5px;font-size:7px;color:#151515;letter-spacing:-0.3px">Navigation Tree</span>
<svg style="left:661px;top:296px" width="30" height="9"><path d="M2.5 1.5h3v3.5h1v1h-5v-1h1zM4 6.5v2" stroke="#333" fill="#555" stroke-width="0.8"/><rect x="11.5" y="2" width="5.5" height="5" stroke="#333" fill="none" stroke-width="0.9"/><path d="M11.5 3h5.5" stroke="#333" stroke-width="1.2"/><path d="M22 2l5 5M27 2l-5 5" stroke="#222" stroke-width="1.1"/></svg>
<div style="left:550px;top:308px;width:141px;height:18px;background:#ececec"></div>
<svg style="left:554px;top:312px" width="60" height="10"><path d="M1.5 5h5M4 2.5L1.5 5 4 7.5" stroke="#3a6fc4" stroke-width="1.5" fill="none"/><path d="M13 5h5M15.5 2.5L18 5l-2.5 2.5" stroke="#3a6fc4" stroke-width="1.5" fill="none"/><path d="M24.5 0v10" stroke="#999"/><path d="M31 5h5" stroke="#3a6fc4" stroke-width="1.3"/><path d="M44 5h5M46.5 2.5v5" stroke="#3a6fc4" stroke-width="1.3"/></svg>
<div style="left:550px;top:323px;width:141px;height:306px;background:#fff;border-top:1px solid #b8b8b8;box-sizing:border-box"></div>
<div style="left:550px;top:324px;width:128px;height:306px;overflow:hidden;background:#fff">
<div style="left:29px;top:0px;width:1px;height:306px;background:#e6e6e6"></div>
<div style="left:40px;top:0px;width:1px;height:306px;background:#e2e2e2"></div>
<div style="left:51px;top:0.0px;width:1px;height:13px;background:#c8c8c8"></div>
<div style="left:52px;top:7.0px;width:7px;height:1px;background:#c8c8c8"></div>
<svg style="left:59px;top:3.0px" width="8" height="9"><rect width="8" height="9" fill="#8a8a8a"/><rect x="0.5" y="0.5" width="7" height="8" fill="none" stroke="#6a6a6a"/><path d="M2.5 5v3M4.2 6v2M5.8 2v6" stroke="#fff" stroke-width="1"/></svg>
<span style="left:70px;top:7.6px;font-size:7px;color:#151515;letter-spacing:-0.3px">Isolines</span>
<div style="left:44px;top:18.6px;width:3px;height:1px;background:#c8c8c8"></div>
<svg style="left:37px;top:15.600000000000001px" width="7" height="7"><rect x="0.5" y="0.5" width="6" height="6" fill="#fff" stroke="#b4b4b4"/><path d="M2 3.5h3" stroke="#444" stroke-width="0.8"/></svg>
<svg style="left:47px;top:14.600000000000001px" width="11" height="9"><path d="M0.5 1.5h3l1 1h4v1.5H2.5L0.5 8z" fill="#ddd" stroke="#777" stroke-width="0.8"/><path d="M2.5 4h8l-2 4.5h-8z" fill="#eee" stroke="#555" stroke-width="0.8"/></svg>
<span style="left:59px;top:19.200000000000003px;font-size:7px;color:#151515;letter-spacing:-0.3px">Heat Map</span>
<div style="left:51px;top:23.1px;width:1px;height:13px;background:#c8c8c8"></div>
<div style="left:52px;top:30.1px;width:7px;height:1px;background:#c8c8c8"></div>
<svg style="left:59px;top:26.1px" width="8" height="9"><rect width="8" height="9" fill="#8a8a8a"/><rect x="0.5" y="0.5" width="7" height="8" fill="none" stroke="#6a6a6a"/><path d="M2.5 5v3M4.2 6v2M5.8 2v6" stroke="#fff" stroke-width="1"/></svg>
<span style="left:70px;top:30.700000000000003px;font-size:7px;color:#151515;letter-spacing:-0.3px">Heat Map</span>
<div style="left:51px;top:34.7px;width:1px;height:13px;background:#c8c8c8"></div>
<div style="left:52px;top:41.7px;width:7px;height:1px;background:#c8c8c8"></div>
<svg style="left:59px;top:37.7px" width="8" height="9"><rect width="8" height="9" fill="#1d5ca8"/><rect x="0.5" y="0.5" width="7" height="8" fill="none" stroke="#2b4f8a"/><path d="M2.5 5v3M4.2 6v2M5.8 2v6" stroke="#fff" stroke-width="1"/></svg>
<div style="left:68px;top:35.7px;width:58px;height:12px;border:1px solid #8f8f8f;box-sizing:border-box;background:#f6f6f6"></div>
<span style="left:70px;top:42.300000000000004px;font-size:7px;color:#151515;letter-spacing:-0.3px">Heat Map - Contour</span>
<div style="left:51px;top:46.3px;width:1px;height:13px;background:#c8c8c8"></div>
<div style="left:52px;top:53.3px;width:7px;height:1px;background:#c8c8c8"></div>
<svg style="left:59px;top:49.3px" width="8" height="9"><rect width="8" height="9" fill="#8a8a8a"/><rect x="0.5" y="0.5" width="7" height="8" fill="none" stroke="#6a6a6a"/><path d="M2.5 5v3M4.2 6v2M5.8 2v6" stroke="#fff" stroke-width="1"/></svg>
<span style="left:70px;top:53.9px;font-size:7px;color:#151515;letter-spacing:-0.3px">Heat Map - Contour Isolines</span>
<div style="left:51px;top:57.8px;width:1px;height:13px;background:#c8c8c8"></div>
<div style="left:52px;top:64.8px;width:7px;height:1px;background:#c8c8c8"></div>
<svg style="left:59px;top:60.8px" width="8" height="9"><rect width="8" height="9" fill="#8a8a8a"/><rect x="0.5" y="0.5" width="7" height="8" fill="none" stroke="#6a6a6a"/><path d="M2.5 5v3M4.2 6v2M5.8 2v6" stroke="#fff" stroke-width="1"/></svg>
<span style="left:70px;top:65.39999999999999px;font-size:7px;color:#151515;letter-spacing:-0.3px">Cross Section</span>
<div style="left:51px;top:69.4px;width:1px;height:13px;background:#c8c8c8"></div>
<div style="left:52px;top:76.4px;width:7px;height:1px;background:#c8c8c8"></div>
<svg style="left:59px;top:72.4px" width="8" height="9"><rect width="8" height="9" fill="#8a8a8a"/><rect x="0.5" y="0.5" width="7" height="8" fill="none" stroke="#6a6a6a"/><path d="M2.5 5v3M4.2 6v2M5.8 2v6" stroke="#fff" stroke-width="1"/></svg>
<span style="left:70px;top:77.0px;font-size:7px;color:#151515;letter-spacing:-0.3px">Cross Section XY</span>
<div style="left:51px;top:81.0px;width:1px;height:13px;background:#c8c8c8"></div>
<div style="left:52px;top:88.0px;width:7px;height:1px;background:#c8c8c8"></div>
<svg style="left:59px;top:84.0px" width="8" height="9"><rect width="8" height="9" fill="#8a8a8a"/><rect x="0.5" y="0.5" width="7" height="8" fill="none" stroke="#6a6a6a"/><path d="M2.5 5v3M4.2 6v2M5.8 2v6" stroke="#fff" stroke-width="1"/></svg>
<span style="left:70px;top:88.6px;font-size:7px;color:#151515;letter-spacing:-0.3px">Wafer Chart</span>
<div style="left:44px;top:99.6px;width:3px;height:1px;background:#c8c8c8"></div>
<svg style="left:37px;top:96.6px" width="7" height="7"><rect x="0.5" y="0.5" width="6" height="6" fill="#fff" stroke="#b4b4b4"/><path d="M2 3.5h3M3.5 2v3" stroke="#444" stroke-width="0.8"/></svg>
<svg style="left:47px;top:95.6px" width="10" height="9"><defs><linearGradient id="fg" x1="0" y1="0" x2="0" y2="1"><stop offset="0" stop-color="#e8e8e8"/><stop offset="1" stop-color="#b8b8b8"/></linearGradient></defs><path d="M0.5 1h3.5l1 1h4v6.5h-8.5z" fill="url(#fg)" stroke="#aaa" stroke-width="0.7"/><path d="M0.7 3h8.6" stroke="#f4f4f4"/></svg>
<span style="left:59px;top:100.19999999999999px;font-size:7px;color:#151515;letter-spacing:-0.3px">High Low</span>
<div style="left:44px;top:111.1px;width:3px;height:1px;background:#c8c8c8"></div>
<svg style="left:37px;top:108.1px" width="7" height="7"><rect x="0.5" y="0.5" width="6" height="6" fill="#fff" stroke="#b4b4b4"/><path d="M2 3.5h3M3.5 2v3" stroke="#444" stroke-width="0.8"/></svg>
<svg style="left:47px;top:107.1px" width="10" height="9"><defs><linearGradient id="fg" x1="0" y1="0" x2="0" y2="1"><stop offset="0" stop-color="#e8e8e8"/><stop offset="1" stop-color="#b8b8b8"/></linearGradient></defs><path d="M0.5 1h3.5l1 1h4v6.5h-8.5z" fill="url(#fg)" stroke="#aaa" stroke-width="0.7"/><path d="M0.7 3h8.6" stroke="#f4f4f4"/></svg>
<span style="left:59px;top:111.69999999999999px;font-size:7px;color:#151515;letter-spacing:-0.3px">Kagi</span>
<div style="left:44px;top:122.7px;width:3px;height:1px;background:#c8c8c8"></div>
<svg style="left:37px;top:119.7px" width="7" height="7"><rect x="0.5" y="0.5" width="6" height="6" fill="#fff" stroke="#b4b4b4"/><path d="M2 3.5h3M3.5 2v3" stroke="#444" stroke-width="0.8"/></svg>
<svg style="left:47px;top:118.7px" width="10" height="9"><defs><linearGradient id="fg" x1="0" y1="0" x2="0" y2="1"><stop offset="0" stop-color="#e8e8e8"/><stop offset="1" stop-color="#b8b8b8"/></linearGradient></defs><path d="M0.5 1h3.5l1 1h4v6.5h-8.5z" fill="url(#fg)" stroke="#aaa" stroke-width="0.7"/><path d="M0.7 3h8.6" stroke="#f4f4f4"/></svg>
<span style="left:59px;top:123.3px;font-size:7px;color:#151515;letter-spacing:-0.3px">Line</span>
<div style="left:44px;top:134.3px;width:3px;height:1px;background:#c8c8c8"></div>
<svg style="left:37px;top:131.3px" width="7" height="7"><rect x="0.5" y="0.5" width="6" height="6" fill="#fff" stroke="#b4b4b4"/><path d="M2 3.5h3M3.5 2v3" stroke="#444" stroke-width="0.8"/></svg>
<svg style="left:47px;top:130.3px" width="10" height="9"><defs><linearGradient id="fg" x1="0" y1="0" x2="0" y2="1"><stop offset="0" stop-color="#e8e8e8"/><stop offset="1" stop-color="#b8b8b8"/></linearGradient></defs><path d="M0.5 1h3.5l1 1h4v6.5h-8.5z" fill="url(#fg)" stroke="#aaa" stroke-width="0.7"/><path d="M0.7 3h8.6" stroke="#f4f4f4"/></svg>
<span style="left:59px;top:134.9px;font-size:7px;color:#151515;letter-spacing:-0.3px">Line Studies</span>
<div style="left:44px;top:145.8px;width:3px;height:1px;background:#c8c8c8"></div>
<svg style="left:37px;top:142.8px" width="7" height="7"><rect x="0.5" y="0.5" width="6" height="6" fill="#fff" stroke="#b4b4b4"/><path d="M2 3.5h3" stroke="#444" stroke-width="0.8"/></svg>
<svg style="left:47px;top:141.8px" width="11" height="9"><path d="M0.5 1.5h3l1 1h4v1.5H2.5L0.5 8z" fill="#ddd" stroke="#777" stroke-width="0.8"/><path d="M2.5 4h8l-2 4.5h-8z" fill="#eee" stroke="#555" stroke-width="0.8"/></svg>
<span style="left:59px;top:146.4px;font-size:7px;color:#151515;letter-spacing:-0.3px">Mesh Surface</span>
<div style="left:51px;top:150.4px;width:1px;height:13px;background:#c8c8c8"></div>
<div style="left:52px;top:157.4px;width:7px;height:1px;background:#c8c8c8"></div>
<svg style="left:59px;top:153.4px" width="8" height="9"><rect width="8" height="9" fill="#8a8a8a"/><rect x="0.5" y="0.5" width="7" height="8" fill="none" stroke="#6a6a6a"/><path d="M2.5 5v3M4.2 6v2M5.8 2v6" stroke="#fff" stroke-width="1"/></svg>
<span style="left:70px;top:158.0px;font-size:7px;color:#151515;letter-spacing:-0.3px">General</span>
<div style="left:51px;top:162.0px;width:1px;height:13px;background:#c8c8c8"></div>
<div style="left:52px;top:169.0px;width:7px;height:1px;background:#c8c8c8"></div>
<svg style="left:59px;top:165.0px" width="8" height="9"><rect width="8" height="9" fill="#8a8a8a"/><rect x="0.5" y="0.5" width="7" height="8" fill="none" stroke="#6a6a6a"/><path d="M2.5 5v3M4.2 6v2M5.8 2v6" stroke="#fff" stroke-width="1"/></svg>
<span style="left:70px;top:169.6px;font-size:7px;color:#151515;letter-spacing:-0.3px">Intersected Surfaces</span>
<div style="left:51px;top:173.6px;width:1px;height:13px;background:#c8c8c8"></div>
<div style="left:52px;top:180.6px;width:7px;height:1px;background:#c8c8c8"></div>
<svg style="left:59px;top:176.6px" width="8" height="9"><rect width="8" height="9" fill="#8a8a8a"/><rect x="0.5" y="0.5" width="7" height="8" fill="none" stroke="#6a6a6a"/><path d="M2.5 5v3M4.2 6v2M5.8 2v6" stroke="#fff" stroke-width="1"/></svg>
<span style="left:70px;top:181.2px;font-size:7px;color:#151515;letter-spacing:-0.3px">Empty Data Points</span>
<div style="left:51px;top:185.1px;width:1px;height:13px;background:#c8c8c8"></div>
<div style="left:52px;top:192.1px;width:7px;height:1px;background:#c8c8c8"></div>
<svg style="left:59px;top:188.1px" width="8" height="9"><rect width="8" height="9" fill="#8a8a8a"/><rect x="0.5" y="0.5" width="7" height="8" fill="none" stroke="#6a6a6a"/><path d="M2.5 5v3M4.2 6v2M5.8 2v6" stroke="#fff" stroke-width="1"/></svg>
<span style="left:70px;top:192.7px;font-size:7px;color:#151515;letter-spacing:-0.3px">Fill Style</span>
<div style="left:51px;top:196.7px;width:1px;height:13px;background:#c8c8c8"></div>
<div style="left:52px;top:203.7px;width:7px;height:1px;background:#c8c8c8"></div>
<svg style="left:59px;top:199.7px" width="8" height="9"><rect width="8" height="9" fill="#8a8a8a"/><rect x="0.5" y="0.5" width="7" height="8" fill="none" stroke="#6a6a6a"/><path d="M2.5 5v3M4.2 6v2M5.8 2v6" stroke="#fff" stroke-width="1"/></svg>
<span style="left:70px;top:204.29999999999998px;font-size:7px;color:#151515;letter-spacing:-0.3px">Texture Zoning</span>
<div style="left:51px;top:208.3px;width:1px;height:13px;background:#c8c8c8"></div>
<div style="left:52px;top:215.3px;width:7px;height:1px;background:#c8c8c8"></div>
<svg style="left:59px;top:211.3px" width="8" height="9"><rect width="8" height="9" fill="#8a8a8a"/><rect x="0.5" y="0.5" width="7" height="8" fill="none" stroke="#6a6a6a"/><path d="M2.5 5v3M4.2 6v2M5.8 2v6" stroke="#fff" stroke-width="1"/></svg>
<span style="left:70px;top:215.9px;font-size:7px;color:#151515;letter-spacing:-0.3px">Custom Colors</span>
<div style="left:51px;top:219.8px;width:1px;height:13px;background:#c8c8c8"></div>
<div style="left:52px;top:226.8px;width:7px;height:1px;background:#c8c8c8"></div>
<svg style="left:59px;top:222.8px" width="8" height="9"><rect width="8" height="9" fill="#8a8a8a"/><rect x="0.5" y="0.5" width="7" height="8" fill="none" stroke="#6a6a6a"/><path d="M2.5 5v3M4.2 6v2M5.8 2v6" stroke="#fff" stroke-width="1"/></svg>
<span style="left:70px;top:227.4px;font-size:7px;color:#151515;letter-spacing:-0.3px">Large Surface</span>
<div style="left:51px;top:231.4px;width:1px;height:13px;background:#c8c8c8"></div>
<div style="left:52px;top:238.4px;width:7px;height:1px;background:#c8c8c8"></div>
<svg style="left:59px;top:234.4px" width="8" height="9"><rect width="8" height="9" fill="#8a8a8a"/><rect x="0.5" y="0.5" width="7" height="8" fill="none" stroke="#6a6a6a"/><path d="M2.5 5v3M4.2 6v2M5.8 2v6" stroke="#fff" stroke-width="1"/></svg>
<span style="left:70px;top:239.0px;font-size:7px;color:#151515;letter-spacing:-0.3px">Isolines</span>
<div style="left:44px;top:250.0px;width:3px;height:1px;background:#c8c8c8"></div>
<svg style="left:37px;top:247.0px" width="7" height="7"><rect x="0.5" y="0.5" width="6" height="6" fill="#fff" stroke="#b4b4b4"/><path d="M2 3.5h3M3.5 2v3" stroke="#444" stroke-width="0.8"/></svg>
<svg style="left:47px;top:246.0px" width="10" height="9"><defs><linearGradient id="fg" x1="0" y1="0" x2="0" y2="1"><stop offset="0" stop-color="#e8e8e8"/><stop offset="1" stop-color="#b8b8b8"/></linearGradient></defs><path d="M0.5 1h3.5l1 1h4v6.5h-8.5z" fill="url(#fg)" stroke="#aaa" stroke-width="0.7"/><path d="M0.7 3h8.6" stroke="#f4f4f4"/></svg>
<span style="left:59px;top:250.6px;font-size:7px;color:#151515;letter-spacing:-0.3px">Pie</span>
<div style="left:44px;top:261.5px;width:3px;height:1px;background:#c8c8c8"></div>
<svg style="left:37px;top:258.5px" width="7" height="7"><rect x="0.5" y="0.5" width="6" height="6" fill="#fff" stroke="#b4b4b4"/><path d="M2 3.5h3M3.5 2v3" stroke="#444" stroke-width="0.8"/></svg>
<svg style="left:47px;top:257.5px" width="10" height="9"><defs><linearGradient id="fg" x1="0" y1="0" x2="0" y2="1"><stop offset="0" stop-color="#e8e8e8"/><stop offset="1" stop-color="#b8b8b8"/></linearGradient></defs><path d="M0.5 1h3.5l1 1h4v6.5h-8.5z" fill="url(#fg)" stroke="#aaa" stroke-width="0.7"/><path d="M0.7 3h8.6" stroke="#f4f4f4"/></svg>
<span style="left:59px;top:262.1px;font-size:7px;color:#151515;letter-spacing:-0.3px">Point</span>
<div style="left:44px;top:273.1px;width:3px;height:1px;background:#c8c8c8"></div>
<svg style="left:37px;top:270.1px" width="7" height="7"><rect x="0.5" y="0.5" width="6" height="6" fill="#fff" stroke="#b4b4b4"/><path d="M2 3.5h3M3.5 2v3" stroke="#444" stroke-width="0.8"/></svg>
<svg style="left:47px;top:269.1px" width="10" height="9"><defs><linearGradient id="fg" x1="0" y1="0" x2="0" y2="1"><stop offset="0" stop-color="#e8e8e8"/><stop offset="1" stop-color="#b8b8b8"/></linearGradient></defs><path d="M0.5 1h3.5l1 1h4v6.5h-8.5z" fill="url(#fg)" stroke="#aaa" stroke-width="0.7"/><path d="M0.7 3h8.6" stroke="#f4f4f4"/></svg>
<span style="left:59px;top:273.70000000000005px;font-size:7px;color:#151515;letter-spacing:-0.3px">Point and Figure</span>
<div style="left:44px;top:284.7px;width:3px;height:1px;background:#c8c8c8"></div>
<svg style="left:37px;top:281.7px" width="7" height="7"><rect x="0.5" y="0.5" width="6" height="6" fill="#fff" stroke="#b4b4b4"/><path d="M2 3.5h3M3.5 2v3" stroke="#444" stroke-width="0.8"/></svg>
<svg style="left:47px;top:280.7px" width="10" height="9"><defs><linearGradient id="fg" x1="0" y1="0" x2="0" y2="1"><stop offset="0" stop-color="#e8e8e8"/><stop offset="1" stop-color="#b8b8b8"/></linearGradient></defs><path d="M0.5 1h3.5l1 1h4v6.5h-8.5z" fill="url(#fg)" stroke="#aaa" stroke-width="0.7"/><path d="M0.7 3h8.6" stroke="#f4f4f4"/></svg>
<span style="left:59px;top:285.3px;font-size:7px;color:#151515;letter-spacing:-0.3px">Polar</span>
<div style="left:44px;top:296.2px;width:3px;height:1px;background:#c8c8c8"></div>
<svg style="left:37px;top:293.2px" width="7" height="7"><rect x="0.5" y="0.5" width="6" height="6" fill="#fff" stroke="#b4b4b4"/><path d="M2 3.5h3M3.5 2v3" stroke="#444" stroke-width="0.8"/></svg>
<svg style="left:47px;top:292.2px" width="10" height="9"><defs><linearGradient id="fg" x1="0" y1="0" x2="0" y2="1"><stop offset="0" stop-color="#e8e8e8"/><stop offset="1" stop-color="#b8b8b8"/></linearGradient></defs><path d="M0.5 1h3.5l1 1h4v6.5h-8.5z" fill="url(#fg)" stroke="#aaa" stroke-width="0.7"/><path d="M0.7 3h8.6" stroke="#f4f4f4"/></svg>
<span style="left:59px;top:296.8px;font-size:7px;color:#151515;letter-spacing:-0.3px">Quick Point</span>
<div style="left:44px;top:307.8px;width:3px;height:1px;background:#c8c8c8"></div>
<svg style="left:37px;top:304.8px" width="7" height="7"><rect x="0.5" y="0.5" width="6" height="6" fill="#fff" stroke="#b4b4b4"/><path d="M2 3.5h3M3.5 2v3" stroke="#444" stroke-width="0.8"/></svg>
<svg style="left:47px;top:303.8px" width="10" height="9"><defs><linearGradient id="fg" x1="0" y1="0" x2="0" y2="1"><stop offset="0" stop-color="#e8e8e8"/><stop offset="1" stop-color="#b8b8b8"/></linearGradient></defs><path d="M0.5 1h3.5l1 1h4v6.5h-8.5z" fill="url(#fg)" stroke="#aaa" stroke-width="0.7"/><path d="M0.7 3h8.6" stroke="#f4f4f4"/></svg>
<span style="left:59px;top:308.40000000000003px;font-size:7px;color:#151515;letter-spacing:-0.3px">Radar</span>
</div>
<div style="left:678px;top:323px;width:12px;height:307px;background:#f0f0f0"></div>
<div style="left:679px;top:324px;width:10px;height:11px;background:#fafafa;border:1px solid #b0b0b0;box-sizing:border-box"></div>
<svg style="left:679px;top:324px" width="10" height="11"><path d="M2.5 6.5h5l-2.5-3z" fill="#111"/></svg>
<div style="left:679px;top:449px;width:10px;height:61px;background:#dcdcdc;border:1px solid #b8b8b8;box-sizing:border-box"></div>
<svg style="left:681px;top:477px" width="6" height="4"><path d="M0 0.5h6M0 2h6M0 3.5h6" stroke="#aaa" stroke-width="0.6"/></svg>
<div style="left:693px;top:293px;width:402px;height:33px;background:#f0f0f0"></div>
<div style="left:695px;top:306px;width:126px;height:2px;background:linear-gradient(#a8a8a8,#d8d8d8)"></div>
<div style="left:821px;top:306px;width:67px;height:2px;background:linear-gradient(#a8a8a8,#d8d8d8)"></div>
<div style="left:888px;top:306px;width:34px;height:2px;background:linear-gradient(#a8a8a8,#d8d8d8)"></div>
<div style="left:922px;top:306px;width:42px;height:2px;background:linear-gradient(#a8a8a8,#d8d8d8)"></div>
<div style="left:963px;top:306px;width:68px;height:2px;background:linear-gradient(#a8a8a8,#d8d8d8)"></div>
<div style="left:695px;top:322px;width:190px;height:2px;background:linear-gradient(#a8a8a8,#d8d8d8)"></div>
<div style="left:885px;top:322px;width:94px;height:2px;background:linear-gradient(#a8a8a8,#d8d8d8)"></div>
<div style="left:979px;top:322px;width:47px;height:2px;background:linear-gradient(#a8a8a8,#d8d8d8)"></div>
<svg style="left:696px;top:295px" width="2" height="11"><path d="M1 0V11" stroke="#6f6f6f" stroke-width="1" stroke-dasharray="1 2"/></svg>
<svg style="left:822px;top:295px" width="2" height="11"><path d="M1 0V11" stroke="#6f6f6f" stroke-width="1" stroke-dasharray="1 2"/></svg>
<svg style="left:889px;top:295px" width="2" height="11"><path d="M1 0V11" stroke="#6f6f6f" stroke-width="1" stroke-dasharray="1 2"/></svg>
<svg style="left:923px;top:295px" width="2" height="11"><path d="M1 0V11" stroke="#6f6f6f" stroke-width="1" stroke-dasharray="1 2"/></svg>
<svg style="left:964px;top:295px" width="2" height="11"><path d="M1 0V11" stroke="#6f6f6f" stroke-width="1" stroke-dasharray="1 2"/></svg>
<svg style="left:696px;top:311px" width="2" height="11"><path d="M1 0V11" stroke="#6f6f6f" stroke-width="1" stroke-dasharray="1 2"/></svg>
<svg style="left:887px;top:311px" width="2" height="11"><path d="M1 0V11" stroke="#6f6f6f" stroke-width="1" stroke-dasharray="1 2"/></svg>
<svg style="left:981px;top:311px" width="2" height="11"><path d="M1 0V11" stroke="#6f6f6f" stroke-width="1" stroke-dasharray="1 2"/></svg>
<svg style="left:703px;top:295px" width="11" height="11"><path d="M0.5 2.5h3.5l1 1h4.5v6.5H0.5z" fill="#f2b34a" stroke="#d08a20" stroke-width="0.7"/><path d="M1.5 5h8.5l-1 5H0.5z" fill="#f7c45e"/><path d="M7 1.5l2-1 1 1" stroke="#444" stroke-width="0.8" fill="none"/></svg>
<svg style="left:716px;top:295px" width="11" height="11"><rect x="0.7" y="0.7" width="9.3" height="9.3" fill="#fff" stroke="#9b4fc4" stroke-width="1.2"/><rect x="2.5" y="0.7" width="5.5" height="3.3" fill="#9b4fc4"/></svg>
<svg style="left:729px;top:295px" width="11" height="11"><rect x="0.5" y="0.5" width="10" height="10" fill="#fff" stroke="#777" stroke-width="0.8"/><path d="M1 10V6.5c3-2 5 1 9-1V10z" fill="#43a047"/><circle cx="7.8" cy="3" r="1.3" fill="#f5c400"/></svg>
<svg style="left:742px;top:295px" width="11" height="11"><path d="M3 0.5h4l1.5 1.5v3H3z" fill="#fff" stroke="#666" stroke-width="0.7"/><rect x="0.5" y="5" width="10" height="4.5" fill="#e4e4e4" stroke="#777" stroke-width="0.7"/><rect x="1.5" y="8" width="8" height="1" fill="#5b8fd6"/></svg>
<svg style="left:755px;top:295px" width="11" height="11"><path d="M1.5 0.5h5l2.5 2.5v7.5H1.5z" fill="#fafafa" stroke="#888" stroke-width="0.8"/><path d="M3 4h4.5M3 6h4.5M3 8h4.5" stroke="#aaa" stroke-width="0.6"/></svg>
<svg style="left:768px;top:295px" width="11" height="11"><rect x="0.5" y="4" width="2.5" height="6.5" fill="#2b62b8"/><rect x="4" y="2" width="2.5" height="8.5" fill="#2e9e48"/><path d="M5 9l5-7" stroke="#333" stroke-width="1.2"/><rect x="7" y="6" width="2.5" height="4.5" fill="#e07a20"/></svg>
<svg style="left:781px;top:295px" width="11" height="11"><rect x="0.5" y="4.5" width="2.5" height="6" fill="#2b62b8"/><rect x="4" y="6.5" width="2.5" height="4" fill="#e07a20"/><rect x="7.5" y="2" width="2.5" height="8.5" fill="#2e9e48"/><path d="M4.5 0.5l1 2h-2z" fill="#f2b840"/></svg>
<svg style="left:795px;top:295px" width="11" height="11"><rect x="0.5" y="0.5" width="4.5" height="4.5" fill="#e53935"/><rect x="5" y="0.5" width="5" height="4.5" fill="#fbc02d"/><rect x="0.5" y="5" width="4.5" height="5" fill="#1e88e5"/><rect x="5" y="5" width="5" height="5" fill="#43a047"/><path d="M3 9l6-6" stroke="#555" stroke-width="1"/></svg>
<svg style="left:827px;top:295px" width="11" height="11"><rect x="1" y="1" width="8.5" height="8.5" fill="#d4d4d4" stroke="#a8a8a8" stroke-width="0.8"/><path d="M3 3v5M6 3v5" stroke="#a0a0a0" stroke-width="0.8"/></svg>
<svg style="left:840px;top:295px" width="11" height="11"><rect x="1" y="1" width="8.5" height="8.5" fill="#d4d4d4" stroke="#a8a8a8" stroke-width="0.8"/><path d="M3 3v5M6 3v5" stroke="#a0a0a0" stroke-width="0.8"/></svg>
<svg style="left:854px;top:295px" width="11" height="11"><rect x="1" y="1" width="8.5" height="8.5" fill="#d4d4d4" stroke="#a8a8a8" stroke-width="0.8"/><path d="M3 3v5M6 3v5" stroke="#a0a0a0" stroke-width="0.8"/></svg>
<svg style="left:867px;top:295px" width="11" height="11"><rect x="1" y="1" width="8.5" height="8.5" fill="#d4d4d4" stroke="#a8a8a8" stroke-width="0.8"/><path d="M3 3v5M6 3v5" stroke="#a0a0a0" stroke-width="0.8"/></svg>
<svg style="left:895px;top:295px" width="11" height="11"><rect x="0.5" y="0.5" width="4" height="4" fill="#ef6c00"/><path d="M1 10L9 2" stroke="#555" stroke-width="0.9"/><rect x="5" y="6.5" width="5" height="3" fill="#2f6fc4"/></svg>
<svg style="left:929px;top:295px" width="11" height="11"><path d="M1 6l4-4 4 4-4 4z" fill="#6d6d6d"/><path d="M9 5v5" stroke="#2f6fc4" stroke-width="1.5"/></svg>
<svg style="left:943px;top:295px" width="11" height="11"><rect x="0.5" y="0.5" width="10" height="10" fill="#f4f4f4" stroke="#888" stroke-width="0.8"/><path d="M1.5 9c2-2 4-1 8-3v3.5h-8z" fill="#7cc08a"/><circle cx="8" cy="2.8" r="1.2" fill="#f5a300"/></svg>
<svg style="left:972px;top:295px" width="11" height="11"><path d="M2 0.5v9l2.5-2.5 2 3.5 1.3-.7-2-3.3h3.5z" fill="#555"/></svg>
<svg style="left:984px;top:295px" width="11" height="11"><ellipse cx="6" cy="4.5" rx="4" ry="3.3" fill="none" stroke="#777" stroke-width="0.9"/><path d="M3 7l-2 3" stroke="#777" stroke-width="0.9"/></svg>
<svg style="left:997px;top:295px" width="11" height="11"><circle cx="3.5" cy="3.5" r="2.5" fill="none" stroke="#666" stroke-width="1"/><path d="M3.5 6v4M8 1v6M6 4h4" stroke="#777" stroke-width="0.9"/></svg>
<svg style="left:1011px;top:295px" width="11" height="11"><path d="M5.5 0.5v10M0.5 5.5h10" stroke="#aaa" stroke-width="0.9"/><rect x="3.5" y="3.5" width="4" height="4" fill="#b8b8b8"/></svg>
<svg style="left:806px;top:300px" width="5" height="4"><path d="M0 0h4l-2 2.5z" fill="#222"/></svg>
<svg style="left:907px;top:300px" width="5" height="4"><path d="M0 0h4l-2 2.5z" fill="#222"/></svg>
<div style="left:813px;top:293px;width:7px;height:14px;background:linear-gradient(#f4f4f4,#9a9a9a 55%,#4a4a4a)"></div><svg style="left:814px;top:302px" width="5" height="4"><path d="M0.5 0.5h4M0.5 1.5h4l-2 2z" stroke="#fff" stroke-width="0.6" fill="#fff"/></svg>
<div style="left:880px;top:293px;width:7px;height:14px;background:linear-gradient(#f4f4f4,#9a9a9a 55%,#4a4a4a)"></div><svg style="left:881px;top:302px" width="5" height="4"><path d="M0.5 0.5h4M0.5 1.5h4l-2 2z" stroke="#fff" stroke-width="0.6" fill="#fff"/></svg>
<div style="left:914px;top:293px;width:7px;height:14px;background:linear-gradient(#f4f4f4,#9a9a9a 55%,#4a4a4a)"></div><svg style="left:915px;top:302px" width="5" height="4"><path d="M0.5 0.5h4M0.5 1.5h4l-2 2z" stroke="#fff" stroke-width="0.6" fill="#fff"/></svg>
<div style="left:957px;top:293px;width:7px;height:14px;background:linear-gradient(#f4f4f4,#9a9a9a 55%,#4a4a4a)"></div><svg style="left:958px;top:302px" width="5" height="4"><path d="M0.5 0.5h4M0.5 1.5h4l-2 2z" stroke="#fff" stroke-width="0.6" fill="#fff"/></svg>
<div style="left:1024px;top:293px;width:7px;height:14px;background:linear-gradient(#f4f4f4,#9a9a9a 55%,#4a4a4a)"></div><svg style="left:1025px;top:302px" width="5" height="4"><path d="M0.5 0.5h4M0.5 1.5h4l-2 2z" stroke="#fff" stroke-width="0.6" fill="#fff"/></svg>
<svg style="left:703px;top:311px" width="11" height="11"><path d="M2 1v8h8" stroke="#a4a4a4" stroke-width="0.9" fill="none"/><path d="M3 4c2-2 4 0 6-2" stroke="#a8a8a8" stroke-width="0.8" fill="none"/></svg>
<svg style="left:716px;top:311px" width="11" height="11"><ellipse cx="5" cy="5.5" rx="4" ry="2.5" fill="none" stroke="#a4a4a4" stroke-width="0.9"/><path d="M5 1v9" stroke="#a2a2a2" stroke-width="0.9"/></svg>
<svg style="left:729px;top:311px" width="11" height="11"><ellipse cx="5" cy="5.5" rx="4" ry="2.5" fill="none" stroke="#a4a4a4" stroke-width="0.9"/><path d="M5 1v9" stroke="#a2a2a2" stroke-width="0.9"/></svg>
<svg style="left:742px;top:311px" width="11" height="11"><ellipse cx="5" cy="5.5" rx="4" ry="2.5" fill="none" stroke="#a4a4a4" stroke-width="0.9"/><path d="M5 1v9" stroke="#a2a2a2" stroke-width="0.9"/></svg>
<svg style="left:755px;top:311px" width="11" height="11"><ellipse cx="5" cy="5.5" rx="4" ry="2.5" fill="none" stroke="#a4a4a4" stroke-width="0.9"/><path d="M5 1v9" stroke="#a2a2a2" stroke-width="0.9"/></svg>
<svg style="left:768px;top:311px" width="11" height="11"><path d="M2 1v8h8" stroke="#a4a4a4" stroke-width="0.9" fill="none"/><path d="M3 4c2-2 4 0 6-2" stroke="#a8a8a8" stroke-width="0.8" fill="none"/></svg>
<svg style="left:781px;top:311px" width="11" height="11"><path d="M2 1v8h8" stroke="#a4a4a4" stroke-width="0.9" fill="none"/><path d="M3 4c2-2 4 0 6-2" stroke="#a8a8a8" stroke-width="0.8" fill="none"/></svg>
<svg style="left:795px;top:311px" width="11" height="11"><circle cx="4.5" cy="4.5" r="3.3" fill="#d8d8d8" stroke="#a2a2a2" stroke-width="0.9"/><path d="M7 7l3 3" stroke="#a2a2a2" stroke-width="1.4"/></svg>
<svg style="left:808px;top:311px" width="11" height="11"><circle cx="4.5" cy="4.5" r="3.3" fill="#d8d8d8" stroke="#a2a2a2" stroke-width="0.9"/><path d="M7 7l3 3" stroke="#a2a2a2" stroke-width="1.4"/></svg>
<svg style="left:821px;top:311px" width="11" height="11"><rect x="0.5" y="2.5" width="7" height="7" fill="none" stroke="#a4a4a4" stroke-width="0.8"/><rect x="3" y="0.5" width="7" height="7" fill="none" stroke="#acacac" stroke-width="0.8"/></svg>
<svg style="left:834px;top:311px" width="11" height="11"><rect x="0.5" y="2.5" width="7" height="7" fill="none" stroke="#a4a4a4" stroke-width="0.8"/><rect x="3" y="0.5" width="7" height="7" fill="none" stroke="#acacac" stroke-width="0.8"/></svg>
<svg style="left:847px;top:311px" width="11" height="11"><rect x="0.5" y="0.5" width="9.5" height="9.5" fill="none" stroke="#a8a8a8" stroke-width="0.9"/></svg>
<svg style="left:860px;top:311px" width="11" height="11"><rect x="0.5" y="0.5" width="9.5" height="9.5" fill="none" stroke="#a8a8a8" stroke-width="0.9"/></svg>
<svg style="left:894px;top:311px" width="11" height="11"><path d="M2 5l3-3 4 2-1 6H3z" fill="#c4c4c4" stroke="#a8a8a8" stroke-width="0.7"/></svg>
<svg style="left:906px;top:311px" width="11" height="11"><path d="M2 5l3-3 4 2-1 6H3z" fill="#c4c4c4" stroke="#a8a8a8" stroke-width="0.7"/></svg>
<svg style="left:920px;top:311px" width="11" height="11"><path d="M1 4h9M1 9h9" stroke="#a4a4a4" stroke-width="0.9"/><rect x="2" y="5" width="7" height="3" fill="#bcbcbc"/><path d="M3 1v2.5M8 1v2.5" stroke="#a0a0a0"/></svg>
<svg style="left:933px;top:311px" width="11" height="11"><path d="M1 4h9M1 9h9" stroke="#a4a4a4" stroke-width="0.9"/><rect x="2" y="5" width="7" height="3" fill="#bcbcbc"/><path d="M3 1v2.5M8 1v2.5" stroke="#a0a0a0"/></svg>
<svg style="left:946px;top:311px" width="11" height="11"><path d="M3 1v9M8 1v9" stroke="#a4a4a4" stroke-width="0.9"/><rect x="4" y="2" width="3" height="7" fill="#bcbcbc"/></svg>
<svg style="left:959px;top:311px" width="11" height="11"><path d="M3 1v9M8 1v9" stroke="#a4a4a4" stroke-width="0.9"/><rect x="4" y="2" width="3" height="7" fill="#bcbcbc"/></svg>
<svg style="left:988px;top:311px" width="11" height="11"><circle cx="5.5" cy="4.5" r="3.5" fill="#cccccc" stroke="#acacac" stroke-width="0.8"/><rect x="4" y="8" width="3" height="2" fill="#bcbcbc"/></svg>
<svg style="left:1001px;top:311px" width="11" height="11"><path d="M1 2h6l-2 4H3z" fill="#bcbcbc"/><path d="M4 6v4" stroke="#a2a2a2" stroke-width="1.2"/></svg>
<svg style="left:873px;top:316px" width="5" height="4"><path d="M0 0h4l-2 2.5z" fill="#222"/></svg>
<svg style="left:1014px;top:316px" width="5" height="4"><path d="M0 0h4l-2 2.5z" fill="#222"/></svg>
<div style="left:878px;top:309px;width:7px;height:14px;background:linear-gradient(#f4f4f4,#9a9a9a 55%,#4a4a4a)"></div><svg style="left:879px;top:318px" width="5" height="4"><path d="M0.5 0.5h4M0.5 1.5h4l-2 2z" stroke="#fff" stroke-width="0.6" fill="#fff"/></svg>
<div style="left:972px;top:309px;width:7px;height:14px;background:linear-gradient(#f4f4f4,#9a9a9a 55%,#4a4a4a)"></div><svg style="left:973px;top:318px" width="5" height="4"><path d="M0.5 0.5h4M0.5 1.5h4l-2 2z" stroke="#fff" stroke-width="0.6" fill="#fff"/></svg>
<div style="left:1019px;top:309px;width:7px;height:14px;background:linear-gradient(#f4f4f4,#9a9a9a 55%,#4a4a4a)"></div><svg style="left:1020px;top:318px" width="5" height="4"><path d="M0.5 0.5h4M0.5 1.5h4l-2 2z" stroke="#fff" stroke-width="0.6" fill="#fff"/></svg>
<div style="left:694px;top:325px;width:397px;height:306px;background:#fff;border-left:1px solid #666;border-top:1px solid #777;box-sizing:border-box"></div>
<div style="left:1090px;top:325px;width:1.5px;height:306px;background:#707070"></div>
<span style="left:837px;top:346.5px;font-family:'Liberation Serif',serif;font-style:italic;font-size:14.4px;color:#4d5c78">Heat Map Contour</span>
<div style="left:757.5px;top:389.1px;width:251px;height:228.3px;overflow:hidden">
<div style="left:0;top:224.50px;width:251px;height:4.41px;background:linear-gradient(90deg,#f7e01c 0.8%,#f7e71c 2.5%,#f6ec1d 4.2%,#f1eb24 5.8%,#eeea2a 7.5%,#ebea2d 9.2%,#eae92f 10.8%,#eae92e 12.5%,#ebea2d 14.2%,#edea2a 15.8%,#f0ea27 17.5%,#f2eb23 19.2%,#f5ec1e 20.8%,#f7eb1c 22.5%,#f7e81c 24.2%,#f7e61c 25.8%,#f7e41c 27.5%,#f7e31c 29.2%,#f7e21c 30.8%,#f7e31c 32.5%,#f7e41c 34.2%,#f7e71c 35.8%,#f7ea1c 37.5%,#f5ec1f 39.2%,#efea27 40.8%,#e9e930 42.5%,#e2e83a 44.2%,#dbe645 45.8%,#d3e550 47.5%,#cbe35c 49.2%,#c3e167 50.8%,#bce072 52.5%,#b5de7c 54.2%,#afdd85 55.8%,#a9dc8b 57.5%,#a3da88 59.2%,#9fd886 60.8%,#9cd784 62.5%,#9cd784 64.2%,#9ed885 65.8%,#a1d987 67.5%,#a7db8a 69.2%,#aedd87 70.8%,#b5de7c 72.5%,#bde070 74.2%,#c7e262 75.8%,#d1e453 77.5%,#dde742 79.2%,#e8e931 80.8%,#f5ec1f 82.5%,#f7e31c 84.2%,#f7d71d 85.8%,#f7cc1d 87.5%,#f7c21d 89.2%,#f7b81d 90.8%,#f7ae1e 92.5%,#f7a61e 94.2%,#f6991f 95.8%,#f58d20 97.5%,#f48421 99.2%)"></div>
<div style="left:0;top:220.69px;width:251px;height:4.41px;background:linear-gradient(90deg,#f7ce1d 0.8%,#f7d41d 2.5%,#f7da1c 4.2%,#f7df1c 5.8%,#f7e41c 7.5%,#f7e81c 9.2%,#f7ec1c 10.8%,#f4eb20 12.5%,#f2eb24 14.2%,#efea27 15.8%,#edea2a 17.5%,#ecea2c 19.2%,#eae92f 20.8%,#e9e931 22.5%,#e8e932 24.2%,#e6e934 25.8%,#e5e837 27.5%,#e3e839 29.2%,#e1e73c 30.8%,#dfe73f 32.5%,#dde742 34.2%,#dae646 35.8%,#d7e54a 37.5%,#d4e54f 39.2%,#d1e454 40.8%,#cde359 42.5%,#c9e35e 44.2%,#c6e264 45.8%,#c2e169 47.5%,#bee06f 49.2%,#bbdf74 50.8%,#b8df78 52.5%,#b5de7c 54.2%,#b3de7f 55.8%,#b1dd82 57.5%,#b0dd83 59.2%,#b0dd84 60.8%,#b0dd83 62.5%,#b1dd82 64.2%,#b3de7f 65.8%,#b6de7b 67.5%,#b9df76 69.2%,#bee06f 70.8%,#c3e168 72.5%,#c8e260 74.2%,#cfe456 75.8%,#d6e54c 77.5%,#dde742 79.2%,#e5e837 80.8%,#edea2b 82.5%,#f5ec1f 84.2%,#f7e61c 85.8%,#f7df1c 87.5%,#f7d81d 89.2%,#f7d01d 90.8%,#f7c91d 92.5%,#f7c31d 94.2%,#f7bc1d 95.8%,#f7b61e 97.5%,#f7b11e 99.2%)"></div>
<div style="left:0;top:216.89px;width:251px;height:4.41px;background:linear-gradient(90deg,#f7bc1d 0.8%,#f7c11d 2.5%,#f7c71d 4.2%,#f7cd1d 5.8%,#f7d31d 7.5%,#f7d91d 9.2%,#f7df1c 10.8%,#f7e51c 12.5%,#f7eb1c 14.2%,#f2eb24 15.8%,#ebea2d 17.5%,#e5e836 19.2%,#dfe73f 20.8%,#d9e647 22.5%,#d4e54f 24.2%,#cee457 25.8%,#c9e35e 27.5%,#c5e265 29.2%,#c1e16b 30.8%,#bde070 32.5%,#badf75 34.2%,#b7df79 35.8%,#b5de7c 37.5%,#b3de7f 39.2%,#b1de81 40.8%,#b1dd83 42.5%,#b0dd83 44.2%,#b0dd83 45.8%,#b0dd83 47.5%,#b1dd82 49.2%,#b2de80 50.8%,#b4de7e 52.5%,#b5de7c 54.2%,#b7df79 55.8%,#b9df76 57.5%,#bbe073 59.2%,#bee06f 60.8%,#c0e16b 62.5%,#c3e168 64.2%,#c6e264 65.8%,#c9e260 67.5%,#cbe35b 69.2%,#cee457 70.8%,#d1e453 72.5%,#d4e54f 74.2%,#d7e54a 75.8%,#dae646 77.5%,#dee741 79.2%,#e1e73c 80.8%,#e5e837 82.5%,#e8e931 84.2%,#ecea2b 85.8%,#f1eb25 87.5%,#f5ec1f 89.2%,#f7e91c 90.8%,#f7e51c 92.5%,#f7e01c 94.2%,#f7da1c 95.8%,#f7d51d 97.5%,#f7cf1d 99.2%)"></div>
<div style="left:0;top:213.08px;width:251px;height:4.41px;background:linear-gradient(90deg,#f7aa1e 0.8%,#f7af1e 2.5%,#f7b41e 4.2%,#f7bb1d 5.8%,#f7c21d 7.5%,#f7ca1d 9.2%,#f7d21d 10.8%,#f7db1c 12.5%,#f7e51c 14.2%,#f4eb20 15.8%,#e9e930 17.5%,#dfe740 19.2%,#d4e54f 20.8%,#cae35e 22.5%,#c0e16c 24.2%,#b7df79 25.8%,#aedd86 27.5%,#a6da8a 29.2%,#9dd785 30.8%,#96d580 32.5%,#90d37d 34.2%,#8cd17b 35.8%,#89d07a 37.5%,#89d079 39.2%,#8ad07a 40.8%,#8cd17b 42.5%,#90d37d 44.2%,#95d480 45.8%,#9bd783 47.5%,#a2d987 49.2%,#a9dc8c 50.8%,#afdd84 52.5%,#b5de7b 54.2%,#bbe073 55.8%,#c1e16a 57.5%,#c7e262 59.2%,#cce35b 60.8%,#d1e454 62.5%,#d5e54e 64.2%,#d8e649 65.8%,#dbe645 67.5%,#dde742 69.2%,#dfe73f 70.8%,#dfe73e 72.5%,#e0e73e 74.2%,#e0e73e 75.8%,#dfe73f 77.5%,#dee740 79.2%,#dee741 80.8%,#dde742 82.5%,#dce643 84.2%,#dce643 85.8%,#dce643 87.5%,#dde741 89.2%,#dfe73f 90.8%,#e2e83b 92.5%,#e5e836 94.2%,#eae930 95.8%,#efea27 97.5%,#f6ec1e 99.2%)"></div>
<div style="left:0;top:209.28px;width:251px;height:4.41px;background:linear-gradient(90deg,#f58e20 0.8%,#f5951f 2.5%,#f6a01e 4.2%,#f7a91e 5.8%,#f7b21e 7.5%,#f7bb1d 9.2%,#f7c61d 10.8%,#f7d21d 12.5%,#f7df1c 14.2%,#f6ec1d 15.8%,#e7e933 17.5%,#d8e649 19.2%,#c9e25f 20.8%,#bbdf74 22.5%,#addd88 24.2%,#9cd784 25.8%,#8cd17b 27.5%,#7ecc73 29.2%,#72c86c 30.8%,#68c467 32.5%,#61c263 34.2%,#5dc060 35.8%,#5cc060 37.5%,#5dc060 39.2%,#60c262 40.8%,#66c466 42.5%,#6ec76a 44.2%,#78ca70 45.8%,#83ce76 47.5%,#90d37d 49.2%,#9ed885 50.8%,#abdc8a 52.5%,#b5de7c 54.2%,#bfe06d 55.8%,#c9e25f 57.5%,#d2e453 59.2%,#d9e647 60.8%,#e0e73d 62.5%,#e6e835 64.2%,#eae92f 65.8%,#edea2b 67.5%,#eeea29 69.2%,#eeea29 70.8%,#edea2a 72.5%,#ebe92e 74.2%,#e8e932 75.8%,#e4e838 77.5%,#dfe73f 79.2%,#dae646 80.8%,#d5e54d 82.5%,#d0e454 84.2%,#cce35a 85.8%,#c9e25f 87.5%,#c6e263 89.2%,#c5e265 90.8%,#c5e265 92.5%,#c7e262 94.2%,#cae35d 95.8%,#cfe456 97.5%,#d6e54c 99.2%)"></div>
<div style="left:0;top:205.47px;width:251px;height:4.41px;background:linear-gradient(90deg,#f27022 0.8%,#f27722 2.5%,#f38121 4.2%,#f58f20 5.8%,#f7a11e 7.5%,#f7ae1e 9.2%,#f7bb1d 10.8%,#f7ca1d 12.5%,#f7da1d 14.2%,#f7eb1c 15.8%,#e5e836 17.5%,#d2e452 19.2%,#bfe06e 20.8%,#acdc89 22.5%,#94d480 24.2%,#7ecc73 25.8%,#69c567 27.5%,#57be5d 29.2%,#49b955 30.8%,#41b554 32.5%,#43b45e 34.2%,#45b364 35.8%,#45b266 37.5%,#44b362 39.2%,#42b45a 40.8%,#42b751 42.5%,#4ebb58 44.2%,#5cc060 45.8%,#6dc669 47.5%,#7fcd74 49.2%,#92d37e 50.8%,#a5da89 52.5%,#b5de7c 54.2%,#c2e169 55.8%,#cfe456 57.5%,#dbe645 59.2%,#e5e836 60.8%,#eeea29 62.5%,#f5ec1f 64.2%,#f7e91c 65.8%,#f7e71c 67.5%,#f7e61c 69.2%,#f7e71c 70.8%,#f7ea1c 72.5%,#f5ec1f 74.2%,#efea28 75.8%,#e7e933 77.5%,#dfe73f 79.2%,#d6e54b 80.8%,#cee358 82.5%,#c5e265 84.2%,#bde070 85.8%,#b6de7b 87.5%,#b0dd83 89.2%,#acdc89 90.8%,#aadc8c 92.5%,#aadc8c 94.2%,#addd88 95.8%,#b1de81 97.5%,#b8df77 99.2%)"></div>
<div style="left:0;top:201.67px;width:251px;height:4.41px;background:linear-gradient(90deg,#ef5724 0.8%,#f05c24 2.5%,#f16623 4.2%,#f27522 5.8%,#f48920 7.5%,#f7a11e 9.2%,#f7b21e 10.8%,#f7c31d 12.5%,#f7d61d 14.2%,#f7ea1c 15.8%,#e2e83a 17.5%,#cbe35b 19.2%,#b5de7d 20.8%,#9ad683 22.5%,#7dcc72 24.2%,#62c263 25.8%,#49b955 27.5%,#44b360 29.2%,#49af77 30.8%,#4eac89 32.5%,#51aa95 34.2%,#52a99b 35.8%,#52a99c 37.5%,#51aa96 39.2%,#4eac8b 40.8%,#4aaf7b 42.5%,#45b266 44.2%,#42b751 45.8%,#57be5d 47.5%,#6ec76a 49.2%,#86cf78 50.8%,#9fd886 52.5%,#b3de7e 54.2%,#c4e166 55.8%,#d4e54e 57.5%,#e3e839 59.2%,#efea27 60.8%,#f7e91c 62.5%,#f7e21c 64.2%,#f7dd1c 65.8%,#f7da1d 67.5%,#f7da1d 69.2%,#f7dc1c 70.8%,#f7e01c 72.5%,#f7e61c 74.2%,#f4eb20 75.8%,#eae92f 77.5%,#dfe740 79.2%,#d2e451 80.8%,#c6e263 82.5%,#badf75 84.2%,#afdd85 85.8%,#a3d988 87.5%,#97d581 89.2%,#8ed27c 90.8%,#88d079 92.5%,#86cf78 94.2%,#88d079 95.8%,#8ed27c 97.5%,#98d682 99.2%)"></div>
<div style="left:0;top:197.86px;width:251px;height:4.41px;background:linear-gradient(90deg,#ed4126 0.8%,#ed4625 2.5%,#ee5025 4.2%,#f06023 5.8%,#f27522 7.5%,#f59020 9.2%,#f7aa1e 10.8%,#f7be1d 12.5%,#f7d31d 14.2%,#f7ea1c 15.8%,#dfe73e 17.5%,#c5e264 19.2%,#abdc8b 20.8%,#88d079 22.5%,#67c466 24.2%,#48b954 25.8%,#46b26b 27.5%,#4eac8b 29.2%,#54a8a5 30.8%,#59a4b9 32.5%,#5ca2c6 34.2%,#5ea1cd 35.8%,#5ea1cc 37.5%,#5ca2c5 39.2%,#59a5b8 40.8%,#54a8a4 42.5%,#4eac8b 44.2%,#47b16d 45.8%,#43b752 47.5%,#5ec161 49.2%,#7acb71 50.8%,#97d581 52.5%,#b1dd82 54.2%,#c5e265 55.8%,#d8e54a 57.5%,#e8e931 59.2%,#f7ec1c 60.8%,#f7e11c 62.5%,#f7d81d 64.2%,#f7d31d 65.8%,#f7d01d 67.5%,#f7d01d 69.2%,#f7d31d 70.8%,#f7d91d 72.5%,#f7e11c 74.2%,#f7eb1c 75.8%,#ebea2d 77.5%,#dde741 79.2%,#cee457 80.8%,#bfe06e 82.5%,#b0dd84 84.2%,#9ed885 85.8%,#8dd27b 87.5%,#7ecc73 89.2%,#72c86c 90.8%,#6ac568 92.5%,#66c465 94.2%,#67c466 95.8%,#6cc669 97.5%,#77ca6f 99.2%)"></div>
<div style="left:0;top:194.06px;width:251px;height:4.41px;background:linear-gradient(90deg,#eb3127 0.8%,#ec3527 2.5%,#ed3f26 4.2%,#ee5025 5.8%,#f16723 7.5%,#f48321 9.2%,#f7a51e 10.8%,#f7ba1d 12.5%,#f7d21d 14.2%,#f7eb1c 15.8%,#dce643 17.5%,#bfe06e 19.2%,#9fd886 20.8%,#78ca70 22.5%,#53bd5b 24.2%,#45b364 25.8%,#4eac8d 27.5%,#57a6b0 29.2%,#5ea1cd 30.8%,#639cdd 32.5%,#6597db 34.2%,#6695d9 35.8%,#6695d9 37.5%,#6498db 39.2%,#629ede 40.8%,#5da2c8 42.5%,#56a7ac 44.2%,#4eac8a 45.8%,#45b365 47.5%,#4fbb59 49.2%,#6fc76b 50.8%,#8fd27d 52.5%,#aedd87 54.2%,#c4e166 55.8%,#d9e648 57.5%,#ecea2d 59.2%,#f7e71c 60.8%,#f7db1c 62.5%,#f7d21d 64.2%,#f7cc1d 65.8%,#f7c91d 67.5%,#f7c91d 69.2%,#f7cd1d 70.8%,#f7d41d 72.5%,#f7dd1c 74.2%,#f7e91c 75.8%,#ebea2d 77.5%,#dbe645 79.2%,#cae35e 80.8%,#b8df78 82.5%,#a5da89 84.2%,#8ed27c 85.8%,#7acb71 87.5%,#68c466 89.2%,#59bf5e 90.8%,#4fbc59 92.5%,#4aba56 94.2%,#4aba56 95.8%,#4fbc59 97.5%,#5abf5f 99.2%)"></div>
<div style="left:0;top:190.25px;width:251px;height:4.41px;background:linear-gradient(90deg,#ea2728 0.8%,#eb2b27 2.5%,#ec3527 4.2%,#ed4625 5.8%,#f05e24 7.5%,#f37c21 9.2%,#f7a01e 10.8%,#f7b91d 12.5%,#f7d21d 14.2%,#f6ec1d 15.8%,#d8e649 17.5%,#b9df77 19.2%,#94d47f 20.8%,#6ac568 22.5%,#43b752 24.2%,#4bae7d 25.8%,#55a7a9 27.5%,#5ea1cf 29.2%,#6498db 30.8%,#6890d7 32.5%,#6a8ad4 34.2%,#6b87d3 35.8%,#6a88d3 37.5%,#698bd5 39.2%,#6792d8 40.8%,#639bdc 42.5%,#5da2c8 44.2%,#54a8a4 45.8%,#4aaf7b 47.5%,#41b651 49.2%,#63c364 50.8%,#86cf78 52.5%,#a9dc8b 54.2%,#c1e16a 55.8%,#d8e649 57.5%,#ecea2c 59.2%,#f7e61c 60.8%,#f7d91d 62.5%,#f7cf1d 64.2%,#f7c81d 65.8%,#f7c51d 67.5%,#f7c61d 69.2%,#f7ca1d 70.8%,#f7d21d 72.5%,#f7dc1c 74.2%,#f7e91c 75.8%,#eae92f 77.5%,#d8e649 79.2%,#c5e265 80.8%,#b1dd82 82.5%,#99d683 84.2%,#80cd74 85.8%,#69c567 87.5%,#55be5c 89.2%,#45b853 90.8%,#42b558 92.5%,#44b360 94.2%,#44b361 95.8%,#42b45a 97.5%,#43b752 99.2%)"></div>
<div style="left:0;top:186.45px;width:251px;height:4.41px;background:linear-gradient(90deg,#ea2428 0.8%,#ea2728 2.5%,#eb3127 4.2%,#ed4326 5.8%,#f05c24 7.5%,#f37b21 9.2%,#f7a01e 10.8%,#f7ba1d 12.5%,#f7d41d 14.2%,#f3eb22 15.8%,#d3e550 17.5%,#b3de7f 19.2%,#89d07a 20.8%,#5ec161 22.5%,#44b35f 24.2%,#50ab92 25.8%,#5ba3c0 27.5%,#639bdc 29.2%,#688fd6 30.8%,#6b86d2 32.5%,#6e80cf 34.2%,#6f7dce 35.8%,#6e7ece 37.5%,#6d82d0 39.2%,#6a88d3 40.8%,#6792d8 42.5%,#629dde 44.2%,#59a4b9 45.8%,#4fab8f 47.5%,#44b360 49.2%,#58bf5d 50.8%,#7ccc72 52.5%,#a1d987 54.2%,#bde071 55.8%,#d4e54f 57.5%,#e9e930 59.2%,#f7e81c 60.8%,#f7da1d 62.5%,#f7cf1d 64.2%,#f7c91d 65.8%,#f7c61d 67.5%,#f7c61d 69.2%,#f7cb1d 70.8%,#f7d31d 72.5%,#f7de1c 74.2%,#f7eb1c 75.8%,#e6e934 77.5%,#d3e550 79.2%,#bfe06d 80.8%,#abdc8b 82.5%,#8fd27d 84.2%,#74c96e 85.8%,#5cc060 87.5%,#47b954 89.2%,#43b45d 90.8%,#47b16e 92.5%,#49af77 94.2%,#4aaf78 95.8%,#48b071 97.5%,#44b362 99.2%)"></div>
<div style="left:0;top:182.64px;width:251px;height:4.41px;background:linear-gradient(90deg,#ea2728 0.8%,#eb2a27 2.5%,#ec3527 4.2%,#ee4725 5.8%,#f06023 7.5%,#f38021 9.2%,#f7a51e 10.8%,#f7bd1d 12.5%,#f7d81d 14.2%,#eeea29 15.8%,#cee358 17.5%,#addd88 19.2%,#80cd74 20.8%,#54bd5b 22.5%,#47b16e 24.2%,#54a8a2 25.8%,#5fa0d1 27.5%,#6694d9 29.2%,#6a88d3 30.8%,#6e7fce 32.5%,#7079cb 34.2%,#7176ca 35.8%,#7177ca 37.5%,#707acc 39.2%,#6d81d0 40.8%,#698bd4 42.5%,#6597da 44.2%,#5da1cb 45.8%,#53a9a0 47.5%,#48b170 49.2%,#4cba57 50.8%,#72c86c 52.5%,#97d581 54.2%,#b6de7b 55.8%,#cee358 57.5%,#e3e838 59.2%,#f6ec1d 60.8%,#f7df1c 62.5%,#f7d41d 64.2%,#f7cd1d 65.8%,#f7ca1d 67.5%,#f7cb1d 69.2%,#f7cf1d 70.8%,#f7d71d 72.5%,#f7e21c 74.2%,#f3eb22 75.8%,#e1e73c 77.5%,#cee358 79.2%,#b9df76 80.8%,#a2d988 82.5%,#86cf78 84.2%,#6bc568 85.8%,#52bc5a 87.5%,#41b554 89.2%,#47b16c 90.8%,#4baf7c 92.5%,#4dad85 94.2%,#4dad87 95.8%,#4cae80 97.5%,#48b071 99.2%)"></div>
<div style="left:0;top:178.84px;width:251px;height:4.41px;background:linear-gradient(90deg,#eb3227 0.8%,#ec3527 2.5%,#ed4026 4.2%,#ef5224 5.8%,#f16b23 7.5%,#f48b20 9.2%,#f7ab1e 10.8%,#f7c31d 12.5%,#f7de1c 14.2%,#e8e932 15.8%,#c7e261 17.5%,#a5da89 19.2%,#78ca70 20.8%,#4cba57 22.5%,#4aaf78 24.2%,#56a6ac 25.8%,#619fdb 27.5%,#6790d7 29.2%,#6c84d1 30.8%,#6f7bcd 32.5%,#7275ca 34.2%,#7372c8 35.8%,#7373c8 37.5%,#7176ca 39.2%,#6f7dcd 40.8%,#6b86d2 42.5%,#6792d8 44.2%,#619fd9 45.8%,#56a6ae 47.5%,#4bae7f 49.2%,#41b651 50.8%,#66c466 52.5%,#8bd17a 54.2%,#addd88 55.8%,#c5e265 57.5%,#dae646 59.2%,#edea2b 60.8%,#f7e71c 62.5%,#f7dc1c 64.2%,#f7d51d 65.8%,#f7d21d 67.5%,#f7d31d 69.2%,#f7d71d 70.8%,#f7df1c 72.5%,#f7e91c 74.2%,#ebea2d 75.8%,#dae646 77.5%,#c7e262 79.2%,#b3de7f 80.8%,#9ad683 82.5%,#7ecc73 84.2%,#64c364 85.8%,#4cba57 87.5%,#43b45d 89.2%,#48b073 90.8%,#4cad83 92.5%,#4eac8c 94.2%,#4fac8d 95.8%,#4dad86 97.5%,#49af77 99.2%)"></div>
<div style="left:0;top:175.03px;width:251px;height:4.41px;background:linear-gradient(90deg,#ed4326 0.8%,#ed4725 2.5%,#ef5124 4.2%,#f06323 5.8%,#f37c21 7.5%,#f69c1f 9.2%,#f7b41e 10.8%,#f7cc1d 12.5%,#f7e61c 14.2%,#e0e73e 15.8%,#c1e16b 17.5%,#9dd785 19.2%,#71c86c 20.8%,#46b853 22.5%,#4bae7f 24.2%,#57a6b1 25.8%,#629ede 27.5%,#688fd7 29.2%,#6c83d1 30.8%,#707acc 32.5%,#7274c9 34.2%,#7371c8 35.8%,#7372c8 37.5%,#7275c9 39.2%,#6f7bcc 40.8%,#6c84d1 42.5%,#688fd7 44.2%,#639ddd 45.8%,#59a4b9 47.5%,#4eac8c 49.2%,#43b45d 50.8%,#5abf5f 52.5%,#7dcc73 54.2%,#9fd886 55.8%,#b9df76 57.5%,#cee358 59.2%,#e0e73d 60.8%,#efea27 62.5%,#f7e91c 64.2%,#f7e21c 65.8%,#f7de1c 67.5%,#f7df1c 69.2%,#f7e21c 70.8%,#f7e91c 72.5%,#efea28 74.2%,#e1e73c 75.8%,#d1e453 77.5%,#bfe06d 79.2%,#acdc89 80.8%,#92d47f 82.5%,#78ca70 84.2%,#5fc162 85.8%,#48b955 87.5%,#44b35f 89.2%,#49b074 90.8%,#4cad83 92.5%,#4eac8b 94.2%,#4eac8b 95.8%,#4cad83 97.5%,#49b074 99.2%)"></div>
<div style="left:0;top:171.22px;width:251px;height:4.41px;background:linear-gradient(90deg,#ef5a24 0.8%,#f05f23 2.5%,#f16a23 4.2%,#f37c21 5.8%,#f5941f 7.5%,#f7ac1e 9.2%,#f7c01d 10.8%,#f7d61d 12.5%,#f4eb21 14.2%,#d7e54b 15.8%,#b9df76 17.5%,#95d480 19.2%,#6bc568 20.8%,#42b751 22.5%,#4cae81 24.2%,#57a6b2 25.8%,#629edd 27.5%,#6791d7 29.2%,#6c85d2 30.8%,#6f7ccd 32.5%,#7176ca 34.2%,#7273c9 35.8%,#7273c9 37.5%,#7176ca 39.2%,#6f7ccd 40.8%,#6c84d1 42.5%,#688ed6 44.2%,#639bdc 45.8%,#5ba3c1 47.5%,#51aa98 49.2%,#47b16c 50.8%,#4cba57 52.5%,#6dc66a 54.2%,#8dd27c 55.8%,#abdc8b 57.5%,#bfe06e 59.2%,#d0e455 60.8%,#dee740 62.5%,#e9e930 64.2%,#f1eb25 65.8%,#f5eb20 67.5%,#f5ec1f 69.2%,#f1eb24 70.8%,#ebe92e 72.5%,#e1e73c 74.2%,#d5e54e 75.8%,#c6e263 77.5%,#b6df7a 79.2%,#a3da88 80.8%,#8bd17a 82.5%,#73c86d 84.2%,#5dc060 85.8%,#48b955 87.5%,#43b45c 89.2%,#47b16f 90.8%,#4aaf7b 92.5%,#4cae82 94.2%,#4cae81 95.8%,#4aaf79 97.5%,#46b269 99.2%)"></div>
<div style="left:0;top:167.42px;width:251px;height:4.41px;background:linear-gradient(90deg,#f27821 0.8%,#f37e21 2.5%,#f48920 4.2%,#f69b1f 5.8%,#f7ac1e 7.5%,#f7bc1d 9.2%,#f7ce1d 10.8%,#f7e31c 12.5%,#e8e933 14.2%,#cde359 15.8%,#b1dd82 17.5%,#8dd27c 19.2%,#66c466 20.8%,#40b650 22.5%,#4bae80 24.2%,#56a6ad 25.8%,#609fd5 27.5%,#6694d9 29.2%,#6a89d4 30.8%,#6d81d0 32.5%,#6f7bcd 34.2%,#7178cb 35.8%,#7178cb 37.5%,#707acc 39.2%,#6e7fce 40.8%,#6b86d2 42.5%,#688fd6 44.2%,#649adc 45.8%,#5da2c7 47.5%,#54a8a2 49.2%,#4aaf7b 50.8%,#41b652 52.5%,#5cc060 54.2%,#79ca70 55.8%,#94d480 57.5%,#acdd88 59.2%,#bce071 60.8%,#cae35e 62.5%,#d4e54f 64.2%,#dbe644 65.8%,#dfe73e 67.5%,#e0e73d 69.2%,#dee740 70.8%,#d9e648 72.5%,#d1e454 74.2%,#c6e263 75.8%,#badf75 77.5%,#acdc89 79.2%,#99d682 80.8%,#84ce77 82.5%,#70c76b 84.2%,#5dc060 85.8%,#4bba56 87.5%,#41b554 89.2%,#45b363 90.8%,#47b16d 92.5%,#48b071 94.2%,#47b16f 95.8%,#45b266 97.5%,#42b556 99.2%)"></div>
<div style="left:0;top:163.62px;width:251px;height:4.41px;background:linear-gradient(90deg,#f69b1f 0.8%,#f7a21e 2.5%,#f7aa1e 4.2%,#f7b31e 5.8%,#f7bf1d 7.5%,#f7ce1d 9.2%,#f7df1c 10.8%,#f0eb26 12.5%,#dae646 14.2%,#c2e169 15.8%,#a8db8b 17.5%,#85cf77 19.2%,#62c263 20.8%,#40b650 22.5%,#4aaf7b 24.2%,#54a8a4 25.8%,#5da2c9 27.5%,#649adc 29.2%,#6790d7 30.8%,#6a88d3 32.5%,#6c83d0 34.2%,#6e80cf 35.8%,#6e7fce 37.5%,#6d80cf 39.2%,#6c84d1 40.8%,#6a8ad4 42.5%,#6791d8 44.2%,#639adc 45.8%,#5da1cb 47.5%,#56a7ab 49.2%,#4eac89 50.8%,#45b266 52.5%,#49b955 54.2%,#63c264 55.8%,#7bcb71 57.5%,#91d37e 59.2%,#a4da89 60.8%,#b2de80 62.5%,#bce072 64.2%,#c3e168 65.8%,#c7e262 67.5%,#c8e260 69.2%,#c7e261 70.8%,#c4e167 72.5%,#bee06f 74.2%,#b6de7b 75.8%,#acdc89 77.5%,#9ed885 79.2%,#8ed27c 80.8%,#7ecc73 82.5%,#6ec66a 84.2%,#5fc161 85.8%,#51bc5a 87.5%,#46b853 89.2%,#41b653 90.8%,#42b459 92.5%,#43b45a 94.2%,#42b556 95.8%,#43b751 97.5%,#4ebb58 99.2%)"></div>
<div style="left:0;top:159.81px;width:251px;height:4.41px;background:linear-gradient(90deg,#f7b51e 0.8%,#f7ba1d 2.5%,#f7c11d 4.2%,#f7ca1d 5.8%,#f7d51d 7.5%,#f7e21c 9.2%,#f1eb25 10.8%,#dfe73f 12.5%,#cbe35c 14.2%,#b6de7b 15.8%,#9cd784 17.5%,#7ecc73 19.2%,#60c162 20.8%,#42b751 22.5%,#48b073 24.2%,#51aa97 25.8%,#59a5b7 27.5%,#5fa0d4 29.2%,#6499db 30.8%,#6792d8 32.5%,#698dd5 34.2%,#6a89d4 35.8%,#6a88d3 37.5%,#6a89d3 39.2%,#698bd5 40.8%,#688fd7 42.5%,#6595da 44.2%,#639cdd 45.8%,#5ea1cc 47.5%,#58a5b2 49.2%,#51aa97 50.8%,#4aaf7b 52.5%,#43b45e 54.2%,#4bba56 55.8%,#5fc161 57.5%,#71c86c 59.2%,#82ce75 60.8%,#91d37e 62.5%,#9dd785 64.2%,#a6db8a 65.8%,#acdc8a 67.5%,#aedd86 69.2%,#aedd86 70.8%,#acdc89 72.5%,#a8db8b 74.2%,#a1d987 75.8%,#98d682 77.5%,#8ed27c 79.2%,#83ce76 80.8%,#78ca6f 82.5%,#6dc669 84.2%,#62c263 85.8%,#5abf5e 87.5%,#53bd5b 89.2%,#4ebb58 90.8%,#4cba57 92.5%,#4ebb58 94.2%,#52bd5a 95.8%,#5abf5f 97.5%,#66c466 99.2%)"></div>
<div style="left:0;top:156.00px;width:251px;height:4.41px;background:linear-gradient(90deg,#f7cd1d 0.8%,#f7d31d 2.5%,#f7da1d 4.2%,#f7e21c 5.8%,#f6ec1d 7.5%,#eae930 9.2%,#dbe644 10.8%,#cce35b 12.5%,#bbdf74 14.2%,#a9dc8b 15.8%,#90d37d 17.5%,#77ca6f 19.2%,#5dc161 20.8%,#45b853 22.5%,#46b269 24.2%,#4dad87 25.8%,#54a8a2 27.5%,#59a4ba 29.2%,#5ea1cf 30.8%,#629dde 32.5%,#6498db 34.2%,#6695d9 35.8%,#6693d9 37.5%,#6693d8 39.2%,#6694d9 40.8%,#6596da 42.5%,#649adc 44.2%,#619edb 45.8%,#5ea1cb 47.5%,#59a4b9 49.2%,#54a8a5 50.8%,#4fab90 52.5%,#4aaf7a 54.2%,#45b364 55.8%,#41b650 57.5%,#50bc59 59.2%,#5dc161 60.8%,#6ac568 62.5%,#74c96e 64.2%,#7dcc72 65.8%,#83ce76 67.5%,#88d079 69.2%,#8ad17a 70.8%,#8bd17a 72.5%,#89d07a 74.2%,#86cf78 75.8%,#82ce76 77.5%,#7dcc73 79.2%,#78ca70 80.8%,#72c86c 82.5%,#6dc669 84.2%,#68c466 85.8%,#64c364 87.5%,#62c263 89.2%,#61c263 90.8%,#63c264 92.5%,#67c466 94.2%,#6dc669 95.8%,#76c96e 97.5%,#81cd75 99.2%)"></div>
<div style="left:0;top:152.20px;width:251px;height:4.41px;background:linear-gradient(90deg,#f7e71c 0.8%,#f6ec1d 2.5%,#eeea29 4.2%,#e5e836 5.8%,#dbe644 7.5%,#d0e454 9.2%,#c4e166 10.8%,#b8df78 12.5%,#aadc8c 14.2%,#97d581 15.8%,#83ce76 17.5%,#70c76b 19.2%,#5cc060 20.8%,#49b955 22.5%,#43b45c 24.2%,#49b074 25.8%,#4eac89 27.5%,#52a99d 29.2%,#57a6af 30.8%,#5aa3be 32.5%,#5da1ca 34.2%,#5fa0d3 35.8%,#619fda 37.5%,#629ede 39.2%,#629ede 40.8%,#629edd 42.5%,#619fd9 44.2%,#5fa0d2 45.8%,#5da2c9 47.5%,#5aa3bf 49.2%,#58a5b2 50.8%,#54a8a5 52.5%,#51aa96 54.2%,#4dad88 55.8%,#4aaf79 57.5%,#46b26a 59.2%,#43b45c 60.8%,#41b650 62.5%,#4ab955 64.2%,#51bc5a 65.8%,#58bf5e 67.5%,#5ec161 69.2%,#63c264 70.8%,#66c466 72.5%,#69c567 74.2%,#6bc568 75.8%,#6cc669 77.5%,#6cc669 79.2%,#6dc669 80.8%,#6dc669 82.5%,#6dc66a 84.2%,#6ec76a 85.8%,#70c76b 87.5%,#73c86d 89.2%,#76ca6f 90.8%,#7ccb72 92.5%,#82ce75 94.2%,#8ad17a 95.8%,#94d480 97.5%,#a0d886 99.2%)"></div>
<div style="left:0;top:148.40px;width:251px;height:4.41px;background:linear-gradient(90deg,#e0e73d 0.8%,#d9e648 2.5%,#d1e454 4.2%,#c8e260 5.8%,#bfe06d 7.5%,#b6df7a 9.2%,#addd88 10.8%,#a0d987 12.5%,#93d47f 14.2%,#85cf77 15.8%,#77ca6f 17.5%,#69c567 19.2%,#5cc060 20.8%,#4ebb58 22.5%,#41b651 24.2%,#44b35f 25.8%,#47b16f 27.5%,#4bae7e 29.2%,#4eac8c 30.8%,#51aa98 32.5%,#54a8a4 34.2%,#56a6ad 35.8%,#58a5b6 37.5%,#5aa4bc 39.2%,#5ba3c2 40.8%,#5ca2c5 42.5%,#5ca2c7 44.2%,#5da2c7 45.8%,#5ca2c6 47.5%,#5ca3c3 49.2%,#5ba3bf 50.8%,#59a4ba 52.5%,#58a5b3 54.2%,#56a6ac 55.8%,#54a8a4 57.5%,#52a99b 59.2%,#50ab91 60.8%,#4dad88 62.5%,#4bae7e 64.2%,#49b074 65.8%,#46b26b 67.5%,#44b361 69.2%,#42b558 70.8%,#41b651 72.5%,#48b954 74.2%,#4ebb58 75.8%,#55bd5c 77.5%,#5bc05f 79.2%,#62c263 80.8%,#68c467 82.5%,#6fc76b 84.2%,#76c96f 85.8%,#7dcc73 87.5%,#85cf77 89.2%,#8dd27c 90.8%,#96d581 92.5%,#a0d886 94.2%,#aadc8c 95.8%,#b2de81 97.5%,#badf75 99.2%)"></div>
<div style="left:0;top:144.59px;width:251px;height:4.41px;background:linear-gradient(90deg,#c4e166 0.8%,#bbe073 2.5%,#b3de7f 4.2%,#abdc8b 5.8%,#a1d987 7.5%,#97d581 9.2%,#8dd27c 10.8%,#84ce77 12.5%,#7ccb72 14.2%,#73c86d 15.8%,#6bc568 17.5%,#63c364 19.2%,#5bc060 20.8%,#54bd5b 22.5%,#4cba57 24.2%,#45b853 25.8%,#41b553 27.5%,#43b45d 29.2%,#46b267 30.8%,#48b072 32.5%,#4aaf7c 34.2%,#4dad86 35.8%,#4fab90 37.5%,#52aa99 39.2%,#54a8a3 40.8%,#56a6ac 42.5%,#58a5b4 44.2%,#5aa4bb 45.8%,#5ba3c2 47.5%,#5da2c7 49.2%,#5ea1cc 50.8%,#5ea1ce 52.5%,#5fa0d0 54.2%,#5fa0d0 55.8%,#5ea1ce 57.5%,#5da1cb 59.2%,#5ca2c6 60.8%,#5ba3c0 62.5%,#59a4b9 64.2%,#57a6b0 65.8%,#55a7a6 67.5%,#52a99a 69.2%,#4fac8e 70.8%,#4cae80 72.5%,#48b072 74.2%,#44b363 75.8%,#41b653 77.5%,#4aba56 79.2%,#57be5d 80.8%,#64c364 82.5%,#71c86c 84.2%,#7ecc73 85.8%,#8bd17b 87.5%,#98d682 89.2%,#a5da89 90.8%,#b0dd84 92.5%,#b9df77 94.2%,#c1e16a 95.8%,#cae35e 97.5%,#d2e452 99.2%)"></div>
<div style="left:0;top:140.78px;width:251px;height:4.41px;background:linear-gradient(90deg,#a7db8a 0.8%,#9ad683 2.5%,#8ed27c 4.2%,#84ce76 5.8%,#7bcb71 7.5%,#74c96d 9.2%,#6ec66a 10.8%,#69c567 12.5%,#65c365 14.2%,#62c263 15.8%,#60c162 17.5%,#5ec161 19.2%,#5cc060 20.8%,#5abf5f 22.5%,#58bf5e 24.2%,#55be5c 25.8%,#52bd5a 27.5%,#4ebb58 29.2%,#4ab955 30.8%,#44b752 32.5%,#41b554 34.2%,#43b45e 35.8%,#46b26a 37.5%,#49b076 39.2%,#4cad84 40.8%,#50ab92 42.5%,#53a8a1 44.2%,#57a6af 45.8%,#5aa4bd 47.5%,#5da1cb 49.2%,#609fd7 50.8%,#639cdd 52.5%,#6499dc 54.2%,#6596da 55.8%,#6695d9 57.5%,#6694d9 59.2%,#6694d9 60.8%,#6695d9 62.5%,#6597da 64.2%,#6499dc 65.8%,#629dde 67.5%,#5fa0d3 69.2%,#5ca3c3 70.8%,#57a6b1 72.5%,#52a99d 74.2%,#4dad87 75.8%,#48b170 77.5%,#42b558 79.2%,#4dbb57 80.8%,#60c262 82.5%,#74c86d 84.2%,#87cf78 85.8%,#9ad683 87.5%,#abdc8a 89.2%,#b8df78 90.8%,#c4e167 92.5%,#cfe457 94.2%,#d9e648 95.8%,#e2e83b 97.5%,#eae92f 99.2%)"></div>
<div style="left:0;top:136.98px;width:251px;height:4.41px;background:linear-gradient(90deg,#83ce76 0.8%,#74c96d 2.5%,#68c467 4.2%,#5ec161 5.8%,#57be5d 7.5%,#52bc5a 9.2%,#4fbc59 10.8%,#4fbb58 12.5%,#4fbc59 14.2%,#52bc5a 15.8%,#55bd5c 17.5%,#58bf5e 19.2%,#5cc060 20.8%,#60c262 22.5%,#63c364 24.2%,#66c365 25.8%,#67c466 27.5%,#66c466 29.2%,#64c364 30.8%,#60c262 32.5%,#5abf5f 34.2%,#52bd5a 35.8%,#48b955 37.5%,#41b554 39.2%,#45b266 40.8%,#4aaf79 42.5%,#4fac8e 44.2%,#54a8a3 45.8%,#59a4b9 47.5%,#5ea1ce 49.2%,#639cdd 50.8%,#6596da 52.5%,#688fd7 54.2%,#6a8ad4 55.8%,#6b86d2 57.5%,#6c83d1 59.2%,#6d81d0 60.8%,#6d81d0 62.5%,#6d82d0 64.2%,#6c85d2 65.8%,#6a89d4 67.5%,#688fd6 69.2%,#6595da 70.8%,#629dde 72.5%,#5ca2c6 74.2%,#56a7aa 75.8%,#4eac8c 77.5%,#47b16c 79.2%,#44b752 80.8%,#5dc060 82.5%,#76c96f 84.2%,#8fd27d 85.8%,#a7db8b 87.5%,#b9df76 89.2%,#c9e25f 90.8%,#d7e54a 92.5%,#e4e837 94.2%,#f0ea27 95.8%,#f7ea1c 97.5%,#f7e21c 99.2%)"></div>
<div style="left:0;top:133.18px;width:251px;height:4.41px;background:linear-gradient(90deg,#60c262 0.8%,#51bc59 2.5%,#44b852 4.2%,#42b556 5.8%,#43b45e 7.5%,#44b361 9.2%,#44b361 10.8%,#43b45d 12.5%,#41b556 14.2%,#43b752 15.8%,#4bba56 17.5%,#54bd5b 19.2%,#5dc061 20.8%,#66c466 22.5%,#6ec76a 24.2%,#75c96e 25.8%,#7acb71 27.5%,#7dcc72 29.2%,#7dcc73 30.8%,#7bcb71 32.5%,#75c96e 34.2%,#6dc66a 35.8%,#62c263 37.5%,#55bd5c 39.2%,#45b853 40.8%,#44b362 42.5%,#4baf7c 44.2%,#51aa98 45.8%,#58a5b4 47.5%,#5fa0d1 49.2%,#6499db 50.8%,#688fd7 52.5%,#6b87d2 54.2%,#6e7fce 55.8%,#7079cb 57.5%,#7274c9 59.2%,#7371c7 60.8%,#746fc7 62.5%,#7470c7 64.2%,#7372c8 65.8%,#7176ca 67.5%,#6f7ccd 69.2%,#6c84d1 70.8%,#688ed6 72.5%,#6499db 74.2%,#5da1cb 75.8%,#55a7a6 77.5%,#4bae7f 79.2%,#42b556 80.8%,#5abf5f 82.5%,#79ca70 84.2%,#97d581 85.8%,#b2de81 87.5%,#c6e263 89.2%,#d9e648 90.8%,#e9e930 92.5%,#f7eb1c 94.2%,#f7df1c 95.8%,#f7d61d 97.5%,#f7ce1d 99.2%)"></div>
<div style="left:0;top:129.37px;width:251px;height:4.41px;background:linear-gradient(90deg,#42b751 0.8%,#45b364 2.5%,#49b075 4.2%,#4cae80 5.8%,#4dad86 7.5%,#4dad86 9.2%,#4cae82 10.8%,#4aaf7a 12.5%,#47b16d 14.2%,#43b45e 15.8%,#42b751 17.5%,#50bc59 19.2%,#5ec161 20.8%,#6cc669 22.5%,#78ca70 24.2%,#83ce76 25.8%,#8bd17b 27.5%,#91d37e 29.2%,#93d47f 30.8%,#92d47f 32.5%,#8ed27c 34.2%,#86cf77 35.8%,#7acb71 37.5%,#6ac568 39.2%,#58bf5d 40.8%,#42b751 42.5%,#47b16c 44.2%,#4fac8e 45.8%,#57a6b0 47.5%,#5fa0d3 49.2%,#6595da 50.8%,#6a8ad4 52.5%,#6e7fce 54.2%,#7275c9 55.8%,#756dc5 57.5%,#7766c1 59.2%,#7960bd 60.8%,#7a5ebb 62.5%,#7a5dbb 64.2%,#7960bd 65.8%,#7865c0 67.5%,#756cc5 69.2%,#7275c9 70.8%,#6e80cf 72.5%,#698cd5 74.2%,#639bdc 75.8%,#5aa4bd 77.5%,#4fab90 79.2%,#44b361 80.8%,#58be5d 82.5%,#7ccb72 84.2%,#9fd886 85.8%,#badf74 87.5%,#d2e452 89.2%,#e7e933 90.8%,#f7e91c 92.5%,#f7da1d 94.2%,#f7cd1d 95.8%,#f7c31d 97.5%,#f7bc1d 99.2%)"></div>
<div style="left:0;top:125.57px;width:251px;height:4.41px;background:linear-gradient(90deg,#48b170 0.8%,#4dad88 2.5%,#52aa99 4.2%,#54a8a4 5.8%,#55a7a8 7.5%,#55a7a6 9.2%,#53a99f 10.8%,#50ab92 12.5%,#4cae81 14.2%,#47b16d 15.8%,#42b557 17.5%,#4dbb57 19.2%,#5fc161 20.8%,#70c76b 22.5%,#81cd75 24.2%,#8fd27d 25.8%,#9ad683 27.5%,#a2d988 29.2%,#a7db8a 30.8%,#a7db8a 32.5%,#a3da88 34.2%,#9bd683 35.8%,#8ed27c 37.5%,#7dcc72 39.2%,#68c467 40.8%,#50bc59 42.5%,#43b45e 44.2%,#4dad85 45.8%,#56a6ad 47.5%,#609fd5 49.2%,#6693d8 50.8%,#6c85d1 52.5%,#7178cb 54.2%,#756cc5 55.8%,#7961be 57.5%,#7b58b7 59.2%,#7d52b3 60.8%,#7e4eb0 62.5%,#7f4db0 64.2%,#7e4fb1 65.8%,#7c54b5 67.5%,#7a5dbb 69.2%,#7768c2 70.8%,#7274c9 72.5%,#6d82d0 74.2%,#6792d8 75.8%,#5fa0d0 77.5%,#53a99e 79.2%,#46b269 80.8%,#56be5c 82.5%,#7ecc73 84.2%,#a5da89 85.8%,#c2e169 87.5%,#dce644 89.2%,#f3eb22 90.8%,#f7dc1c 92.5%,#f7cc1d 94.2%,#f7be1d 95.8%,#f7b41e 97.5%,#f7ad1e 99.2%)"></div>
<div style="left:0;top:121.76px;width:251px;height:4.41px;background:linear-gradient(90deg,#4eac8c 0.8%,#54a8a5 2.5%,#59a5b7 4.2%,#5ba3c1 5.8%,#5ca2c4 7.5%,#5ba3c0 9.2%,#58a5b6 10.8%,#55a7a6 12.5%,#50ab92 14.2%,#4aaf79 15.8%,#44b45f 17.5%,#4aba56 19.2%,#60c162 20.8%,#74c96e 22.5%,#88d079 24.2%,#99d682 25.8%,#a6db8a 27.5%,#afdd85 29.2%,#b3de7f 30.8%,#b4de7d 32.5%,#b1de81 34.2%,#abdc8a 35.8%,#9ed885 37.5%,#8cd17b 39.2%,#75c96e 40.8%,#5bc05f 42.5%,#41b553 44.2%,#4bae7e 45.8%,#56a7aa 47.5%,#609fd7 49.2%,#6790d7 50.8%,#6d81cf 52.5%,#7372c8 54.2%,#7864c0 55.8%,#7c58b7 57.5%,#7f4db0 59.2%,#8146ab 60.8%,#8241a7 62.5%,#8340a6 64.2%,#8242a8 65.8%,#8047ac 67.5%,#7e50b2 69.2%,#7a5bba 70.8%,#766ac4 72.5%,#7079cc 74.2%,#6a8ad4 75.8%,#629dde 77.5%,#55a7a9 79.2%,#48b170 80.8%,#54bd5b 82.5%,#80cd74 84.2%,#aadc8b 85.8%,#c8e260 87.5%,#e4e838 89.2%,#f7e61c 90.8%,#f7d21d 92.5%,#f7c01d 94.2%,#f7b21e 95.8%,#f7a71e 97.5%,#f69c1f 99.2%)"></div>
<div style="left:0;top:117.95px;width:251px;height:4.41px;background:linear-gradient(90deg,#53a8a1 0.8%,#59a4ba 2.5%,#5ea1cc 4.2%,#609fd6 5.8%,#619fd8 7.5%,#5fa0d3 9.2%,#5ca2c7 10.8%,#58a5b5 12.5%,#53a99e 14.2%,#4cad82 15.8%,#45b364 17.5%,#48b955 19.2%,#60c262 20.8%,#77ca6f 22.5%,#8dd27c 24.2%,#a0d886 25.8%,#aedd86 27.5%,#b6df7a 29.2%,#bce072 30.8%,#bde070 32.5%,#bbdf74 34.2%,#b4de7d 35.8%,#aadc8c 37.5%,#97d581 39.2%,#7fcd74 40.8%,#63c364 42.5%,#44b752 44.2%,#4aaf78 45.8%,#55a7a8 47.5%,#619fd8 49.2%,#688fd6 50.8%,#6e7ece 52.5%,#746ec6 54.2%,#795ebc 55.8%,#7e50b2 57.5%,#8145aa 59.2%,#843da4 60.8%,#8538a1 62.5%,#8636a0 64.2%,#8538a1 65.8%,#833da5 67.5%,#8146ab 69.2%,#7d53b4 70.8%,#7862be 72.5%,#7373c9 74.2%,#6c85d2 75.8%,#6499dc 77.5%,#57a6b1 79.2%,#49b075 80.8%,#53bd5b 82.5%,#81cd75 84.2%,#addd87 85.8%,#cde35a 87.5%,#eae92f 89.2%,#f7df1c 90.8%,#f7ca1d 92.5%,#f7b71d 94.2%,#f7a91e 95.8%,#f6981f 97.5%,#f48b20 99.2%)"></div>
<div style="left:0;top:114.15px;width:251px;height:4.41px;background:linear-gradient(90deg,#56a6ae 0.8%,#5da2c8 2.5%,#619fd9 4.2%,#639cdd 5.8%,#639cdd 7.5%,#629ede 9.2%,#5fa0d1 10.8%,#5aa3be 12.5%,#54a8a5 14.2%,#4dad88 15.8%,#46b268 17.5%,#47b954 19.2%,#61c262 20.8%,#79ca70 22.5%,#90d37d 24.2%,#a4da89 25.8%,#b2de80 27.5%,#bbe073 29.2%,#c1e16b 30.8%,#c3e168 32.5%,#c0e16c 34.2%,#badf75 35.8%,#afdd84 37.5%,#9ed885 39.2%,#85cf77 40.8%,#68c467 42.5%,#48b954 44.2%,#49b075 45.8%,#55a7a7 47.5%,#619fd9 49.2%,#688dd6 50.8%,#6f7ccd 52.5%,#756cc5 54.2%,#7b5bb9 55.8%,#7f4caf 57.5%,#8340a7 59.2%,#8537a1 60.8%,#87329d 62.5%,#87309b 64.2%,#87329d 65.8%,#8537a0 67.5%,#8240a7 69.2%,#7f4db0 70.8%,#7a5dbb 72.5%,#746fc7 74.2%,#6d82d0 75.8%,#6596da 77.5%,#59a5b6 79.2%,#49af78 80.8%,#52bd5a 82.5%,#82ce75 84.2%,#afdd85 85.8%,#cfe456 87.5%,#eeea2a 89.2%,#f7db1c 90.8%,#f7c51d 92.5%,#f7b21e 94.2%,#f7a11e 95.8%,#f58d20 97.5%,#f38121 99.2%)"></div>
<div style="left:0;top:110.34px;width:251px;height:4.41px;background:linear-gradient(90deg,#57a5b2 0.8%,#5ea1cc 2.5%,#629ede 4.2%,#639bdc 5.8%,#639adc 7.5%,#639ddd 9.2%,#60a0d4 10.8%,#5ba3c0 12.5%,#55a7a7 14.2%,#4eac8a 15.8%,#46b269 17.5%,#47b854 19.2%,#61c263 20.8%,#7acb71 22.5%,#91d37e 24.2%,#a6da8a 25.8%,#b3de7e 27.5%,#bde071 29.2%,#c2e168 30.8%,#c4e166 32.5%,#c2e169 34.2%,#bce072 35.8%,#b1de81 37.5%,#a0d886 39.2%,#87d078 40.8%,#6ac568 42.5%,#49b955 44.2%,#49b074 45.8%,#55a7a6 47.5%,#619fd9 49.2%,#688dd6 50.8%,#6f7bcd 52.5%,#766bc4 54.2%,#7b5ab8 55.8%,#7f4bae 57.5%,#833fa6 59.2%,#86369f 60.8%,#87309b 62.5%,#882e9a 64.2%,#87309b 65.8%,#86359f 67.5%,#833ea6 69.2%,#7f4bae 70.8%,#7a5bba 72.5%,#746ec6 74.2%,#6d81cf 75.8%,#6596da 77.5%,#59a4b8 79.2%,#4aaf79 80.8%,#52bc5a 82.5%,#82ce76 84.2%,#b0dd84 85.8%,#d0e454 87.5%,#efea28 89.2%,#f7da1d 90.8%,#f7c31d 92.5%,#f7b01e 94.2%,#f69e1f 95.8%,#f48a20 97.5%,#f37d21 99.2%)"></div>
<div style="left:0;top:106.54px;width:251px;height:4.41px;background:linear-gradient(90deg,#56a6ae 0.8%,#5da2c8 2.5%,#619fd9 4.2%,#639cdd 5.8%,#639cdd 7.5%,#629ede 9.2%,#5fa0d1 10.8%,#5aa3be 12.5%,#54a8a5 14.2%,#4dad88 15.8%,#46b268 17.5%,#47b954 19.2%,#61c262 20.8%,#79ca70 22.5%,#90d37d 24.2%,#a4da89 25.8%,#b2de80 27.5%,#bbe073 29.2%,#c1e16b 30.8%,#c3e168 32.5%,#c0e16c 34.2%,#badf75 35.8%,#afdd84 37.5%,#9ed885 39.2%,#85cf77 40.8%,#68c467 42.5%,#48b954 44.2%,#49b075 45.8%,#55a7a7 47.5%,#619fd9 49.2%,#688dd6 50.8%,#6f7ccd 52.5%,#756cc5 54.2%,#7b5bb9 55.8%,#7f4caf 57.5%,#8340a7 59.2%,#8537a1 60.8%,#87329d 62.5%,#87309b 64.2%,#87329d 65.8%,#8537a0 67.5%,#8240a7 69.2%,#7f4db0 70.8%,#7a5dbb 72.5%,#746fc7 74.2%,#6d82d0 75.8%,#6596da 77.5%,#59a5b6 79.2%,#49af78 80.8%,#52bd5a 82.5%,#82ce75 84.2%,#afdd85 85.8%,#cfe456 87.5%,#eeea2a 89.2%,#f7db1c 90.8%,#f7c51d 92.5%,#f7b21e 94.2%,#f7a11e 95.8%,#f58d20 97.5%,#f38121 99.2%)"></div>
<div style="left:0;top:102.73px;width:251px;height:4.41px;background:linear-gradient(90deg,#53a8a1 0.8%,#59a4ba 2.5%,#5ea1cc 4.2%,#609fd6 5.8%,#619fd8 7.5%,#5fa0d3 9.2%,#5ca2c7 10.8%,#58a5b5 12.5%,#53a99e 14.2%,#4cad82 15.8%,#45b364 17.5%,#48b955 19.2%,#60c262 20.8%,#77ca6f 22.5%,#8dd27c 24.2%,#a0d886 25.8%,#aedd86 27.5%,#b6df7a 29.2%,#bce072 30.8%,#bde070 32.5%,#bbdf74 34.2%,#b4de7d 35.8%,#aadc8c 37.5%,#97d581 39.2%,#7fcd74 40.8%,#63c364 42.5%,#44b752 44.2%,#4aaf78 45.8%,#55a7a8 47.5%,#619fd8 49.2%,#688fd6 50.8%,#6e7ece 52.5%,#746ec6 54.2%,#795ebc 55.8%,#7e50b2 57.5%,#8145aa 59.2%,#843da4 60.8%,#8538a1 62.5%,#8636a0 64.2%,#8538a1 65.8%,#833da5 67.5%,#8146ab 69.2%,#7d53b4 70.8%,#7862be 72.5%,#7373c9 74.2%,#6c85d2 75.8%,#6499dc 77.5%,#57a6b1 79.2%,#49b075 80.8%,#53bd5b 82.5%,#81cd75 84.2%,#addd87 85.8%,#cde35a 87.5%,#eae92f 89.2%,#f7df1c 90.8%,#f7ca1d 92.5%,#f7b71d 94.2%,#f7a91e 95.8%,#f6981f 97.5%,#f48b20 99.2%)"></div>
<div style="left:0;top:98.93px;width:251px;height:4.41px;background:linear-gradient(90deg,#4eac8c 0.8%,#54a8a5 2.5%,#59a5b7 4.2%,#5ba3c1 5.8%,#5ca2c4 7.5%,#5ba3c0 9.2%,#58a5b6 10.8%,#55a7a6 12.5%,#50ab92 14.2%,#4aaf79 15.8%,#44b45f 17.5%,#4aba56 19.2%,#60c162 20.8%,#74c96e 22.5%,#88d079 24.2%,#99d682 25.8%,#a6db8a 27.5%,#afdd85 29.2%,#b3de7f 30.8%,#b4de7d 32.5%,#b1de81 34.2%,#abdc8a 35.8%,#9ed885 37.5%,#8cd17b 39.2%,#75c96e 40.8%,#5bc05f 42.5%,#41b553 44.2%,#4bae7e 45.8%,#56a7aa 47.5%,#609fd7 49.2%,#6790d7 50.8%,#6d81cf 52.5%,#7372c8 54.2%,#7864c0 55.8%,#7c58b7 57.5%,#7f4db0 59.2%,#8146ab 60.8%,#8241a7 62.5%,#8340a6 64.2%,#8242a8 65.8%,#8047ac 67.5%,#7e50b2 69.2%,#7a5bba 70.8%,#766ac4 72.5%,#7079cc 74.2%,#6a8ad4 75.8%,#629dde 77.5%,#55a7a9 79.2%,#48b170 80.8%,#54bd5b 82.5%,#80cd74 84.2%,#aadc8b 85.8%,#c8e260 87.5%,#e4e838 89.2%,#f7e61c 90.8%,#f7d21d 92.5%,#f7c01d 94.2%,#f7b21e 95.8%,#f7a71e 97.5%,#f69c1f 99.2%)"></div>
<div style="left:0;top:95.12px;width:251px;height:4.41px;background:linear-gradient(90deg,#48b170 0.8%,#4dad88 2.5%,#52aa99 4.2%,#54a8a4 5.8%,#55a7a8 7.5%,#55a7a6 9.2%,#53a99f 10.8%,#50ab92 12.5%,#4cae81 14.2%,#47b16d 15.8%,#42b557 17.5%,#4dbb57 19.2%,#5fc161 20.8%,#70c76b 22.5%,#81cd75 24.2%,#8fd27d 25.8%,#9ad683 27.5%,#a2d988 29.2%,#a7db8a 30.8%,#a7db8a 32.5%,#a3da88 34.2%,#9bd683 35.8%,#8ed27c 37.5%,#7dcc72 39.2%,#68c467 40.8%,#50bc59 42.5%,#43b45e 44.2%,#4dad85 45.8%,#56a6ad 47.5%,#609fd5 49.2%,#6693d8 50.8%,#6c85d1 52.5%,#7178cb 54.2%,#756cc5 55.8%,#7961be 57.5%,#7b58b7 59.2%,#7d52b3 60.8%,#7e4eb0 62.5%,#7f4db0 64.2%,#7e4fb1 65.8%,#7c54b5 67.5%,#7a5dbb 69.2%,#7768c2 70.8%,#7274c9 72.5%,#6d82d0 74.2%,#6792d8 75.8%,#5fa0d0 77.5%,#53a99e 79.2%,#46b269 80.8%,#56be5c 82.5%,#7ecc73 84.2%,#a5da89 85.8%,#c2e169 87.5%,#dce644 89.2%,#f3eb22 90.8%,#f7dc1c 92.5%,#f7cc1d 94.2%,#f7be1d 95.8%,#f7b41e 97.5%,#f7ad1e 99.2%)"></div>
<div style="left:0;top:91.32px;width:251px;height:4.41px;background:linear-gradient(90deg,#42b751 0.8%,#45b364 2.5%,#49b075 4.2%,#4cae80 5.8%,#4dad86 7.5%,#4dad86 9.2%,#4cae82 10.8%,#4aaf7a 12.5%,#47b16d 14.2%,#43b45e 15.8%,#42b751 17.5%,#50bc59 19.2%,#5ec161 20.8%,#6cc669 22.5%,#78ca70 24.2%,#83ce76 25.8%,#8bd17b 27.5%,#91d37e 29.2%,#93d47f 30.8%,#92d47f 32.5%,#8ed27c 34.2%,#86cf77 35.8%,#7acb71 37.5%,#6ac568 39.2%,#58bf5d 40.8%,#42b751 42.5%,#47b16c 44.2%,#4fac8e 45.8%,#57a6b0 47.5%,#5fa0d3 49.2%,#6595da 50.8%,#6a8ad4 52.5%,#6e7fce 54.2%,#7275c9 55.8%,#756dc5 57.5%,#7766c1 59.2%,#7960bd 60.8%,#7a5ebb 62.5%,#7a5dbb 64.2%,#7960bd 65.8%,#7865c0 67.5%,#756cc5 69.2%,#7275c9 70.8%,#6e80cf 72.5%,#698cd5 74.2%,#639bdc 75.8%,#5aa4bd 77.5%,#4fab90 79.2%,#44b361 80.8%,#58be5d 82.5%,#7ccb72 84.2%,#9fd886 85.8%,#badf74 87.5%,#d2e452 89.2%,#e7e933 90.8%,#f7e91c 92.5%,#f7da1d 94.2%,#f7cd1d 95.8%,#f7c31d 97.5%,#f7bc1d 99.2%)"></div>
<div style="left:0;top:87.52px;width:251px;height:4.41px;background:linear-gradient(90deg,#60c262 0.8%,#51bc59 2.5%,#44b852 4.2%,#42b556 5.8%,#43b45e 7.5%,#44b361 9.2%,#44b361 10.8%,#43b45d 12.5%,#41b556 14.2%,#43b752 15.8%,#4bba56 17.5%,#54bd5b 19.2%,#5dc061 20.8%,#66c466 22.5%,#6ec76a 24.2%,#75c96e 25.8%,#7acb71 27.5%,#7dcc72 29.2%,#7dcc73 30.8%,#7bcb71 32.5%,#75c96e 34.2%,#6dc66a 35.8%,#62c263 37.5%,#55bd5c 39.2%,#45b853 40.8%,#44b362 42.5%,#4baf7c 44.2%,#51aa98 45.8%,#58a5b4 47.5%,#5fa0d1 49.2%,#6499db 50.8%,#688fd7 52.5%,#6b87d2 54.2%,#6e7fce 55.8%,#7079cb 57.5%,#7274c9 59.2%,#7371c7 60.8%,#746fc7 62.5%,#7470c7 64.2%,#7372c8 65.8%,#7176ca 67.5%,#6f7ccd 69.2%,#6c84d1 70.8%,#688ed6 72.5%,#6499db 74.2%,#5da1cb 75.8%,#55a7a6 77.5%,#4bae7f 79.2%,#42b556 80.8%,#5abf5f 82.5%,#79ca70 84.2%,#97d581 85.8%,#b2de81 87.5%,#c6e263 89.2%,#d9e648 90.8%,#e9e930 92.5%,#f7eb1c 94.2%,#f7df1c 95.8%,#f7d61d 97.5%,#f7ce1d 99.2%)"></div>
<div style="left:0;top:83.71px;width:251px;height:4.41px;background:linear-gradient(90deg,#83ce76 0.8%,#74c96d 2.5%,#68c467 4.2%,#5ec161 5.8%,#57be5d 7.5%,#52bc5a 9.2%,#4fbc59 10.8%,#4fbb58 12.5%,#4fbc59 14.2%,#52bc5a 15.8%,#55bd5c 17.5%,#58bf5e 19.2%,#5cc060 20.8%,#60c262 22.5%,#63c364 24.2%,#66c365 25.8%,#67c466 27.5%,#66c466 29.2%,#64c364 30.8%,#60c262 32.5%,#5abf5f 34.2%,#52bd5a 35.8%,#48b955 37.5%,#41b554 39.2%,#45b266 40.8%,#4aaf79 42.5%,#4fac8e 44.2%,#54a8a3 45.8%,#59a4b9 47.5%,#5ea1ce 49.2%,#639cdd 50.8%,#6596da 52.5%,#688fd7 54.2%,#6a8ad4 55.8%,#6b86d2 57.5%,#6c83d1 59.2%,#6d81d0 60.8%,#6d81d0 62.5%,#6d82d0 64.2%,#6c85d2 65.8%,#6a89d4 67.5%,#688fd6 69.2%,#6595da 70.8%,#629dde 72.5%,#5ca2c6 74.2%,#56a7aa 75.8%,#4eac8c 77.5%,#47b16c 79.2%,#44b752 80.8%,#5dc060 82.5%,#76c96f 84.2%,#8fd27d 85.8%,#a7db8b 87.5%,#b9df76 89.2%,#c9e25f 90.8%,#d7e54a 92.5%,#e4e837 94.2%,#f0ea27 95.8%,#f7ea1c 97.5%,#f7e21c 99.2%)"></div>
<div style="left:0;top:79.91px;width:251px;height:4.41px;background:linear-gradient(90deg,#a7db8a 0.8%,#9ad683 2.5%,#8ed27c 4.2%,#84ce76 5.8%,#7bcb71 7.5%,#74c96d 9.2%,#6ec66a 10.8%,#69c567 12.5%,#65c365 14.2%,#62c263 15.8%,#60c162 17.5%,#5ec161 19.2%,#5cc060 20.8%,#5abf5f 22.5%,#58bf5e 24.2%,#55be5c 25.8%,#52bd5a 27.5%,#4ebb58 29.2%,#4ab955 30.8%,#44b752 32.5%,#41b554 34.2%,#43b45e 35.8%,#46b26a 37.5%,#49b076 39.2%,#4cad84 40.8%,#50ab92 42.5%,#53a8a1 44.2%,#57a6af 45.8%,#5aa4bd 47.5%,#5da1cb 49.2%,#609fd7 50.8%,#639cdd 52.5%,#6499dc 54.2%,#6596da 55.8%,#6695d9 57.5%,#6694d9 59.2%,#6694d9 60.8%,#6695d9 62.5%,#6597da 64.2%,#6499dc 65.8%,#629dde 67.5%,#5fa0d3 69.2%,#5ca3c3 70.8%,#57a6b1 72.5%,#52a99d 74.2%,#4dad87 75.8%,#48b170 77.5%,#42b558 79.2%,#4dbb57 80.8%,#60c262 82.5%,#74c86d 84.2%,#87cf78 85.8%,#9ad683 87.5%,#abdc8a 89.2%,#b8df78 90.8%,#c4e167 92.5%,#cfe457 94.2%,#d9e648 95.8%,#e2e83b 97.5%,#eae92f 99.2%)"></div>
<div style="left:0;top:76.10px;width:251px;height:4.41px;background:linear-gradient(90deg,#c4e166 0.8%,#bbe073 2.5%,#b3de7f 4.2%,#abdc8b 5.8%,#a1d987 7.5%,#97d581 9.2%,#8dd27c 10.8%,#84ce77 12.5%,#7ccb72 14.2%,#73c86d 15.8%,#6bc568 17.5%,#63c364 19.2%,#5bc060 20.8%,#54bd5b 22.5%,#4cba57 24.2%,#45b853 25.8%,#41b553 27.5%,#43b45d 29.2%,#46b267 30.8%,#48b072 32.5%,#4aaf7c 34.2%,#4dad86 35.8%,#4fab90 37.5%,#52aa99 39.2%,#54a8a3 40.8%,#56a6ac 42.5%,#58a5b4 44.2%,#5aa4bb 45.8%,#5ba3c2 47.5%,#5da2c7 49.2%,#5ea1cc 50.8%,#5ea1ce 52.5%,#5fa0d0 54.2%,#5fa0d0 55.8%,#5ea1ce 57.5%,#5da1cb 59.2%,#5ca2c6 60.8%,#5ba3c0 62.5%,#59a4b9 64.2%,#57a6b0 65.8%,#55a7a6 67.5%,#52a99a 69.2%,#4fac8e 70.8%,#4cae80 72.5%,#48b072 74.2%,#44b363 75.8%,#41b653 77.5%,#4aba56 79.2%,#57be5d 80.8%,#64c364 82.5%,#71c86c 84.2%,#7ecc73 85.8%,#8bd17b 87.5%,#98d682 89.2%,#a5da89 90.8%,#b0dd84 92.5%,#b9df77 94.2%,#c1e16a 95.8%,#cae35e 97.5%,#d2e452 99.2%)"></div>
<div style="left:0;top:72.30px;width:251px;height:4.41px;background:linear-gradient(90deg,#e0e73d 0.8%,#d9e648 2.5%,#d1e454 4.2%,#c8e260 5.8%,#bfe06d 7.5%,#b6df7a 9.2%,#addd88 10.8%,#a0d987 12.5%,#93d47f 14.2%,#85cf77 15.8%,#77ca6f 17.5%,#69c567 19.2%,#5cc060 20.8%,#4ebb58 22.5%,#41b651 24.2%,#44b35f 25.8%,#47b16f 27.5%,#4bae7e 29.2%,#4eac8c 30.8%,#51aa98 32.5%,#54a8a4 34.2%,#56a6ad 35.8%,#58a5b6 37.5%,#5aa4bc 39.2%,#5ba3c2 40.8%,#5ca2c5 42.5%,#5ca2c7 44.2%,#5da2c7 45.8%,#5ca2c6 47.5%,#5ca3c3 49.2%,#5ba3bf 50.8%,#59a4ba 52.5%,#58a5b3 54.2%,#56a6ac 55.8%,#54a8a4 57.5%,#52a99b 59.2%,#50ab91 60.8%,#4dad88 62.5%,#4bae7e 64.2%,#49b074 65.8%,#46b26b 67.5%,#44b361 69.2%,#42b558 70.8%,#41b651 72.5%,#48b954 74.2%,#4ebb58 75.8%,#55bd5c 77.5%,#5bc05f 79.2%,#62c263 80.8%,#68c467 82.5%,#6fc76b 84.2%,#76c96f 85.8%,#7dcc73 87.5%,#85cf77 89.2%,#8dd27c 90.8%,#96d581 92.5%,#a0d886 94.2%,#aadc8c 95.8%,#b2de81 97.5%,#badf75 99.2%)"></div>
<div style="left:0;top:68.49px;width:251px;height:4.41px;background:linear-gradient(90deg,#f7e71c 0.8%,#f6ec1d 2.5%,#eeea29 4.2%,#e5e836 5.8%,#dbe644 7.5%,#d0e454 9.2%,#c4e166 10.8%,#b8df78 12.5%,#aadc8c 14.2%,#97d581 15.8%,#83ce76 17.5%,#70c76b 19.2%,#5cc060 20.8%,#49b955 22.5%,#43b45c 24.2%,#49b074 25.8%,#4eac89 27.5%,#52a99d 29.2%,#57a6af 30.8%,#5aa3be 32.5%,#5da1ca 34.2%,#5fa0d3 35.8%,#619fda 37.5%,#629ede 39.2%,#629ede 40.8%,#629edd 42.5%,#619fd9 44.2%,#5fa0d2 45.8%,#5da2c9 47.5%,#5aa3bf 49.2%,#58a5b2 50.8%,#54a8a5 52.5%,#51aa96 54.2%,#4dad88 55.8%,#4aaf79 57.5%,#46b26a 59.2%,#43b45c 60.8%,#41b650 62.5%,#4ab955 64.2%,#51bc5a 65.8%,#58bf5e 67.5%,#5ec161 69.2%,#63c264 70.8%,#66c466 72.5%,#69c567 74.2%,#6bc568 75.8%,#6cc669 77.5%,#6cc669 79.2%,#6dc669 80.8%,#6dc669 82.5%,#6dc66a 84.2%,#6ec76a 85.8%,#70c76b 87.5%,#73c86d 89.2%,#76ca6f 90.8%,#7ccb72 92.5%,#82ce75 94.2%,#8ad17a 95.8%,#94d480 97.5%,#a0d886 99.2%)"></div>
<div style="left:0;top:64.69px;width:251px;height:4.41px;background:linear-gradient(90deg,#f7cd1d 0.8%,#f7d31d 2.5%,#f7da1d 4.2%,#f7e21c 5.8%,#f6ec1d 7.5%,#eae930 9.2%,#dbe644 10.8%,#cce35b 12.5%,#bbdf74 14.2%,#a9dc8b 15.8%,#90d37d 17.5%,#77ca6f 19.2%,#5dc161 20.8%,#45b853 22.5%,#46b269 24.2%,#4dad87 25.8%,#54a8a2 27.5%,#59a4ba 29.2%,#5ea1cf 30.8%,#629dde 32.5%,#6498db 34.2%,#6695d9 35.8%,#6693d9 37.5%,#6693d8 39.2%,#6694d9 40.8%,#6596da 42.5%,#649adc 44.2%,#619edb 45.8%,#5ea1cb 47.5%,#59a4b9 49.2%,#54a8a5 50.8%,#4fab90 52.5%,#4aaf7a 54.2%,#45b364 55.8%,#41b650 57.5%,#50bc59 59.2%,#5dc161 60.8%,#6ac568 62.5%,#74c96e 64.2%,#7dcc72 65.8%,#83ce76 67.5%,#88d079 69.2%,#8ad17a 70.8%,#8bd17a 72.5%,#89d07a 74.2%,#86cf78 75.8%,#82ce76 77.5%,#7dcc73 79.2%,#78ca70 80.8%,#72c86c 82.5%,#6dc669 84.2%,#68c466 85.8%,#64c364 87.5%,#62c263 89.2%,#61c263 90.8%,#63c264 92.5%,#67c466 94.2%,#6dc669 95.8%,#76c96e 97.5%,#81cd75 99.2%)"></div>
<div style="left:0;top:60.88px;width:251px;height:4.41px;background:linear-gradient(90deg,#f7b51e 0.8%,#f7ba1d 2.5%,#f7c11d 4.2%,#f7ca1d 5.8%,#f7d51d 7.5%,#f7e21c 9.2%,#f1eb25 10.8%,#dfe73f 12.5%,#cbe35c 14.2%,#b6de7b 15.8%,#9cd784 17.5%,#7ecc73 19.2%,#60c162 20.8%,#42b751 22.5%,#48b073 24.2%,#51aa97 25.8%,#59a5b7 27.5%,#5fa0d4 29.2%,#6499db 30.8%,#6792d8 32.5%,#698dd5 34.2%,#6a89d4 35.8%,#6a88d3 37.5%,#6a89d3 39.2%,#698bd5 40.8%,#688fd7 42.5%,#6595da 44.2%,#639cdd 45.8%,#5ea1cc 47.5%,#58a5b2 49.2%,#51aa97 50.8%,#4aaf7b 52.5%,#43b45e 54.2%,#4bba56 55.8%,#5fc161 57.5%,#71c86c 59.2%,#82ce75 60.8%,#91d37e 62.5%,#9dd785 64.2%,#a6db8a 65.8%,#acdc8a 67.5%,#aedd86 69.2%,#aedd86 70.8%,#acdc89 72.5%,#a8db8b 74.2%,#a1d987 75.8%,#98d682 77.5%,#8ed27c 79.2%,#83ce76 80.8%,#78ca6f 82.5%,#6dc669 84.2%,#62c263 85.8%,#5abf5e 87.5%,#53bd5b 89.2%,#4ebb58 90.8%,#4cba57 92.5%,#4ebb58 94.2%,#52bd5a 95.8%,#5abf5f 97.5%,#66c466 99.2%)"></div>
<div style="left:0;top:57.08px;width:251px;height:4.41px;background:linear-gradient(90deg,#f69b1f 0.8%,#f7a21e 2.5%,#f7aa1e 4.2%,#f7b31e 5.8%,#f7bf1d 7.5%,#f7ce1d 9.2%,#f7df1c 10.8%,#f0eb26 12.5%,#dae646 14.2%,#c2e169 15.8%,#a8db8b 17.5%,#85cf77 19.2%,#62c263 20.8%,#40b650 22.5%,#4aaf7b 24.2%,#54a8a4 25.8%,#5da2c9 27.5%,#649adc 29.2%,#6790d7 30.8%,#6a88d3 32.5%,#6c83d0 34.2%,#6e80cf 35.8%,#6e7fce 37.5%,#6d80cf 39.2%,#6c84d1 40.8%,#6a8ad4 42.5%,#6791d8 44.2%,#639adc 45.8%,#5da1cb 47.5%,#56a7ab 49.2%,#4eac89 50.8%,#45b266 52.5%,#49b955 54.2%,#63c264 55.8%,#7bcb71 57.5%,#91d37e 59.2%,#a4da89 60.8%,#b2de80 62.5%,#bce072 64.2%,#c3e168 65.8%,#c7e262 67.5%,#c8e260 69.2%,#c7e261 70.8%,#c4e167 72.5%,#bee06f 74.2%,#b6de7b 75.8%,#acdc89 77.5%,#9ed885 79.2%,#8ed27c 80.8%,#7ecc73 82.5%,#6ec66a 84.2%,#5fc161 85.8%,#51bc5a 87.5%,#46b853 89.2%,#41b653 90.8%,#42b459 92.5%,#43b45a 94.2%,#42b556 95.8%,#43b751 97.5%,#4ebb58 99.2%)"></div>
<div style="left:0;top:53.27px;width:251px;height:4.41px;background:linear-gradient(90deg,#f27821 0.8%,#f37e21 2.5%,#f48920 4.2%,#f69b1f 5.8%,#f7ac1e 7.5%,#f7bc1d 9.2%,#f7ce1d 10.8%,#f7e31c 12.5%,#e8e933 14.2%,#cde359 15.8%,#b1dd82 17.5%,#8dd27c 19.2%,#66c466 20.8%,#40b650 22.5%,#4bae80 24.2%,#56a6ad 25.8%,#609fd5 27.5%,#6694d9 29.2%,#6a89d4 30.8%,#6d81d0 32.5%,#6f7bcd 34.2%,#7178cb 35.8%,#7178cb 37.5%,#707acc 39.2%,#6e7fce 40.8%,#6b86d2 42.5%,#688fd6 44.2%,#649adc 45.8%,#5da2c7 47.5%,#54a8a2 49.2%,#4aaf7b 50.8%,#41b652 52.5%,#5cc060 54.2%,#79ca70 55.8%,#94d480 57.5%,#acdd88 59.2%,#bce071 60.8%,#cae35e 62.5%,#d4e54f 64.2%,#dbe644 65.8%,#dfe73e 67.5%,#e0e73d 69.2%,#dee740 70.8%,#d9e648 72.5%,#d1e454 74.2%,#c6e263 75.8%,#badf75 77.5%,#acdc89 79.2%,#99d682 80.8%,#84ce77 82.5%,#70c76b 84.2%,#5dc060 85.8%,#4bba56 87.5%,#41b554 89.2%,#45b363 90.8%,#47b16d 92.5%,#48b071 94.2%,#47b16f 95.8%,#45b266 97.5%,#42b556 99.2%)"></div>
<div style="left:0;top:49.47px;width:251px;height:4.41px;background:linear-gradient(90deg,#ef5a24 0.8%,#f05f23 2.5%,#f16a23 4.2%,#f37c21 5.8%,#f5941f 7.5%,#f7ac1e 9.2%,#f7c01d 10.8%,#f7d61d 12.5%,#f4eb21 14.2%,#d7e54b 15.8%,#b9df76 17.5%,#95d480 19.2%,#6bc568 20.8%,#42b751 22.5%,#4cae81 24.2%,#57a6b2 25.8%,#629edd 27.5%,#6791d7 29.2%,#6c85d2 30.8%,#6f7ccd 32.5%,#7176ca 34.2%,#7273c9 35.8%,#7273c9 37.5%,#7176ca 39.2%,#6f7ccd 40.8%,#6c84d1 42.5%,#688ed6 44.2%,#639bdc 45.8%,#5ba3c1 47.5%,#51aa98 49.2%,#47b16c 50.8%,#4cba57 52.5%,#6dc66a 54.2%,#8dd27c 55.8%,#abdc8b 57.5%,#bfe06e 59.2%,#d0e455 60.8%,#dee740 62.5%,#e9e930 64.2%,#f1eb25 65.8%,#f5eb20 67.5%,#f5ec1f 69.2%,#f1eb24 70.8%,#ebe92e 72.5%,#e1e73c 74.2%,#d5e54e 75.8%,#c6e263 77.5%,#b6df7a 79.2%,#a3da88 80.8%,#8bd17a 82.5%,#73c86d 84.2%,#5dc060 85.8%,#48b955 87.5%,#43b45c 89.2%,#47b16f 90.8%,#4aaf7b 92.5%,#4cae82 94.2%,#4cae81 95.8%,#4aaf79 97.5%,#46b269 99.2%)"></div>
<div style="left:0;top:45.66px;width:251px;height:4.41px;background:linear-gradient(90deg,#ed4326 0.8%,#ed4725 2.5%,#ef5124 4.2%,#f06323 5.8%,#f37c21 7.5%,#f69c1f 9.2%,#f7b41e 10.8%,#f7cc1d 12.5%,#f7e61c 14.2%,#e0e73e 15.8%,#c1e16b 17.5%,#9dd785 19.2%,#71c86c 20.8%,#46b853 22.5%,#4bae7f 24.2%,#57a6b1 25.8%,#629ede 27.5%,#688fd7 29.2%,#6c83d1 30.8%,#707acc 32.5%,#7274c9 34.2%,#7371c8 35.8%,#7372c8 37.5%,#7275c9 39.2%,#6f7bcc 40.8%,#6c84d1 42.5%,#688fd7 44.2%,#639ddd 45.8%,#59a4b9 47.5%,#4eac8c 49.2%,#43b45d 50.8%,#5abf5f 52.5%,#7dcc73 54.2%,#9fd886 55.8%,#b9df76 57.5%,#cee358 59.2%,#e0e73d 60.8%,#efea27 62.5%,#f7e91c 64.2%,#f7e21c 65.8%,#f7de1c 67.5%,#f7df1c 69.2%,#f7e21c 70.8%,#f7e91c 72.5%,#efea28 74.2%,#e1e73c 75.8%,#d1e453 77.5%,#bfe06d 79.2%,#acdc89 80.8%,#92d47f 82.5%,#78ca70 84.2%,#5fc162 85.8%,#48b955 87.5%,#44b35f 89.2%,#49b074 90.8%,#4cad83 92.5%,#4eac8b 94.2%,#4eac8b 95.8%,#4cad83 97.5%,#49b074 99.2%)"></div>
<div style="left:0;top:41.86px;width:251px;height:4.41px;background:linear-gradient(90deg,#eb3227 0.8%,#ec3527 2.5%,#ed4026 4.2%,#ef5224 5.8%,#f16b23 7.5%,#f48b20 9.2%,#f7ab1e 10.8%,#f7c31d 12.5%,#f7de1c 14.2%,#e8e932 15.8%,#c7e261 17.5%,#a5da89 19.2%,#78ca70 20.8%,#4cba57 22.5%,#4aaf78 24.2%,#56a6ac 25.8%,#619fdb 27.5%,#6790d7 29.2%,#6c84d1 30.8%,#6f7bcd 32.5%,#7275ca 34.2%,#7372c8 35.8%,#7373c8 37.5%,#7176ca 39.2%,#6f7dcd 40.8%,#6b86d2 42.5%,#6792d8 44.2%,#619fd9 45.8%,#56a6ae 47.5%,#4bae7f 49.2%,#41b651 50.8%,#66c466 52.5%,#8bd17a 54.2%,#addd88 55.8%,#c5e265 57.5%,#dae646 59.2%,#edea2b 60.8%,#f7e71c 62.5%,#f7dc1c 64.2%,#f7d51d 65.8%,#f7d21d 67.5%,#f7d31d 69.2%,#f7d71d 70.8%,#f7df1c 72.5%,#f7e91c 74.2%,#ebea2d 75.8%,#dae646 77.5%,#c7e262 79.2%,#b3de7f 80.8%,#9ad683 82.5%,#7ecc73 84.2%,#64c364 85.8%,#4cba57 87.5%,#43b45d 89.2%,#48b073 90.8%,#4cad83 92.5%,#4eac8c 94.2%,#4fac8d 95.8%,#4dad86 97.5%,#49af77 99.2%)"></div>
<div style="left:0;top:38.05px;width:251px;height:4.41px;background:linear-gradient(90deg,#ea2728 0.8%,#eb2a27 2.5%,#ec3527 4.2%,#ee4725 5.8%,#f06023 7.5%,#f38021 9.2%,#f7a51e 10.8%,#f7bd1d 12.5%,#f7d81d 14.2%,#eeea29 15.8%,#cee358 17.5%,#addd88 19.2%,#80cd74 20.8%,#54bd5b 22.5%,#47b16e 24.2%,#54a8a2 25.8%,#5fa0d1 27.5%,#6694d9 29.2%,#6a88d3 30.8%,#6e7fce 32.5%,#7079cb 34.2%,#7176ca 35.8%,#7177ca 37.5%,#707acc 39.2%,#6d81d0 40.8%,#698bd4 42.5%,#6597da 44.2%,#5da1cb 45.8%,#53a9a0 47.5%,#48b170 49.2%,#4cba57 50.8%,#72c86c 52.5%,#97d581 54.2%,#b6de7b 55.8%,#cee358 57.5%,#e3e838 59.2%,#f6ec1d 60.8%,#f7df1c 62.5%,#f7d41d 64.2%,#f7cd1d 65.8%,#f7ca1d 67.5%,#f7cb1d 69.2%,#f7cf1d 70.8%,#f7d71d 72.5%,#f7e21c 74.2%,#f3eb22 75.8%,#e1e73c 77.5%,#cee358 79.2%,#b9df76 80.8%,#a2d988 82.5%,#86cf78 84.2%,#6bc568 85.8%,#52bc5a 87.5%,#41b554 89.2%,#47b16c 90.8%,#4baf7c 92.5%,#4dad85 94.2%,#4dad87 95.8%,#4cae80 97.5%,#48b071 99.2%)"></div>
<div style="left:0;top:34.25px;width:251px;height:4.41px;background:linear-gradient(90deg,#ea2428 0.8%,#ea2728 2.5%,#eb3127 4.2%,#ed4326 5.8%,#f05c24 7.5%,#f37b21 9.2%,#f7a01e 10.8%,#f7ba1d 12.5%,#f7d41d 14.2%,#f3eb22 15.8%,#d3e550 17.5%,#b3de7f 19.2%,#89d07a 20.8%,#5ec161 22.5%,#44b35f 24.2%,#50ab92 25.8%,#5ba3c0 27.5%,#639bdc 29.2%,#688fd6 30.8%,#6b86d2 32.5%,#6e80cf 34.2%,#6f7dce 35.8%,#6e7ece 37.5%,#6d82d0 39.2%,#6a88d3 40.8%,#6792d8 42.5%,#629dde 44.2%,#59a4b9 45.8%,#4fab8f 47.5%,#44b360 49.2%,#58bf5d 50.8%,#7ccc72 52.5%,#a1d987 54.2%,#bde071 55.8%,#d4e54f 57.5%,#e9e930 59.2%,#f7e81c 60.8%,#f7da1d 62.5%,#f7cf1d 64.2%,#f7c91d 65.8%,#f7c61d 67.5%,#f7c61d 69.2%,#f7cb1d 70.8%,#f7d31d 72.5%,#f7de1c 74.2%,#f7eb1c 75.8%,#e6e934 77.5%,#d3e550 79.2%,#bfe06d 80.8%,#abdc8b 82.5%,#8fd27d 84.2%,#74c96e 85.8%,#5cc060 87.5%,#47b954 89.2%,#43b45d 90.8%,#47b16e 92.5%,#49af77 94.2%,#4aaf78 95.8%,#48b071 97.5%,#44b362 99.2%)"></div>
<div style="left:0;top:30.44px;width:251px;height:4.41px;background:linear-gradient(90deg,#ea2728 0.8%,#eb2b27 2.5%,#ec3527 4.2%,#ed4625 5.8%,#f05e24 7.5%,#f37c21 9.2%,#f7a01e 10.8%,#f7b91d 12.5%,#f7d21d 14.2%,#f6ec1d 15.8%,#d8e649 17.5%,#b9df77 19.2%,#94d47f 20.8%,#6ac568 22.5%,#43b752 24.2%,#4bae7d 25.8%,#55a7a9 27.5%,#5ea1cf 29.2%,#6498db 30.8%,#6890d7 32.5%,#6a8ad4 34.2%,#6b87d3 35.8%,#6a88d3 37.5%,#698bd5 39.2%,#6792d8 40.8%,#639bdc 42.5%,#5da2c8 44.2%,#54a8a4 45.8%,#4aaf7b 47.5%,#41b651 49.2%,#63c364 50.8%,#86cf78 52.5%,#a9dc8b 54.2%,#c1e16a 55.8%,#d8e649 57.5%,#ecea2c 59.2%,#f7e61c 60.8%,#f7d91d 62.5%,#f7cf1d 64.2%,#f7c81d 65.8%,#f7c51d 67.5%,#f7c61d 69.2%,#f7ca1d 70.8%,#f7d21d 72.5%,#f7dc1c 74.2%,#f7e91c 75.8%,#eae92f 77.5%,#d8e649 79.2%,#c5e265 80.8%,#b1dd82 82.5%,#99d683 84.2%,#80cd74 85.8%,#69c567 87.5%,#55be5c 89.2%,#45b853 90.8%,#42b558 92.5%,#44b360 94.2%,#44b361 95.8%,#42b45a 97.5%,#43b752 99.2%)"></div>
<div style="left:0;top:26.64px;width:251px;height:4.41px;background:linear-gradient(90deg,#eb3127 0.8%,#ec3527 2.5%,#ed3f26 4.2%,#ee5025 5.8%,#f16723 7.5%,#f48321 9.2%,#f7a51e 10.8%,#f7ba1d 12.5%,#f7d21d 14.2%,#f7eb1c 15.8%,#dce643 17.5%,#bfe06e 19.2%,#9fd886 20.8%,#78ca70 22.5%,#53bd5b 24.2%,#45b364 25.8%,#4eac8d 27.5%,#57a6b0 29.2%,#5ea1cd 30.8%,#639cdd 32.5%,#6597db 34.2%,#6695d9 35.8%,#6695d9 37.5%,#6498db 39.2%,#629ede 40.8%,#5da2c8 42.5%,#56a7ac 44.2%,#4eac8a 45.8%,#45b365 47.5%,#4fbb59 49.2%,#6fc76b 50.8%,#8fd27d 52.5%,#aedd87 54.2%,#c4e166 55.8%,#d9e648 57.5%,#ecea2d 59.2%,#f7e71c 60.8%,#f7db1c 62.5%,#f7d21d 64.2%,#f7cc1d 65.8%,#f7c91d 67.5%,#f7c91d 69.2%,#f7cd1d 70.8%,#f7d41d 72.5%,#f7dd1c 74.2%,#f7e91c 75.8%,#ebea2d 77.5%,#dbe645 79.2%,#cae35e 80.8%,#b8df78 82.5%,#a5da89 84.2%,#8ed27c 85.8%,#7acb71 87.5%,#68c466 89.2%,#59bf5e 90.8%,#4fbc59 92.5%,#4aba56 94.2%,#4aba56 95.8%,#4fbc59 97.5%,#5abf5f 99.2%)"></div>
<div style="left:0;top:22.83px;width:251px;height:4.41px;background:linear-gradient(90deg,#ed4126 0.8%,#ed4625 2.5%,#ee5025 4.2%,#f06023 5.8%,#f27522 7.5%,#f59020 9.2%,#f7aa1e 10.8%,#f7be1d 12.5%,#f7d31d 14.2%,#f7ea1c 15.8%,#dfe73e 17.5%,#c5e264 19.2%,#abdc8b 20.8%,#88d079 22.5%,#67c466 24.2%,#48b954 25.8%,#46b26b 27.5%,#4eac8b 29.2%,#54a8a5 30.8%,#59a4b9 32.5%,#5ca2c6 34.2%,#5ea1cd 35.8%,#5ea1cc 37.5%,#5ca2c5 39.2%,#59a5b8 40.8%,#54a8a4 42.5%,#4eac8b 44.2%,#47b16d 45.8%,#43b752 47.5%,#5ec161 49.2%,#7acb71 50.8%,#97d581 52.5%,#b1dd82 54.2%,#c5e265 55.8%,#d8e54a 57.5%,#e8e931 59.2%,#f7ec1c 60.8%,#f7e11c 62.5%,#f7d81d 64.2%,#f7d31d 65.8%,#f7d01d 67.5%,#f7d01d 69.2%,#f7d31d 70.8%,#f7d91d 72.5%,#f7e11c 74.2%,#f7eb1c 75.8%,#ebea2d 77.5%,#dde741 79.2%,#cee457 80.8%,#bfe06e 82.5%,#b0dd84 84.2%,#9ed885 85.8%,#8dd27b 87.5%,#7ecc73 89.2%,#72c86c 90.8%,#6ac568 92.5%,#66c465 94.2%,#67c466 95.8%,#6cc669 97.5%,#77ca6f 99.2%)"></div>
<div style="left:0;top:19.03px;width:251px;height:4.41px;background:linear-gradient(90deg,#ef5724 0.8%,#f05c24 2.5%,#f16623 4.2%,#f27522 5.8%,#f48920 7.5%,#f7a11e 9.2%,#f7b21e 10.8%,#f7c31d 12.5%,#f7d61d 14.2%,#f7ea1c 15.8%,#e2e83a 17.5%,#cbe35b 19.2%,#b5de7d 20.8%,#9ad683 22.5%,#7dcc72 24.2%,#62c263 25.8%,#49b955 27.5%,#44b360 29.2%,#49af77 30.8%,#4eac89 32.5%,#51aa95 34.2%,#52a99b 35.8%,#52a99c 37.5%,#51aa96 39.2%,#4eac8b 40.8%,#4aaf7b 42.5%,#45b266 44.2%,#42b751 45.8%,#57be5d 47.5%,#6ec76a 49.2%,#86cf78 50.8%,#9fd886 52.5%,#b3de7e 54.2%,#c4e166 55.8%,#d4e54e 57.5%,#e3e839 59.2%,#efea27 60.8%,#f7e91c 62.5%,#f7e21c 64.2%,#f7dd1c 65.8%,#f7da1d 67.5%,#f7da1d 69.2%,#f7dc1c 70.8%,#f7e01c 72.5%,#f7e61c 74.2%,#f4eb20 75.8%,#eae92f 77.5%,#dfe740 79.2%,#d2e451 80.8%,#c6e263 82.5%,#badf75 84.2%,#afdd85 85.8%,#a3d988 87.5%,#97d581 89.2%,#8ed27c 90.8%,#88d079 92.5%,#86cf78 94.2%,#88d079 95.8%,#8ed27c 97.5%,#98d682 99.2%)"></div>
<div style="left:0;top:15.22px;width:251px;height:4.41px;background:linear-gradient(90deg,#f27022 0.8%,#f27722 2.5%,#f38121 4.2%,#f58f20 5.8%,#f7a11e 7.5%,#f7ae1e 9.2%,#f7bb1d 10.8%,#f7ca1d 12.5%,#f7da1d 14.2%,#f7eb1c 15.8%,#e5e836 17.5%,#d2e452 19.2%,#bfe06e 20.8%,#acdc89 22.5%,#94d480 24.2%,#7ecc73 25.8%,#69c567 27.5%,#57be5d 29.2%,#49b955 30.8%,#41b554 32.5%,#43b45e 34.2%,#45b364 35.8%,#45b266 37.5%,#44b362 39.2%,#42b45a 40.8%,#42b751 42.5%,#4ebb58 44.2%,#5cc060 45.8%,#6dc669 47.5%,#7fcd74 49.2%,#92d37e 50.8%,#a5da89 52.5%,#b5de7c 54.2%,#c2e169 55.8%,#cfe456 57.5%,#dbe645 59.2%,#e5e836 60.8%,#eeea29 62.5%,#f5ec1f 64.2%,#f7e91c 65.8%,#f7e71c 67.5%,#f7e61c 69.2%,#f7e71c 70.8%,#f7ea1c 72.5%,#f5ec1f 74.2%,#efea28 75.8%,#e7e933 77.5%,#dfe73f 79.2%,#d6e54b 80.8%,#cee358 82.5%,#c5e265 84.2%,#bde070 85.8%,#b6de7b 87.5%,#b0dd83 89.2%,#acdc89 90.8%,#aadc8c 92.5%,#aadc8c 94.2%,#addd88 95.8%,#b1de81 97.5%,#b8df77 99.2%)"></div>
<div style="left:0;top:11.42px;width:251px;height:4.41px;background:linear-gradient(90deg,#f58e20 0.8%,#f5951f 2.5%,#f6a01e 4.2%,#f7a91e 5.8%,#f7b21e 7.5%,#f7bb1d 9.2%,#f7c61d 10.8%,#f7d21d 12.5%,#f7df1c 14.2%,#f6ec1d 15.8%,#e7e933 17.5%,#d8e649 19.2%,#c9e25f 20.8%,#bbdf74 22.5%,#addd88 24.2%,#9cd784 25.8%,#8cd17b 27.5%,#7ecc73 29.2%,#72c86c 30.8%,#68c467 32.5%,#61c263 34.2%,#5dc060 35.8%,#5cc060 37.5%,#5dc060 39.2%,#60c262 40.8%,#66c466 42.5%,#6ec76a 44.2%,#78ca70 45.8%,#83ce76 47.5%,#90d37d 49.2%,#9ed885 50.8%,#abdc8a 52.5%,#b5de7c 54.2%,#bfe06d 55.8%,#c9e25f 57.5%,#d2e453 59.2%,#d9e647 60.8%,#e0e73d 62.5%,#e6e835 64.2%,#eae92f 65.8%,#edea2b 67.5%,#eeea29 69.2%,#eeea29 70.8%,#edea2a 72.5%,#ebe92e 74.2%,#e8e932 75.8%,#e4e838 77.5%,#dfe73f 79.2%,#dae646 80.8%,#d5e54d 82.5%,#d0e454 84.2%,#cce35a 85.8%,#c9e25f 87.5%,#c6e263 89.2%,#c5e265 90.8%,#c5e265 92.5%,#c7e262 94.2%,#cae35d 95.8%,#cfe456 97.5%,#d6e54c 99.2%)"></div>
<div style="left:0;top:7.61px;width:251px;height:4.41px;background:linear-gradient(90deg,#f7aa1e 0.8%,#f7af1e 2.5%,#f7b41e 4.2%,#f7bb1d 5.8%,#f7c21d 7.5%,#f7ca1d 9.2%,#f7d21d 10.8%,#f7db1c 12.5%,#f7e51c 14.2%,#f4eb20 15.8%,#e9e930 17.5%,#dfe740 19.2%,#d4e54f 20.8%,#cae35e 22.5%,#c0e16c 24.2%,#b7df79 25.8%,#aedd86 27.5%,#a6da8a 29.2%,#9dd785 30.8%,#96d580 32.5%,#90d37d 34.2%,#8cd17b 35.8%,#89d07a 37.5%,#89d079 39.2%,#8ad07a 40.8%,#8cd17b 42.5%,#90d37d 44.2%,#95d480 45.8%,#9bd783 47.5%,#a2d987 49.2%,#a9dc8c 50.8%,#afdd84 52.5%,#b5de7b 54.2%,#bbe073 55.8%,#c1e16a 57.5%,#c7e262 59.2%,#cce35b 60.8%,#d1e454 62.5%,#d5e54e 64.2%,#d8e649 65.8%,#dbe645 67.5%,#dde742 69.2%,#dfe73f 70.8%,#dfe73e 72.5%,#e0e73e 74.2%,#e0e73e 75.8%,#dfe73f 77.5%,#dee740 79.2%,#dee741 80.8%,#dde742 82.5%,#dce643 84.2%,#dce643 85.8%,#dce643 87.5%,#dde741 89.2%,#dfe73f 90.8%,#e2e83b 92.5%,#e5e836 94.2%,#eae930 95.8%,#efea27 97.5%,#f6ec1e 99.2%)"></div>
<div style="left:0;top:3.81px;width:251px;height:4.41px;background:linear-gradient(90deg,#f7bc1d 0.8%,#f7c11d 2.5%,#f7c71d 4.2%,#f7cd1d 5.8%,#f7d31d 7.5%,#f7d91d 9.2%,#f7df1c 10.8%,#f7e51c 12.5%,#f7eb1c 14.2%,#f2eb24 15.8%,#ebea2d 17.5%,#e5e836 19.2%,#dfe73f 20.8%,#d9e647 22.5%,#d4e54f 24.2%,#cee457 25.8%,#c9e35e 27.5%,#c5e265 29.2%,#c1e16b 30.8%,#bde070 32.5%,#badf75 34.2%,#b7df79 35.8%,#b5de7c 37.5%,#b3de7f 39.2%,#b1de81 40.8%,#b1dd83 42.5%,#b0dd83 44.2%,#b0dd83 45.8%,#b0dd83 47.5%,#b1dd82 49.2%,#b2de80 50.8%,#b4de7e 52.5%,#b5de7c 54.2%,#b7df79 55.8%,#b9df76 57.5%,#bbe073 59.2%,#bee06f 60.8%,#c0e16b 62.5%,#c3e168 64.2%,#c6e264 65.8%,#c9e260 67.5%,#cbe35b 69.2%,#cee457 70.8%,#d1e453 72.5%,#d4e54f 74.2%,#d7e54a 75.8%,#dae646 77.5%,#dee741 79.2%,#e1e73c 80.8%,#e5e837 82.5%,#e8e931 84.2%,#ecea2b 85.8%,#f1eb25 87.5%,#f5ec1f 89.2%,#f7e91c 90.8%,#f7e51c 92.5%,#f7e01c 94.2%,#f7da1c 95.8%,#f7d51d 97.5%,#f7cf1d 99.2%)"></div>
<div style="left:0;top:0.00px;width:251px;height:4.41px;background:linear-gradient(90deg,#f7ce1d 0.8%,#f7d41d 2.5%,#f7da1c 4.2%,#f7df1c 5.8%,#f7e41c 7.5%,#f7e81c 9.2%,#f7ec1c 10.8%,#f4eb20 12.5%,#f2eb24 14.2%,#efea27 15.8%,#edea2a 17.5%,#ecea2c 19.2%,#eae92f 20.8%,#e9e931 22.5%,#e8e932 24.2%,#e6e934 25.8%,#e5e837 27.5%,#e3e839 29.2%,#e1e73c 30.8%,#dfe73f 32.5%,#dde742 34.2%,#dae646 35.8%,#d7e54a 37.5%,#d4e54f 39.2%,#d1e454 40.8%,#cde359 42.5%,#c9e35e 44.2%,#c6e264 45.8%,#c2e169 47.5%,#bee06f 49.2%,#bbdf74 50.8%,#b8df78 52.5%,#b5de7c 54.2%,#b3de7f 55.8%,#b1dd82 57.5%,#b0dd83 59.2%,#b0dd84 60.8%,#b0dd83 62.5%,#b1dd82 64.2%,#b3de7f 65.8%,#b6de7b 67.5%,#b9df76 69.2%,#bee06f 70.8%,#c3e168 72.5%,#c8e260 74.2%,#cfe456 75.8%,#d6e54c 77.5%,#dde742 79.2%,#e5e837 80.8%,#edea2b 82.5%,#f5ec1f 84.2%,#f7e61c 85.8%,#f7df1c 87.5%,#f7d81d 89.2%,#f7d01d 90.8%,#f7c91d 92.5%,#f7c31d 94.2%,#f7bc1d 95.8%,#f7b61e 97.5%,#f7b11e 99.2%)"></div>
</div>
<svg style="left:0;top:0" width="1200" height="630" viewBox="0 0 1200 630"><path d="M994.3 615.5 998.0 614.7 1002.2 613.9 1006.4 613.2 M759.6 553.7 763.8 554.3 764.9 554.6 768.0 555.5 772.1 557.3 774.0 558.4 776.3 560.1 778.7 562.2 780.5 564.5 781.6 566.0 783.4 569.8 784.6 573.6 784.7 574.2 785.1 577.4 785.2 581.3 784.7 585.0 784.7 585.1 783.4 588.9 781.2 592.7 780.5 593.5 777.2 596.5 776.3 597.1 772.1 599.3 769.7 600.3 768.0 600.9 763.8 602.1 759.6 603.1 M1006.4 514.3 1003.4 512.8 1002.2 511.9 999.4 509.0 998.0 506.5 997.5 505.2 997.0 501.3 997.5 497.5 998.0 496.2 999.4 493.7 1002.2 490.8 1003.4 489.9 1006.4 488.4 M759.6 399.6 763.8 400.6 768.0 401.8 769.7 402.4 772.1 403.4 776.3 405.6 777.2 406.2 780.5 409.2 781.2 410.0 783.4 413.8 784.7 417.6 784.7 417.7 785.2 421.4 785.1 425.2 784.7 428.5 784.6 429.1 783.4 432.9 781.6 436.7 780.5 438.2 778.7 440.5 776.3 442.6 774.0 444.3 772.1 445.4 768.0 447.2 764.9 448.1 763.8 448.4 759.6 449.0 M759.6 542.4 763.2 543.2 763.8 543.3 768.0 544.4 772.1 545.6 776.1 547.0 776.3 547.1 780.5 549.1 783.2 550.8 784.7 551.9 787.5 554.6 788.9 556.2 790.5 558.4 792.5 562.2 793.1 563.5 794.0 566.0 795.1 569.8 796.0 573.6 796.6 577.4 797.1 581.3 797.2 582.8 797.4 585.1 797.6 588.9 797.6 592.7 797.5 596.5 797.2 598.8 797.0 600.3 796.1 604.1 793.8 607.9 793.1 608.5 788.9 610.7 785.3 611.7 784.7 611.8 780.5 612.7 776.3 613.5 772.1 614.4 768.0 615.3 767.4 615.5 M811.9 615.5 814.0 615.1 818.2 614.7 822.3 614.4 826.5 614.3 830.7 614.2 834.9 614.3 839.1 614.4 843.3 614.6 847.4 614.9 851.6 615.2 853.8 615.5 M965.4 615.5 968.8 612.4 969.9 611.7 972.9 610.3 977.1 609.1 981.3 608.2 982.9 607.9 985.5 607.5 989.7 606.9 993.9 606.3 998.0 605.7 1002.2 605.0 1006.4 604.2 M940.6 566.0 943.7 568.8 944.5 569.8 946.7 573.6 947.8 576.9 948.0 577.4 948.7 581.3 948.8 585.1 948.3 588.9 947.8 590.1 946.5 592.7 943.7 595.4 941.6 596.5 939.5 597.2 935.3 597.9 931.1 598.1 926.9 597.8 922.7 597.2 920.3 596.5 918.6 595.9 914.4 593.6 913.2 592.7 910.2 588.9 910.2 588.9 908.9 585.1 908.6 581.3 909.1 577.4 910.2 574.2 910.4 573.6 912.9 569.8 914.4 568.3 917.3 566.0 918.6 565.3 922.7 563.6 926.9 562.8 931.1 562.7 935.3 563.5 939.5 565.3 940.6 566.0 M1006.4 529.7 1002.2 528.4 1001.2 528.0 998.0 526.7 993.9 524.4 993.5 524.2 989.7 521.0 989.0 520.4 986.2 516.6 985.5 515.1 984.5 512.8 983.4 509.0 982.7 505.2 982.5 501.3 982.7 497.5 983.4 493.7 984.5 489.9 985.5 487.6 986.2 486.1 989.0 482.3 989.7 481.7 993.5 478.5 993.9 478.3 998.0 476.0 1001.2 474.7 1002.2 474.3 1006.4 473.0 M785.3 391.0 788.9 392.0 793.1 394.2 793.8 394.8 796.1 398.6 797.0 402.4 797.2 403.9 797.5 406.2 797.6 410.0 797.6 413.8 797.4 417.6 797.2 419.9 797.1 421.4 796.6 425.2 796.0 429.1 795.1 432.9 794.0 436.7 793.1 439.2 792.5 440.5 790.5 444.3 788.9 446.5 787.5 448.1 784.7 450.7 783.2 451.9 780.5 453.6 776.3 455.6 776.1 455.7 772.1 457.1 768.0 458.3 763.8 459.4 763.2 459.5 759.6 460.3 M941.6 406.2 943.7 407.3 946.5 410.0 947.8 412.6 948.3 413.8 948.8 417.6 948.7 421.4 948.0 425.2 947.8 425.8 946.7 429.1 944.5 432.9 943.7 433.9 940.6 436.7 939.5 437.4 935.3 439.2 931.1 440.0 926.9 439.9 922.7 439.1 918.6 437.4 917.3 436.7 914.4 434.4 912.9 432.9 910.4 429.1 910.2 428.5 909.1 425.2 908.6 421.4 908.9 417.6 910.2 413.8 910.2 413.8 913.2 410.0 914.4 409.1 918.6 406.8 920.3 406.2 922.7 405.5 926.9 404.9 931.1 404.6 935.3 404.8 939.5 405.5 941.6 406.2 M1006.4 398.5 1002.2 397.7 998.0 397.0 993.9 396.4 989.7 395.8 985.5 395.2 982.9 394.8 981.3 394.5 977.1 393.6 972.9 392.4 969.9 391.0 M932.6 615.5 931.1 615.1 926.9 614.2 922.7 613.6 918.6 613.3 914.4 613.1 910.2 613.3 906.0 613.8 901.8 615.2 901.3 615.5 M759.6 532.1 763.8 533.3 768.0 534.4 772.1 535.5 772.7 535.6 776.3 536.5 780.5 537.6 784.7 539.0 785.9 539.4 788.9 540.7 793.1 543.2 793.1 543.2 797.1 547.0 797.2 547.2 799.5 550.8 801.2 554.6 801.4 555.2 802.5 558.4 803.5 562.2 804.4 566.0 805.2 569.8 805.6 572.0 805.9 573.6 806.7 577.4 807.6 581.3 808.6 585.1 809.8 588.4 810.0 588.9 811.8 592.7 814.0 595.9 814.4 596.5 818.2 599.7 819.0 600.3 822.3 602.0 826.5 603.5 829.0 604.1 830.7 604.5 834.9 605.2 839.1 605.7 843.3 606.2 847.4 606.5 851.6 606.7 855.8 606.9 860.0 607.0 864.2 607.0 868.4 607.0 872.5 606.8 876.7 606.5 880.9 605.8 885.1 604.3 885.4 604.1 888.8 600.3 889.3 599.3 890.3 596.5 891.2 592.7 892.0 588.9 892.8 585.1 893.5 582.0 893.6 581.3 894.6 577.4 895.7 573.6 897.2 569.8 897.6 568.8 899.1 566.0 901.7 562.2 901.8 562.0 905.4 558.4 906.0 558.0 910.2 555.3 911.6 554.6 914.4 553.5 918.6 552.2 922.7 551.2 925.5 550.8 926.9 550.6 931.1 550.3 935.3 550.2 939.5 550.5 942.2 550.8 943.7 551.0 947.8 552.2 952.0 554.1 952.8 554.6 956.2 557.7 956.8 558.4 959.2 562.2 960.4 564.9 960.9 566.0 962.2 569.8 963.5 573.6 964.6 577.1 964.7 577.4 966.1 581.3 967.9 585.1 968.8 586.5 970.5 588.9 972.9 591.3 974.9 592.7 977.1 593.8 981.3 595.3 985.5 596.1 989.7 596.4 993.9 596.4 998.0 596.1 1002.2 595.5 1006.4 594.5 M1006.4 542.0 1002.2 540.6 998.1 539.4 998.0 539.4 993.9 538.1 989.7 536.7 987.1 535.6 985.5 534.8 981.3 532.1 980.9 531.8 977.6 528.0 977.1 527.3 975.6 524.2 974.3 520.4 973.5 516.6 972.9 513.1 972.9 512.8 972.5 509.0 972.3 505.2 972.3 501.3 972.3 497.5 972.5 493.7 972.9 489.9 972.9 489.6 973.5 486.1 974.3 482.3 975.6 478.5 977.1 475.4 977.6 474.7 980.9 470.9 981.3 470.6 985.5 467.9 987.1 467.1 989.7 466.0 993.9 464.6 998.0 463.3 998.1 463.3 1002.2 462.1 1006.4 460.7 M848.0 489.9 851.6 493.7 851.7 493.7 853.2 497.5 853.7 501.3 853.2 505.2 851.7 509.0 851.6 509.0 848.0 512.8 847.4 513.1 843.3 515.0 839.1 515.9 834.9 515.8 830.7 514.5 828.0 512.8 826.5 511.3 825.1 509.0 823.8 505.2 823.4 501.3 823.8 497.5 825.1 493.7 826.5 491.4 828.0 489.9 830.7 488.2 834.9 486.9 839.1 486.8 843.3 487.7 847.4 489.6 848.0 489.9 M1006.4 408.2 1002.2 407.2 998.0 406.6 993.9 406.3 989.7 406.3 985.5 406.6 981.3 407.4 977.1 408.8 974.9 410.0 972.9 411.4 970.5 413.8 968.8 416.2 967.9 417.6 966.1 421.4 964.7 425.2 964.6 425.6 963.5 429.1 962.2 432.9 960.9 436.7 960.4 437.8 959.2 440.5 956.8 444.3 956.2 445.0 952.8 448.1 952.0 448.6 947.8 450.5 943.7 451.7 942.2 451.9 939.5 452.2 935.3 452.5 931.1 452.4 926.9 452.1 925.5 451.9 922.7 451.5 918.6 450.5 914.4 449.2 911.6 448.1 910.2 447.4 906.0 444.7 905.4 444.3 901.8 440.7 901.7 440.5 899.1 436.7 897.6 433.9 897.2 432.9 895.7 429.1 894.6 425.2 893.6 421.4 893.5 420.7 892.8 417.6 892.0 413.8 891.2 410.0 890.3 406.2 889.3 403.4 888.8 402.4 885.4 398.6 885.1 398.4 880.9 396.9 876.7 396.2 872.5 395.9 868.4 395.7 864.2 395.7 860.0 395.7 855.8 395.8 851.6 396.0 847.4 396.2 843.3 396.5 839.1 396.9 834.9 397.5 830.7 398.2 829.0 398.6 826.5 399.2 822.3 400.7 819.0 402.4 818.2 403.0 814.4 406.2 814.0 406.8 811.8 410.0 810.0 413.8 809.8 414.3 808.6 417.6 807.6 421.4 806.7 425.2 805.9 429.1 805.6 430.6 805.2 432.9 804.4 436.7 803.5 440.5 802.5 444.3 801.4 447.5 801.2 448.1 799.5 451.9 797.2 455.4 797.1 455.7 793.1 459.5 793.1 459.5 788.9 462.0 785.9 463.3 784.7 463.7 780.5 465.1 776.3 466.2 772.7 467.1 772.1 467.2 768.0 468.3 763.8 469.4 759.6 470.6 M860.0 405.5 855.8 405.0 851.6 404.8 847.4 404.9 843.3 405.3 839.1 406.0 838.1 406.2 834.9 407.1 830.7 408.7 828.3 410.0 826.5 411.2 823.5 413.8 822.3 415.2 820.5 417.6 818.5 421.4 818.2 422.2 817.0 425.2 816.0 429.1 815.2 432.9 814.6 436.7 814.2 440.5 814.0 444.3 814.0 448.1 814.3 451.9 814.8 455.7 816.0 459.5 818.2 462.9 818.6 463.3 822.3 465.9 825.1 467.1 826.5 467.6 830.7 468.7 834.9 469.6 839.1 470.4 841.5 470.9 843.3 471.3 847.4 472.3 851.6 473.6 854.7 474.7 855.8 475.2 860.0 477.7 861.1 478.5 864.2 481.7 864.6 482.3 866.7 486.1 868.0 489.9 868.4 491.4 868.8 493.7 869.3 497.5 869.4 501.3 869.3 505.2 868.8 509.0 868.4 511.3 868.0 512.8 866.7 516.6 864.6 520.4 864.2 521.0 861.1 524.2 860.0 525.0 855.8 527.5 854.7 528.0 851.6 529.1 847.4 530.4 843.3 531.4 841.5 531.8 839.1 532.3 834.9 533.1 830.7 534.0 826.5 535.1 825.1 535.6 822.3 536.8 818.6 539.4 818.2 539.8 816.0 543.2 814.8 547.0 814.3 550.8 814.0 554.6 814.0 558.4 814.2 562.2 814.6 566.0 815.2 569.8 816.0 573.6 817.0 577.4 818.2 580.5 818.5 581.3 820.5 585.1 822.3 587.5 823.5 588.9 826.5 591.5 828.3 592.7 830.7 593.9 834.9 595.6 838.1 596.5 839.1 596.7 843.3 597.4 847.4 597.8 851.6 597.9 855.8 597.7 860.0 597.2 863.3 596.5 864.2 596.3 868.4 594.7 872.0 592.7 872.5 592.3 876.2 588.9 876.7 588.2 878.8 585.1 880.8 581.3 880.9 581.0 882.3 577.4 883.7 573.6 885.0 569.8 885.1 569.4 886.3 566.0 887.7 562.2 889.3 558.9 889.5 558.4 891.9 554.6 893.5 552.8 895.5 550.8 897.6 549.2 901.6 547.0 901.8 546.9 906.0 545.3 910.2 544.1 914.1 543.2 914.4 543.1 918.6 542.4 922.7 541.7 926.9 541.1 931.1 540.5 935.3 539.9 938.8 539.4 939.5 539.3 943.7 538.5 947.8 537.5 952.0 535.9 952.7 535.6 956.2 533.2 957.5 531.8 959.8 528.0 960.4 526.4 961.0 524.2 961.8 520.4 962.3 516.6 962.7 512.8 962.9 509.0 963.0 505.2 963.0 501.3 963.0 497.5 962.9 493.7 962.7 489.9 962.3 486.1 961.8 482.3 961.0 478.5 960.4 476.3 959.8 474.7 957.5 470.9 956.2 469.5 952.7 467.1 952.0 466.8 947.8 465.2 943.7 464.2 939.5 463.4 938.8 463.3 935.3 462.8 931.1 462.2 926.9 461.6 922.7 461.0 918.6 460.3 914.4 459.5 914.1 459.5 910.2 458.6 906.0 457.4 901.8 455.8 901.6 455.7 897.6 453.5 895.5 451.9 893.5 449.9 891.9 448.1 889.5 444.3 889.3 443.8 887.7 440.5 886.3 436.7 885.1 433.3 885.0 432.9 883.7 429.1 882.3 425.2 880.9 421.7 880.8 421.4 878.8 417.6 876.7 414.5 876.2 413.8 872.5 410.4 872.0 410.0 868.4 408.0 864.2 406.4 863.3 406.2 860.0 405.5 M1006.4 557.5 1002.2 555.1 1000.7 554.6 998.0 553.8 993.9 553.2 989.7 553.3 985.5 554.1 984.5 554.6 981.3 557.1 980.4 558.4 979.1 562.2 978.9 566.0 979.4 569.8 980.7 573.6 981.3 574.9 983.0 577.4 985.5 579.9 987.5 581.3 989.7 582.3 993.9 583.3 998.0 583.4 1002.2 582.5 1005.2 581.3 1006.4 580.5 M759.6 520.1 760.1 520.4 763.8 522.2 768.0 523.7 770.0 524.2 772.1 524.7 776.3 525.4 780.5 525.8 784.7 525.9 788.9 525.7 793.1 525.0 795.6 524.2 797.2 523.4 800.7 520.4 801.4 519.2 802.6 516.6 803.6 512.8 804.1 509.0 804.4 505.2 804.5 501.3 804.4 497.5 804.1 493.7 803.6 489.9 802.6 486.1 801.4 483.5 800.7 482.3 797.2 479.3 795.6 478.5 793.1 477.7 788.9 477.0 784.7 476.8 780.5 476.9 776.3 477.3 772.1 478.0 770.0 478.5 768.0 479.0 763.8 480.5 760.1 482.3 759.6 482.6 M1006.4 422.2 1005.2 421.4 1002.2 420.2 998.0 419.3 993.9 419.4 989.7 420.4 987.5 421.4 985.5 422.8 983.0 425.2 981.3 427.8 980.7 429.1 979.4 432.9 978.9 436.7 979.1 440.5 980.4 444.3 981.3 445.6 984.5 448.1 985.5 448.6 989.7 449.4 993.9 449.5 998.0 448.9 1000.7 448.1 1002.2 447.6 1006.4 445.2 M860.0 543.1 856.0 543.2 855.8 543.2 851.6 543.6 847.4 544.3 843.3 545.3 839.1 546.8 838.5 547.0 834.9 549.0 832.5 550.8 830.7 552.7 829.3 554.6 827.5 558.4 826.6 562.2 826.5 564.1 826.4 566.0 826.5 566.9 826.8 569.8 827.9 573.6 829.7 577.4 830.7 578.9 832.7 581.3 834.9 583.1 838.2 585.1 839.1 585.5 843.3 586.8 847.4 587.3 851.6 587.3 855.8 586.6 860.0 585.1 860.1 585.1 864.2 582.4 865.4 581.3 868.4 577.7 868.5 577.4 870.5 573.6 872.0 569.8 872.5 567.7 873.0 566.0 873.6 562.2 873.9 558.4 873.9 554.6 873.4 550.8 872.5 548.3 871.8 547.0 868.4 544.4 864.2 543.3 862.2 543.2 860.0 543.1 M926.9 470.8 922.7 470.1 918.6 469.6 914.4 469.1 910.2 468.8 906.0 468.6 901.8 468.6 897.6 468.7 893.5 469.1 889.3 470.1 887.7 470.9 885.1 473.2 884.2 474.7 882.9 478.5 882.2 482.3 881.8 486.1 881.6 489.9 881.4 493.7 881.3 497.5 881.3 501.3 881.3 505.2 881.4 509.0 881.6 512.8 881.8 516.6 882.2 520.4 882.9 524.2 884.2 528.0 885.1 529.5 887.7 531.8 889.3 532.6 893.5 533.6 897.6 534.0 901.8 534.1 906.0 534.1 910.2 533.9 914.4 533.6 918.6 533.1 922.7 532.6 926.9 531.9 927.5 531.8 931.1 531.0 935.3 529.8 939.5 528.1 939.7 528.0 943.7 525.6 945.4 524.2 947.8 521.6 948.8 520.4 950.8 516.6 952.0 513.3 952.2 512.8 953.0 509.0 953.5 505.2 953.6 501.3 953.5 497.5 953.0 493.7 952.2 489.9 952.0 489.4 950.8 486.1 948.8 482.3 947.8 481.1 945.4 478.5 943.7 477.1 939.7 474.7 939.5 474.6 935.3 472.9 931.1 471.7 927.5 470.9 926.9 470.8 M780.5 497.5 776.3 495.6 772.1 496.1 770.0 497.5 768.1 501.3 770.0 505.2 772.1 506.6 776.3 507.1 780.5 505.2 780.6 505.2 781.7 501.3 780.6 497.5 780.5 497.5 M860.0 417.6 855.8 416.1 851.6 415.4 847.4 415.3 843.3 415.9 839.1 417.2 838.2 417.6 834.9 419.6 832.7 421.4 830.7 423.8 829.7 425.2 827.9 429.1 826.8 432.9 826.5 435.8 826.4 436.7 826.5 438.6 826.6 440.5 827.5 444.3 829.3 448.1 830.7 450.0 832.5 451.9 834.9 453.7 838.5 455.7 839.1 455.9 843.3 457.3 847.4 458.4 851.6 459.1 855.8 459.5 856.0 459.5 860.0 459.6 862.2 459.5 864.2 459.4 868.4 458.3 871.8 455.7 872.5 454.4 873.4 451.9 873.9 448.1 873.9 444.3 873.6 440.5 873.0 436.7 872.5 435.0 872.0 432.9 870.5 429.1 868.5 425.2 868.4 425.0 865.4 421.4 864.2 420.3 860.1 417.6 860.0 417.6 M926.9 481.3 922.7 480.3 918.6 479.8 914.4 479.8 910.2 480.2 906.0 481.3 903.5 482.3 901.8 483.3 898.6 486.1 897.6 487.3 896.1 489.9 894.7 493.7 893.9 497.5 893.7 501.3 893.9 505.2 894.7 509.0 896.1 512.8 897.6 515.4 898.6 516.6 901.8 519.4 903.5 520.4 906.0 521.4 910.2 522.5 914.4 522.9 918.6 522.9 922.7 522.4 926.9 521.4 929.7 520.4 931.1 519.8 935.3 517.2 936.0 516.6 939.4 512.8 939.5 512.7 941.3 509.0 942.3 505.2 942.7 501.3 942.3 497.5 941.3 493.7 939.5 490.0 939.4 489.9 936.0 486.1 935.3 485.5 931.1 482.9 929.7 482.3 926.9 481.3 M918.6 501.3 918.6 501.3 918.6 501.3 918.6 501.3 918.6 501.3" fill="none" stroke="#1a1a1a" stroke-width="0.8" stroke-opacity="0.85"/></svg>
<div style="left:1091.5px;top:293px;width:3px;height:371px;background:#ececec"></div>
<div style="left:1094px;top:293px;width:105px;height:371px;background:#e9e9e9;border-left:1px solid #8f8f8f;box-sizing:border-box"></div>
<div style="left:1094px;top:294px;width:105px;height:15px;background:#d8d8d8;border:1px solid #a3a3a3;box-sizing:border-box"></div>
<svg style="left:1096px;top:297px" width="2" height="10"><path d="M1 0v10" stroke="#777" stroke-dasharray="1 1.5"/></svg>
<span style="left:1100px;top:301.5px;font-size:7px;color:#151515;letter-spacing:-0.3px">Example - Heat Map...</span>
<svg style="left:1168px;top:297px" width="30" height="9"><path d="M2.5 1.5h3v3.5h1v1h-5v-1h1zM4 6.5v2" stroke="#333" fill="#555" stroke-width="0.8"/><rect x="11.5" y="2" width="5.5" height="5" stroke="#333" fill="none" stroke-width="0.9"/><path d="M11.5 3h5.5" stroke="#333" stroke-width="1.2"/><path d="M22 2l5 5M27 2l-5 5" stroke="#222" stroke-width="1.1"/></svg>
<div style="left:1095px;top:312px;width:3px;height:1px;background:#c8c8c8"></div>
<div style="left:1125px;top:312px;width:72px;height:1px;background:#c8c8c8"></div>
<span style="left:1099px;top:312px;font-size:7px;color:#151515;letter-spacing:-0.3px">Position</span>
<span style="left:1099px;top:322.8px;font-size:7px;color:#151515;letter-spacing:-0.3px">Origin X:</span>
<div style="left:1149px;top:317.6px;width:43px;height:11px;background:#fff;border:1px solid #7a7a7a;box-sizing:border-box"></div>
<div style="left:1181px;top:318.6px;width:10px;height:9px;background:#e4e4e4;border-left:1px solid #c0c0c0;box-sizing:border-box"></div>
<svg style="left:1182px;top:318.6px" width="9" height="9"><path d="M2 4h5L4.5 1.5zM2 5.5h5L4.5 8z" fill="#222"/></svg>
<span style="left:1151px;top:323.1px;font-size:7px;color:#151515;letter-spacing:-0.3px">0</span>
<span style="left:1099px;top:337.90000000000003px;font-size:7px;color:#151515;letter-spacing:-0.3px">Origin Y:</span>
<div style="left:1149px;top:332.7px;width:43px;height:11px;background:#fff;border:1px solid #7a7a7a;box-sizing:border-box"></div>
<div style="left:1181px;top:333.7px;width:10px;height:9px;background:#e4e4e4;border-left:1px solid #c0c0c0;box-sizing:border-box"></div>
<svg style="left:1182px;top:333.7px" width="9" height="9"><path d="M2 4h5L4.5 1.5zM2 5.5h5L4.5 8z" fill="#222"/></svg>
<span style="left:1151px;top:338.2px;font-size:7px;color:#151515;letter-spacing:-0.3px">0</span>
<span style="left:1099px;top:353.0px;font-size:7px;color:#151515;letter-spacing:-0.3px">Step X:</span>
<div style="left:1149px;top:347.8px;width:43px;height:11px;background:#fff;border:1px solid #7a7a7a;box-sizing:border-box"></div>
<div style="left:1181px;top:348.8px;width:10px;height:9px;background:#e4e4e4;border-left:1px solid #c0c0c0;box-sizing:border-box"></div>
<svg style="left:1182px;top:348.8px" width="9" height="9"><path d="M2 4h5L4.5 1.5zM2 5.5h5L4.5 8z" fill="#222"/></svg>
<span style="left:1151px;top:353.3px;font-size:7px;color:#151515;letter-spacing:-0.3px">1</span>
<span style="left:1099px;top:368.1px;font-size:7px;color:#151515;letter-spacing:-0.3px">Step Y:</span>
<div style="left:1149px;top:362.9px;width:43px;height:11px;background:#fff;border:1px solid #7a7a7a;box-sizing:border-box"></div>
<div style="left:1181px;top:363.9px;width:10px;height:9px;background:#e4e4e4;border-left:1px solid #c0c0c0;box-sizing:border-box"></div>
<svg style="left:1182px;top:363.9px" width="9" height="9"><path d="M2 4h5L4.5 1.5zM2 5.5h5L4.5 8z" fill="#222"/></svg>
<span style="left:1151px;top:368.4px;font-size:7px;color:#151515;letter-spacing:-0.3px">1</span>
<div style="left:1095px;top:378px;width:104px;height:1px;background:#c4c4c4"></div>
<div style="left:1095px;top:383px;width:3px;height:1px;background:#c8c8c8"></div>
<div style="left:1124px;top:383px;width:73px;height:1px;background:#c8c8c8"></div>
<span style="left:1099px;top:383.5px;font-size:7px;color:#151515;letter-spacing:-0.3px">Contour</span>
<span style="left:1099px;top:393px;font-size:7px;color:#151515;letter-spacing:-0.3px">Contour Display Mode</span>
<div style="left:1097px;top:399px;width:95px;height:11px;background:#fff;border:1px solid #7a7a7a;box-sizing:border-box"></div>
<div style="left:1182px;top:400px;width:9px;height:9px;background:#f0f0f0;border-left:1px solid #c8c8c8;box-sizing:border-box"></div>
<svg style="left:1183px;top:400px" width="8" height="9"><path d="M2 4h4L4 6.5z" fill="#111"/></svg>
<span style="left:1100px;top:404.5px;font-size:7px;color:#151515;letter-spacing:-0.3px">Contour</span>
<span style="left:1099px;top:415.7px;font-size:7px;color:#151515;letter-spacing:-0.3px">Contour Color Mode:</span>
<div style="left:1097px;top:421px;width:95px;height:11px;background:#fff;border:1px solid #7a7a7a;box-sizing:border-box"></div>
<div style="left:1182px;top:422px;width:9px;height:9px;background:#f0f0f0;border-left:1px solid #c8c8c8;box-sizing:border-box"></div>
<svg style="left:1183px;top:422px" width="8" height="9"><path d="M2 4h4L4 6.5z" fill="#111"/></svg>
<span style="left:1100px;top:426.5px;font-size:7px;color:#151515;letter-spacing:-0.3px">Uniform</span>
<div style="left:1097px;top:441px;width:95px;height:15px;background:#e2e2e2;border:1px solid #8a8a8a;box-sizing:border-box"></div>
<span style="left:1097px;top:448.5px;width:95px;text-align:center;font-size:7px;color:#151515;letter-spacing:-0.3px">Contour Stroke Style ...</span>
<span style="left:1099px;top:465.5px;font-size:7px;color:#151515;letter-spacing:-0.3px">Contour Dot Size:</span>
<div style="left:1157px;top:460px;width:35px;height:11px;background:#fff;border:1px solid #7a7a7a;box-sizing:border-box"></div>
<div style="left:1181px;top:461px;width:10px;height:9px;background:#e4e4e4;border-left:1px solid #c0c0c0;box-sizing:border-box"></div>
<svg style="left:1182px;top:461px" width="9" height="9"><path d="M2 4h5L4.5 1.5zM2 5.5h5L4.5 8z" fill="#222"/></svg>
<span style="left:1159px;top:465.5px;font-size:7px;color:#151515;letter-spacing:-0.3px">2</span>
<div style="left:1095px;top:482px;width:104px;height:1px;background:#c4c4c4"></div>
<div style="left:1095px;top:488px;width:3px;height:1px;background:#c8c8c8"></div>
<div style="left:1112px;top:488px;width:85px;height:1px;background:#c8c8c8"></div>
<span style="left:1099px;top:488px;font-size:7px;color:#151515;letter-spacing:-0.3px">Grid</span>
<span style="left:1099px;top:498px;font-size:7px;color:#151515;letter-spacing:-0.3px">Grid Display Mode:</span>
<div style="left:1097px;top:504px;width:95px;height:11px;background:#fff;border:1px solid #7a7a7a;box-sizing:border-box"></div>
<div style="left:1182px;top:505px;width:9px;height:9px;background:#f0f0f0;border-left:1px solid #c8c8c8;box-sizing:border-box"></div>
<svg style="left:1183px;top:505px" width="8" height="9"><path d="M2 4h4L4 6.5z" fill="#111"/></svg>
<span style="left:1100px;top:509.5px;font-size:7px;color:#151515;letter-spacing:-0.3px">None</span>
<div style="left:1097px;top:519px;width:95px;height:14px;background:#e2e2e2;border:1px solid #8a8a8a;box-sizing:border-box"></div>
<span style="left:1097px;top:526.0px;width:95px;text-align:center;font-size:7px;color:#151515;letter-spacing:-0.3px">Grid Stroke Style ...</span>
<span style="left:1099px;top:542px;font-size:7px;color:#151515;letter-spacing:-0.3px">Grid Dot Size:</span>
<div style="left:1158px;top:536px;width:34px;height:11px;background:#fff;border:1px solid #7a7a7a;box-sizing:border-box"></div>
<div style="left:1181px;top:537px;width:10px;height:9px;background:#e4e4e4;border-left:1px solid #c0c0c0;box-sizing:border-box"></div>
<svg style="left:1182px;top:537px" width="9" height="9"><path d="M2 4h5L4.5 1.5zM2 5.5h5L4.5 8z" fill="#222"/></svg>
<span style="left:1160px;top:541.5px;font-size:7px;color:#151515;letter-spacing:-0.3px">2</span>
<div style="left:1095px;top:554px;width:104px;height:1px;background:#c4c4c4"></div>
<div style="left:1099px;top:562px;width:8px;height:8px;background:#fff;border:1px solid #444;box-sizing:border-box"></div>
<svg style="left:1099px;top:562px" width="8" height="8"><path d="M1.5 4l1.8 2 3.4-4.6" stroke="#111" stroke-width="1.1" fill="none"/></svg>
<span style="left:1109px;top:566px;font-size:7px;color:#151515;letter-spacing:-0.3px">Show Fill</span>
<div style="left:1099px;top:574px;width:8px;height:8px;background:#fff;border:1px solid #444;box-sizing:border-box"></div>
<svg style="left:1099px;top:574px" width="8" height="8"><path d="M1.5 4l1.8 2 3.4-4.6" stroke="#111" stroke-width="1.1" fill="none"/></svg>
<span style="left:1109px;top:578px;font-size:7px;color:#151515;letter-spacing:-0.3px">Smooth Palette</span>
<div style="left:1099px;top:587px;width:8px;height:8px;background:#fff;border:1px solid #444;box-sizing:border-box"></div>
<span style="left:1109px;top:591px;font-size:7px;color:#151515;letter-spacing:-0.3px">Interpolate Image</span>
<div style="left:757px;top:389.5px;width:1px;height:228px;background:#555"></div>
<div style="left:757px;top:617px;width:252px;height:1px;background:#555"></div>
<div style="left:754px;top:617.3px;width:4px;height:1px;background:#555"></div>
<span style="left:729px;top:616.5px;width:22px;text-align:right;font-size:7px;color:#333">0</span>
<div style="left:754px;top:579.3px;width:4px;height:1px;background:#555"></div>
<span style="left:729px;top:578.5px;width:22px;text-align:right;font-size:7px;color:#333">10</span>
<div style="left:754px;top:541.3px;width:4px;height:1px;background:#555"></div>
<span style="left:729px;top:540.5px;width:22px;text-align:right;font-size:7px;color:#333">20</span>
<div style="left:754px;top:503.3px;width:4px;height:1px;background:#555"></div>
<span style="left:729px;top:502.5px;width:22px;text-align:right;font-size:7px;color:#333">30</span>
<div style="left:754px;top:465.3px;width:4px;height:1px;background:#555"></div>
<span style="left:729px;top:464.5px;width:22px;text-align:right;font-size:7px;color:#333">40</span>
<div style="left:754px;top:427.3px;width:4px;height:1px;background:#555"></div>
<span style="left:729px;top:426.5px;width:22px;text-align:right;font-size:7px;color:#333">50</span>
<div style="left:754px;top:389.3px;width:4px;height:1px;background:#555"></div>
<span style="left:729px;top:388.5px;width:22px;text-align:right;font-size:7px;color:#333">60</span>
<div style="left:757.0px;top:614px;width:1px;height:5px;background:#555"></div>
<span style="left:747.5px;top:623.5px;width:20px;text-align:center;font-size:7px;color:#333">0</span>
<div style="left:777.9px;top:614px;width:1px;height:5px;background:#555"></div>
<span style="left:768.4px;top:623.5px;width:20px;text-align:center;font-size:7px;color:#333">5</span>
<div style="left:798.8px;top:614px;width:1px;height:5px;background:#555"></div>
<span style="left:789.3px;top:623.5px;width:20px;text-align:center;font-size:7px;color:#333">10</span>
<div style="left:819.7px;top:614px;width:1px;height:5px;background:#555"></div>
<span style="left:810.2px;top:623.5px;width:20px;text-align:center;font-size:7px;color:#333">15</span>
<div style="left:840.7px;top:614px;width:1px;height:5px;background:#555"></div>
<span style="left:831.2px;top:623.5px;width:20px;text-align:center;font-size:7px;color:#333">20</span>
<div style="left:861.6px;top:614px;width:1px;height:5px;background:#555"></div>
<span style="left:852.1px;top:623.5px;width:20px;text-align:center;font-size:7px;color:#333">25</span>
<div style="left:882.5px;top:614px;width:1px;height:5px;background:#555"></div>
<span style="left:873.0px;top:623.5px;width:20px;text-align:center;font-size:7px;color:#333">30</span>
<div style="left:903.4px;top:614px;width:1px;height:5px;background:#555"></div>
<span style="left:893.9px;top:623.5px;width:20px;text-align:center;font-size:7px;color:#333">35</span>
<div style="left:924.3px;top:614px;width:1px;height:5px;background:#555"></div>
<span style="left:914.8px;top:623.5px;width:20px;text-align:center;font-size:7px;color:#333">40</span>
<div style="left:945.2px;top:614px;width:1px;height:5px;background:#555"></div>
<span style="left:935.7px;top:623.5px;width:20px;text-align:center;font-size:7px;color:#333">45</span>
<div style="left:966.1px;top:614px;width:1px;height:5px;background:#555"></div>
<span style="left:956.6px;top:623.5px;width:20px;text-align:center;font-size:7px;color:#333">50</span>
<div style="left:987.1px;top:614px;width:1px;height:5px;background:#555"></div>
<span style="left:977.6px;top:623.5px;width:20px;text-align:center;font-size:7px;color:#333">55</span>
<div style="left:1008.0px;top:614px;width:1px;height:5px;background:#555"></div>
<span style="left:998.5px;top:623.5px;width:20px;text-align:center;font-size:7px;color:#333">60</span>
<div style="left:1029px;top:461.5px;width:50px;height:98px;background:#fff;border:1px solid #8a8a8a;box-sizing:border-box"></div>
<div style="left:1031px;top:464.5px;width:9px;height:9px;background:#e8202a;border:1px solid #444;box-sizing:border-box"></div>
<span style="left:1042px;top:469.0px;font-size:7.4px;color:#222;letter-spacing:0px">1.002527</span>
<div style="left:1030px;top:474.7px;width:48px;height:1px;background:#d0d0d0"></div>
<div style="left:1031px;top:476.7px;width:9px;height:9px;background:#f7a51e;border:1px solid #444;box-sizing:border-box"></div>
<span style="left:1042px;top:481.2px;font-size:7.4px;color:#222;letter-spacing:0px">2.426761</span>
<div style="left:1030px;top:486.9px;width:48px;height:1px;background:#d0d0d0"></div>
<div style="left:1031px;top:488.9px;width:9px;height:9px;background:#f7ee1a;border:1px solid #444;box-sizing:border-box"></div>
<span style="left:1042px;top:493.4px;font-size:7.4px;color:#222;letter-spacing:0px">3.850995</span>
<div style="left:1030px;top:499.1px;width:48px;height:1px;background:#d0d0d0"></div>
<div style="left:1031px;top:501.1px;width:9px;height:9px;background:#a3d98f;border:1px solid #444;box-sizing:border-box"></div>
<span style="left:1042px;top:505.6px;font-size:7.4px;color:#222;letter-spacing:0px">5.275228</span>
<div style="left:1030px;top:511.3px;width:48px;height:1px;background:#d0d0d0"></div>
<div style="left:1031px;top:513.3px;width:9px;height:9px;background:#3cb94a;border:1px solid #444;box-sizing:border-box"></div>
<span style="left:1042px;top:517.8px;font-size:7.4px;color:#222;letter-spacing:0px">6.699462</span>
<div style="left:1030px;top:523.5px;width:48px;height:1px;background:#d0d0d0"></div>
<div style="left:1031px;top:525.5px;width:9px;height:9px;background:#6a9be0;border:1px solid #444;box-sizing:border-box"></div>
<span style="left:1042px;top:530.0px;font-size:7.4px;color:#222;letter-spacing:0px">8.123696</span>
<div style="left:1030px;top:535.7px;width:48px;height:1px;background:#d0d0d0"></div>
<div style="left:1031px;top:537.7px;width:9px;height:9px;background:#6a5fc0;border:1px solid #444;box-sizing:border-box"></div>
<span style="left:1042px;top:542.2px;font-size:7.4px;color:#222;letter-spacing:0px">9.547929</span>
<div style="left:1030px;top:547.9px;width:48px;height:1px;background:#d0d0d0"></div>
<div style="left:1031px;top:549.9px;width:9px;height:9px;background:#6e1a8a;border:1px solid #444;box-sizing:border-box"></div>
<span style="left:1042px;top:554.4px;font-size:7.4px;color:#222;letter-spacing:0px">10.972163</span>
</div></body></html>
